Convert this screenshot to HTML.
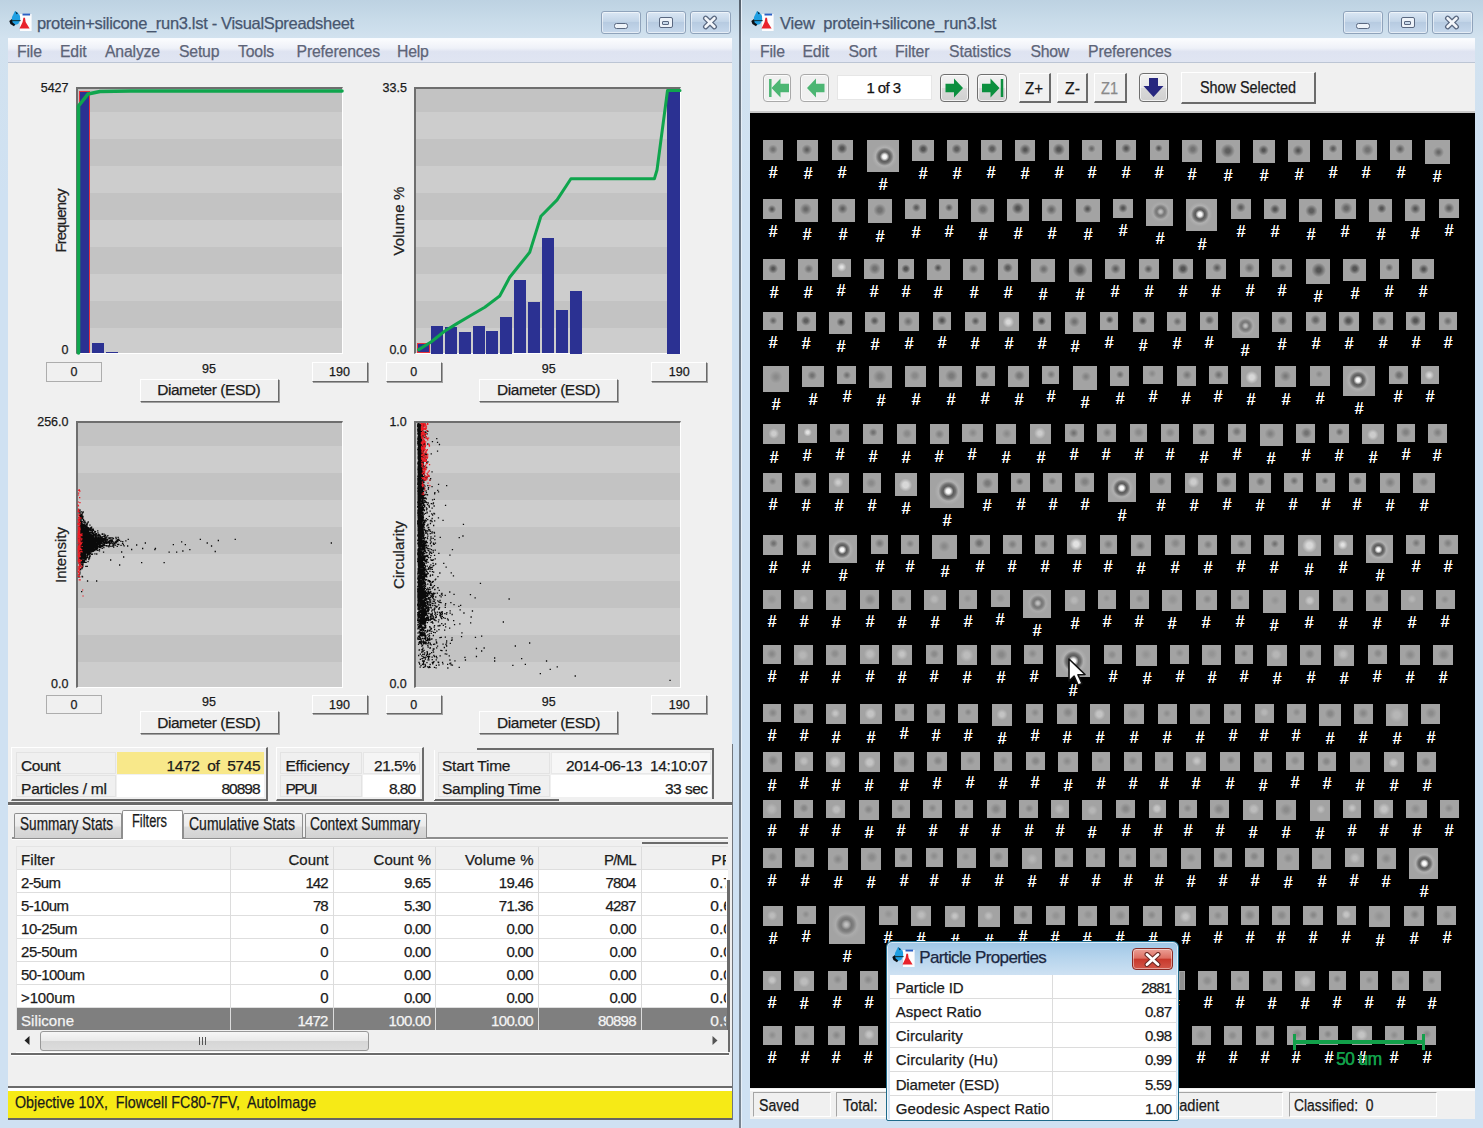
<!DOCTYPE html>
<html><head><meta charset="utf-8"><title>VisualSpreadsheet</title>
<style>
html,body{margin:0;padding:0;}
body{width:1483px;height:1128px;position:relative;overflow:hidden;background:#cfdff0;font-family:"Liberation Sans",sans-serif;}
div,span.t,svg{position:absolute;box-sizing:border-box;}
span.t{white-space:pre;-webkit-text-stroke:.25px;}
.p{background:#a3a3a3;}
.h{color:#fff;font-size:17px;line-height:17px;width:20px;text-align:center;text-shadow:.3px 0 0 #fff;transform:scaleX(.9);}
.raised{background:#f0f0f0;border:1px solid;border-color:#fff #696969 #696969 #fff;box-shadow:1px 1px 0 #a0a0a0;}
</style></head><body>
<div style="left:738px;top:0px;width:5px;height:1128px;background:#dfe9f4;"></div>
<div style="left:0px;top:0px;width:739px;height:1128px;background:linear-gradient(180deg,#bdd2e2 0px,#c8dbe9 20px,#d2e2ef 38px,#cfe1f2 200px,#cfe1f2 1128px);"></div>
<svg style="left:8px;top:9px" width="26" height="24" viewBox="8 9 26 24"><rect x="20" y="14" width="11.6" height="17" fill="#fcfcfd"/><rect x="22.5" y="13.6" width="7.6" height="1.9" fill="#2b5fc4"/><path d="M15 11 L12 17 L11.5 22 L14 25.2 L18.2 24 L20.2 20 L20 16 L17.5 12.5 Z" fill="#1f9fe2"/><path d="M12 19 L9.3 21 L10.4 24 L14 26.2 L15.2 24.6 L12.6 22.6 Z" fill="#0b1116"/><path d="M12 20.6 L20.6 20.6" stroke="#0f3a44" stroke-width="1.1"/><path d="M15.3 11.3 L18 13.6 L16.4 14.2 Z" fill="#0c2b45"/><path d="M23.4 17.8 L25 17.8 L25.6 22 L29.6 28.6 L19.4 28.6 L21 25.5 L22.6 22 Z" fill="#e8232c"/></svg>
<span class="t" style="left:37.0px;top:13.3px;font-size:16.5px;line-height:20px;color:#47566f;letter-spacing:-0.32px;">protein+silicone_run3.lst - VisualSpreadsheet</span>
<div style="left:600.5px;top:11px;width:40.5px;height:23px;border:1px solid #8fa3bb;border-radius:3px;background:linear-gradient(180deg,#dbe7f4,#c3d5e8 45%,#b7cbe1 50%,#c6d8ec);box-shadow:inset 0 0 0 1px rgba(255,255,255,.55);"></div>
<div style="left:613.75px;top:23px;width:14px;height:6px;border:1.5px solid #5a6880;border-radius:2.5px;background:#eef3f9;"></div>
<div style="left:645.5px;top:11px;width:40px;height:23px;border:1px solid #8fa3bb;border-radius:3px;background:linear-gradient(180deg,#dbe7f4,#c3d5e8 45%,#b7cbe1 50%,#c6d8ec);box-shadow:inset 0 0 0 1px rgba(255,255,255,.55);"></div>
<div style="left:658.5px;top:17px;width:14px;height:11px;border:1.5px solid #5a6880;border-radius:2px;background:#eef3f9;"></div>
<div style="left:662px;top:20.5px;width:7px;height:4px;border:1.5px solid #5a6880;border-radius:1px;background:#c9d9ea;"></div>
<div style="left:689.5px;top:11px;width:41px;height:23px;border:1px solid #8fa3bb;border-radius:3px;background:linear-gradient(180deg,#dbe7f4,#c3d5e8 45%,#b7cbe1 50%,#c6d8ec);box-shadow:inset 0 0 0 1px rgba(255,255,255,.55);"></div>
<svg style="left:702px;top:15px" width="16" height="15" viewBox="0 0 16 15"><path d="M3.6 3.2 L12.4 11.8 M12.4 3.2 L3.6 11.8" stroke="#5a6880" stroke-width="5.2" stroke-linecap="round"/><path d="M3.6 3.2 L12.4 11.8 M12.4 3.2 L3.6 11.8" stroke="#f4f7fb" stroke-width="2.6" stroke-linecap="round"/></svg>
<div style="left:738.7px;top:0px;width:2px;height:1128px;background:linear-gradient(180deg,#56616d 0,#6d7884 60px,#7a8590 100%);"></div>
<div style="left:740.5px;top:0px;width:1px;height:1128px;background:#e6eff8;"></div>
<div style="left:8px;top:38px;width:724px;height:25px;background:linear-gradient(180deg,#fbfcfe 0,#eef1f8 40%,#dee3f1 55%,#e0e5f2 100%);border-bottom:1px solid #bcc5d4;border-top:1px solid #f8fbff;"></div>
<span class="t" style="left:17.0px;top:42.0px;font-size:15.8px;line-height:19px;color:#5d6478;letter-spacing:-0.16px;">File</span>
<span class="t" style="left:60.0px;top:42.0px;font-size:15.8px;line-height:19px;color:#5d6478;letter-spacing:-0.17px;">Edit</span>
<span class="t" style="left:105.0px;top:42.0px;font-size:15.8px;line-height:19px;color:#5d6478;letter-spacing:-0.18px;">Analyze</span>
<span class="t" style="left:179.0px;top:42.0px;font-size:15.8px;line-height:19px;color:#5d6478;letter-spacing:-0.20px;">Setup</span>
<span class="t" style="left:238.0px;top:42.0px;font-size:15.8px;line-height:19px;color:#5d6478;letter-spacing:-0.18px;">Tools</span>
<span class="t" style="left:296.5px;top:42.0px;font-size:15.8px;line-height:19px;color:#5d6478;letter-spacing:-0.16px;">Preferences</span>
<span class="t" style="left:397.0px;top:42.0px;font-size:15.8px;line-height:19px;color:#5d6478;letter-spacing:-0.21px;">Help</span>
<div style="left:8px;top:63px;width:724px;height:1057px;background:#f0f0f0;"></div>
<div style="left:731.6px;top:744px;width:1.5px;height:376px;background:#70757c;"></div>
<div style="left:742px;top:0px;width:741px;height:1128px;background:linear-gradient(180deg,#bdd2e2 0px,#c8dbe9 20px,#d2e2ef 38px,#cfe1f2 200px,#cfe1f2 1128px);"></div>
<svg style="left:750px;top:9px" width="26" height="24" viewBox="8 9 26 24"><rect x="20" y="14" width="11.6" height="17" fill="#fcfcfd"/><rect x="22.5" y="13.6" width="7.6" height="1.9" fill="#2b5fc4"/><path d="M15 11 L12 17 L11.5 22 L14 25.2 L18.2 24 L20.2 20 L20 16 L17.5 12.5 Z" fill="#1f9fe2"/><path d="M12 19 L9.3 21 L10.4 24 L14 26.2 L15.2 24.6 L12.6 22.6 Z" fill="#0b1116"/><path d="M12 20.6 L20.6 20.6" stroke="#0f3a44" stroke-width="1.1"/><path d="M15.3 11.3 L18 13.6 L16.4 14.2 Z" fill="#0c2b45"/><path d="M23.4 17.8 L25 17.8 L25.6 22 L29.6 28.6 L19.4 28.6 L21 25.5 L22.6 22 Z" fill="#e8232c"/></svg>
<span class="t" style="left:780.0px;top:13.3px;font-size:16.5px;line-height:20px;color:#47566f;letter-spacing:-0.22px;">View  protein+silicone_run3.lst</span>
<div style="left:1342.5px;top:11px;width:40.5px;height:23px;border:1px solid #8fa3bb;border-radius:3px;background:linear-gradient(180deg,#dbe7f4,#c3d5e8 45%,#b7cbe1 50%,#c6d8ec);box-shadow:inset 0 0 0 1px rgba(255,255,255,.55);"></div>
<div style="left:1355.75px;top:23px;width:14px;height:6px;border:1.5px solid #5a6880;border-radius:2.5px;background:#eef3f9;"></div>
<div style="left:1387.5px;top:11px;width:40px;height:23px;border:1px solid #8fa3bb;border-radius:3px;background:linear-gradient(180deg,#dbe7f4,#c3d5e8 45%,#b7cbe1 50%,#c6d8ec);box-shadow:inset 0 0 0 1px rgba(255,255,255,.55);"></div>
<div style="left:1400.5px;top:17px;width:14px;height:11px;border:1.5px solid #5a6880;border-radius:2px;background:#eef3f9;"></div>
<div style="left:1404px;top:20.5px;width:7px;height:4px;border:1.5px solid #5a6880;border-radius:1px;background:#c9d9ea;"></div>
<div style="left:1431.5px;top:11px;width:41px;height:23px;border:1px solid #8fa3bb;border-radius:3px;background:linear-gradient(180deg,#dbe7f4,#c3d5e8 45%,#b7cbe1 50%,#c6d8ec);box-shadow:inset 0 0 0 1px rgba(255,255,255,.55);"></div>
<svg style="left:1444px;top:15px" width="16" height="15" viewBox="0 0 16 15"><path d="M3.6 3.2 L12.4 11.8 M12.4 3.2 L3.6 11.8" stroke="#5a6880" stroke-width="5.2" stroke-linecap="round"/><path d="M3.6 3.2 L12.4 11.8 M12.4 3.2 L3.6 11.8" stroke="#f4f7fb" stroke-width="2.6" stroke-linecap="round"/></svg>
<div style="left:750px;top:38px;width:725px;height:25px;background:linear-gradient(180deg,#fbfcfe 0,#eef1f8 40%,#dee3f1 55%,#e0e5f2 100%);border-bottom:1px solid #bcc5d4;border-top:1px solid #f8fbff;"></div>
<span class="t" style="left:760.0px;top:42.0px;font-size:15.8px;line-height:19px;color:#5d6478;letter-spacing:-0.16px;">File</span>
<span class="t" style="left:802.5px;top:42.0px;font-size:15.8px;line-height:19px;color:#5d6478;letter-spacing:-0.17px;">Edit</span>
<span class="t" style="left:848.5px;top:42.0px;font-size:15.8px;line-height:19px;color:#5d6478;letter-spacing:-0.18px;">Sort</span>
<span class="t" style="left:895.0px;top:42.0px;font-size:15.8px;line-height:19px;color:#5d6478;letter-spacing:-0.13px;">Filter</span>
<span class="t" style="left:949.0px;top:42.0px;font-size:15.8px;line-height:19px;color:#5d6478;letter-spacing:-0.13px;">Statistics</span>
<span class="t" style="left:1030.5px;top:42.0px;font-size:15.8px;line-height:19px;color:#5d6478;letter-spacing:-0.25px;">Show</span>
<span class="t" style="left:1088.0px;top:42.0px;font-size:15.8px;line-height:19px;color:#5d6478;letter-spacing:-0.16px;">Preferences</span>
<div style="left:750px;top:63px;width:725px;height:1056px;background:#f0f0f0;"></div>
<div style="left:75.5px;top:87px;width:267px;height:267px;background:linear-gradient(180deg,#c3c3c3 0.00px 23.40px,#cdcdcd 23.40px 50.30px,#c3c3c3 50.30px 77.20px,#cdcdcd 77.20px 104.10px,#c3c3c3 104.10px 131.00px,#cdcdcd 131.00px 157.90px,#c3c3c3 157.90px 184.80px,#cdcdcd 184.80px 211.70px,#c3c3c3 211.70px 238.60px,#cdcdcd 238.60px 267.00px);border:1.5px solid;border-color:#6e6e6e #fff #fff #6e6e6e;border-top-width:2px;border-left-width:2px;"></div>
<span class="t" style="left:40.7px;top:80.7px;font-size:12.5px;line-height:15px;color:#1a1a1a;">5427</span>
<span class="t" style="left:61.5px;top:343.2px;font-size:12.5px;line-height:15px;color:#1a1a1a;">0</span>
<span class="t" style="left:60px;top:221px;font-size:15px;line-height:15px;color:#222;transform:translate(-50%,-50%) rotate(-90deg);letter-spacing:-0.86px;">Frequency</span>
<div style="left:46px;top:362px;width:56px;height:19.5px;background:#f0f0f0;border:1px solid #adadad;"></div>
<span class="t" style="left:70.5px;top:364.7px;font-size:12.5px;line-height:15px;color:#1a1a1a;">0</span>
<span class="t" style="left:202.0px;top:362.4px;font-size:12.5px;line-height:15px;color:#1a1a1a;">95</span>
<div class="raised" style="left:311.5px;top:362px;width:56px;height:19.5px;"></div>
<span class="t" style="left:329.1px;top:364.7px;font-size:12.5px;line-height:15px;color:#1a1a1a;">190</span>
<div class="raised" style="left:139.5px;top:378.5px;width:139px;height:23px;"></div>
<span class="t" style="left:157.2px;top:380.1px;font-size:15.5px;line-height:19px;color:#1a1a1a;letter-spacing:-0.45px;">Diameter (ESD)</span>
<div style="left:413.8px;top:87px;width:267px;height:267px;background:linear-gradient(180deg,#c3c3c3 0.00px 23.40px,#cdcdcd 23.40px 50.30px,#c3c3c3 50.30px 77.20px,#cdcdcd 77.20px 104.10px,#c3c3c3 104.10px 131.00px,#cdcdcd 131.00px 157.90px,#c3c3c3 157.90px 184.80px,#cdcdcd 184.80px 211.70px,#c3c3c3 211.70px 238.60px,#cdcdcd 238.60px 267.00px);border:1.5px solid;border-color:#6e6e6e #fff #fff #6e6e6e;border-top-width:2px;border-left-width:2px;"></div>
<span class="t" style="left:382.5px;top:80.7px;font-size:12.5px;line-height:15px;color:#1a1a1a;">33.5</span>
<span class="t" style="left:389.4px;top:343.2px;font-size:12.5px;line-height:15px;color:#1a1a1a;">0.0</span>
<span class="t" style="left:398.3px;top:221px;font-size:15px;line-height:15px;color:#222;transform:translate(-50%,-50%) rotate(-90deg);letter-spacing:0.21px;">Volume %</span>
<div class="raised" style="left:385.7px;top:362px;width:56px;height:19.5px;"></div>
<span class="t" style="left:410.2px;top:364.7px;font-size:12.5px;line-height:15px;color:#1a1a1a;">0</span>
<span class="t" style="left:541.7px;top:362.4px;font-size:12.5px;line-height:15px;color:#1a1a1a;">95</span>
<div class="raised" style="left:651.2px;top:362px;width:56px;height:19.5px;"></div>
<span class="t" style="left:668.8px;top:364.7px;font-size:12.5px;line-height:15px;color:#1a1a1a;">190</span>
<div class="raised" style="left:479.2px;top:378.5px;width:139px;height:23px;"></div>
<span class="t" style="left:497.0px;top:380.1px;font-size:15.5px;line-height:19px;color:#1a1a1a;letter-spacing:-0.45px;">Diameter (ESD)</span>
<div style="left:75.5px;top:421px;width:267px;height:267px;background:linear-gradient(180deg,#c3c3c3 0.00px 23.40px,#cdcdcd 23.40px 50.30px,#c3c3c3 50.30px 77.20px,#cdcdcd 77.20px 104.10px,#c3c3c3 104.10px 131.00px,#cdcdcd 131.00px 157.90px,#c3c3c3 157.90px 184.80px,#cdcdcd 184.80px 211.70px,#c3c3c3 211.70px 238.60px,#cdcdcd 238.60px 267.00px);border:1.5px solid;border-color:#6e6e6e #fff #fff #6e6e6e;border-top-width:2px;border-left-width:2px;"></div>
<span class="t" style="left:37.2px;top:414.7px;font-size:12.5px;line-height:15px;color:#1a1a1a;">256.0</span>
<span class="t" style="left:51.1px;top:677.2px;font-size:12.5px;line-height:15px;color:#1a1a1a;">0.0</span>
<span class="t" style="left:60px;top:555px;font-size:15px;line-height:15px;color:#222;transform:translate(-50%,-50%) rotate(-90deg);letter-spacing:0.02px;">Intensity</span>
<div style="left:46px;top:694.8px;width:56px;height:19.5px;background:#f0f0f0;border:1px solid #adadad;"></div>
<span class="t" style="left:70.5px;top:697.5px;font-size:12.5px;line-height:15px;color:#1a1a1a;">0</span>
<span class="t" style="left:202.0px;top:695.2px;font-size:12.5px;line-height:15px;color:#1a1a1a;">95</span>
<div class="raised" style="left:311.5px;top:694.8px;width:56px;height:19.5px;"></div>
<span class="t" style="left:329.1px;top:697.5px;font-size:12.5px;line-height:15px;color:#1a1a1a;">190</span>
<div class="raised" style="left:139.5px;top:711.3px;width:139px;height:23px;"></div>
<span class="t" style="left:157.2px;top:712.9px;font-size:15.5px;line-height:19px;color:#1a1a1a;letter-spacing:-0.45px;">Diameter (ESD)</span>
<div style="left:413.8px;top:421px;width:267px;height:267px;background:linear-gradient(180deg,#c3c3c3 0.00px 23.40px,#cdcdcd 23.40px 50.30px,#c3c3c3 50.30px 77.20px,#cdcdcd 77.20px 104.10px,#c3c3c3 104.10px 131.00px,#cdcdcd 131.00px 157.90px,#c3c3c3 157.90px 184.80px,#cdcdcd 184.80px 211.70px,#c3c3c3 211.70px 238.60px,#cdcdcd 238.60px 267.00px);border:1.5px solid;border-color:#6e6e6e #fff #fff #6e6e6e;border-top-width:2px;border-left-width:2px;"></div>
<span class="t" style="left:389.4px;top:414.7px;font-size:12.5px;line-height:15px;color:#1a1a1a;">1.0</span>
<span class="t" style="left:389.4px;top:677.2px;font-size:12.5px;line-height:15px;color:#1a1a1a;">0.0</span>
<span class="t" style="left:398.3px;top:555px;font-size:15px;line-height:15px;color:#222;transform:translate(-50%,-50%) rotate(-90deg);letter-spacing:0.13px;">Circularity</span>
<div class="raised" style="left:385.7px;top:694.8px;width:56px;height:19.5px;"></div>
<span class="t" style="left:410.2px;top:697.5px;font-size:12.5px;line-height:15px;color:#1a1a1a;">0</span>
<span class="t" style="left:541.7px;top:695.2px;font-size:12.5px;line-height:15px;color:#1a1a1a;">95</span>
<div class="raised" style="left:651.2px;top:694.8px;width:56px;height:19.5px;"></div>
<span class="t" style="left:668.8px;top:697.5px;font-size:12.5px;line-height:15px;color:#1a1a1a;">190</span>
<div class="raised" style="left:479.2px;top:711.3px;width:139px;height:23px;"></div>
<span class="t" style="left:497.0px;top:712.9px;font-size:15.5px;line-height:19px;color:#1a1a1a;letter-spacing:-0.45px;">Diameter (ESD)</span>
<div style="left:78.5px;top:91px;width:11.5px;height:262px;background:#2b3192;border:1px solid #e8323c;border-bottom:none;"></div>
<div style="left:92px;top:342.5px;width:12px;height:10.5px;background:#2b3192;"></div>
<div style="left:105.5px;top:351.5px;width:12px;height:1.5px;background:#2b3192;"></div>
<svg style="left:70px;top:80px" width="280" height="280" viewBox="70 80 280 280"><path d="M78.5 353 L78.5 106 L88 94 L100 91.5 L130 91 L342 91" fill="none" stroke="#0fa54d" stroke-width="3.6" stroke-linejoin="round" stroke-linecap="round"/></svg>
<div style="left:417.4px;top:342.9px;width:12.6px;height:10.6px;background:#2b3192;border:1px solid #e8323c;"></div>
<div style="left:431px;top:326px;width:12.3px;height:27.5px;background:#2b3192;"></div>
<div style="left:444.8px;top:327px;width:12.2px;height:26.5px;background:#2b3192;"></div>
<div style="left:458.6px;top:332px;width:12px;height:21.5px;background:#2b3192;"></div>
<div style="left:472.5px;top:326px;width:12.3px;height:27.5px;background:#2b3192;"></div>
<div style="left:486.3px;top:331px;width:12.2px;height:22.5px;background:#2b3192;"></div>
<div style="left:500.2px;top:316.5px;width:12px;height:37px;background:#2b3192;"></div>
<div style="left:514.2px;top:279.8px;width:12.3px;height:73.7px;background:#2b3192;"></div>
<div style="left:528.2px;top:301.7px;width:12px;height:51.8px;background:#2b3192;"></div>
<div style="left:542.1px;top:237.9px;width:12px;height:115.6px;background:#2b3192;"></div>
<div style="left:556px;top:309.7px;width:12.2px;height:43.8px;background:#2b3192;"></div>
<div style="left:569.8px;top:290.5px;width:12.2px;height:63px;background:#2b3192;"></div>
<div style="left:667px;top:92px;width:12.5px;height:261.5px;background:#2b3192;"></div>
<svg style="left:410px;top:80px" width="280" height="280" viewBox="410 80 280 280"><path d="M418.7 349.6 L431 342 L444.9 331 L457.3 323.4 L469.8 316 L484.8 307.2 L499.7 296 L509.7 277.3 L519.7 264.8 L529.7 252.3 L535.9 232.4 L540.9 216.2 L557.1 199.9 L570.9 178.7 L654.4 178.7 L657 170 L667.5 90.5 L680 90.5" fill="none" stroke="#0fa54d" stroke-width="3" stroke-linejoin="round" stroke-linecap="round"/></svg>
<svg style="left:76px;top:423px" width="266" height="264" viewBox="76 423 266 264"><path d="M81.4 550.3h1.3M78.9 555.9h1.3M84.4 539.5h1.3M84.0 543.8h1.3M78.6 537.2h1.3M79.1 543.4h1.3M82.7 543.8h1.3M80.3 536.4h1.3M86.2 551.1h1.3M82.3 537.4h1.3M108.2 546.8h1.3M81.0 547.6h1.3M79.5 548.9h1.3M91.8 544.7h1.3M79.9 527.3h1.3M82.0 534.5h1.3M84.6 544.2h1.3M80.1 543.0h1.3M87.4 535.9h1.3M85.3 544.6h1.3M83.1 536.4h1.3M87.9 553.3h1.3M80.5 529.5h1.3M94.9 538.9h1.3M88.8 537.1h1.3M79.3 573.9h1.3M82.6 541.7h1.3M83.7 536.3h1.3M78.6 531.1h1.3M85.1 529.3h1.3M95.0 538.6h1.3M85.5 552.9h1.3M85.2 526.5h1.3M101.5 543.3h1.3M83.4 539.8h1.3M88.0 539.4h1.3M86.6 555.4h1.3M81.0 540.6h1.3M82.2 540.5h1.3M83.3 539.8h1.3M79.8 544.5h1.3M90.0 542.9h1.3M79.4 541.7h1.3M94.7 546.3h1.3M79.0 526.9h1.3M95.5 543.3h1.3M92.0 544.4h1.3M82.6 535.6h1.3M81.9 560.4h1.3M79.6 522.0h1.3M79.9 542.4h1.3M83.6 548.0h1.3M85.4 541.4h1.3M82.6 542.4h1.3M82.0 518.9h1.3M87.7 534.4h1.3M84.1 531.8h1.3M78.7 529.0h1.3M96.7 543.2h1.3M91.1 529.9h1.3M82.3 537.8h1.3M86.3 543.6h1.3M78.8 549.2h1.3M79.7 544.8h1.3M81.6 541.7h1.3M79.6 541.6h1.3M79.2 539.7h1.3M94.9 542.3h1.3M85.9 545.1h1.3M81.7 547.7h1.3M81.9 555.5h1.3M118.1 544.5h1.3M83.3 537.6h1.3M79.2 542.0h1.3M81.7 539.7h1.3M79.7 563.2h1.3M78.5 556.2h1.3M79.6 537.2h1.3M84.6 551.8h1.3M109.0 542.1h1.3M94.2 540.2h1.3M82.0 534.2h1.3M79.8 543.5h1.3M90.4 534.1h1.3M81.5 544.7h1.3M111.9 546.0h1.3M93.6 544.7h1.3M89.1 530.2h1.3M80.4 531.2h1.3M78.5 540.2h1.3M78.5 539.7h1.3M87.7 546.8h1.3M103.4 534.2h1.3M113.7 543.3h1.3M103.1 540.0h1.3M80.4 547.4h1.3M80.1 546.0h1.3M96.7 547.3h1.3M93.0 533.9h1.3M91.2 542.6h1.3M79.0 527.3h1.3M90.5 530.4h1.3M89.4 537.5h1.3M90.8 542.0h1.3M81.5 550.1h1.3M82.3 516.7h1.3M82.4 556.3h1.3M79.8 535.4h1.3M79.4 556.4h1.3M91.4 551.6h1.3M79.6 556.7h1.3M86.9 523.1h1.3M81.8 536.4h1.3M78.4 539.5h1.3M106.6 539.4h1.3M100.0 537.8h1.3M82.9 553.8h1.3M80.2 526.4h1.3M80.6 539.3h1.3M85.4 547.3h1.3M80.7 536.5h1.3M97.6 542.6h1.3M81.8 528.6h1.3M97.1 543.0h1.3M82.7 551.3h1.3M84.4 536.5h1.3M84.2 550.8h1.3M79.9 542.9h1.3M78.3 543.9h1.3M83.4 536.2h1.3M88.6 535.9h1.3M84.1 538.8h1.3M84.8 542.3h1.3M84.9 537.6h1.3M80.6 538.3h1.3M84.0 556.5h1.3M84.9 542.7h1.3M83.0 520.8h1.3M85.9 532.1h1.3M87.7 541.2h1.3M83.1 531.1h1.3M101.0 540.6h1.3M87.9 553.3h1.3M80.7 523.3h1.3M84.9 556.5h1.3M79.5 533.6h1.3M79.3 537.2h1.3M80.5 543.0h1.3M78.9 531.1h1.3M96.5 534.8h1.3M79.6 537.9h1.3M79.5 524.7h1.3M95.5 544.7h1.3M102.7 541.0h1.3M82.4 512.0h1.3M92.6 542.8h1.3M79.7 528.8h1.3M81.6 546.6h1.3M80.0 533.9h1.3M78.5 559.8h1.3M84.8 540.0h1.3M81.5 542.2h1.3M86.1 538.7h1.3M111.9 541.4h1.3M90.7 544.2h1.3M80.8 540.6h1.3M78.6 543.3h1.3M79.4 532.3h1.3M82.7 556.5h1.3M80.7 530.9h1.3M79.6 554.8h1.3M87.9 537.1h1.3M79.0 558.8h1.3M82.7 546.6h1.3M78.9 557.6h1.3M91.2 538.4h1.3M79.0 544.3h1.3M94.2 540.1h1.3M83.1 535.2h1.3M99.2 545.7h1.3M80.8 550.6h1.3M80.5 551.3h1.3M79.2 543.5h1.3M80.1 544.6h1.3M81.3 535.5h1.3M81.0 558.4h1.3M83.8 545.1h1.3M78.4 552.0h1.3M80.6 559.2h1.3M84.7 542.8h1.3M80.0 515.2h1.3M79.2 545.9h1.3M92.0 535.6h1.3M92.7 544.1h1.3M82.3 526.6h1.3M110.6 541.3h1.3M81.7 549.4h1.3M86.4 531.1h1.3M82.4 539.6h1.3M79.4 544.7h1.3M78.9 541.0h1.3M79.7 532.6h1.3M79.0 554.8h1.3M87.2 529.2h1.3M80.9 541.9h1.3M83.2 549.2h1.3M79.7 532.9h1.3M104.4 542.3h1.3M107.1 539.4h1.3M105.3 540.8h1.3M81.3 541.2h1.3M82.1 541.9h1.3M83.4 535.4h1.3M83.9 541.4h1.3M78.3 541.0h1.3M82.4 545.7h1.3M78.6 552.0h1.3M80.4 542.8h1.3M85.3 528.2h1.3M86.9 539.3h1.3M88.4 546.4h1.3M81.5 534.4h1.3M111.8 543.9h1.3M86.5 551.3h1.3M78.7 554.9h1.3M86.2 527.5h1.3M88.9 542.9h1.3M84.2 537.1h1.3M83.9 549.6h1.3M92.3 533.0h1.3M85.3 551.1h1.3M87.8 534.9h1.3M80.4 547.3h1.3M81.9 542.5h1.3M79.2 549.4h1.3M86.2 533.1h1.3M86.2 537.7h1.3M78.3 528.2h1.3M91.1 541.4h1.3M84.4 531.4h1.3M86.9 552.5h1.3M80.6 548.7h1.3M78.9 539.6h1.3M80.1 559.6h1.3M89.1 549.0h1.3M82.2 539.7h1.3M83.5 535.2h1.3M86.0 529.3h1.3M86.5 545.3h1.3M80.6 544.4h1.3M89.2 538.7h1.3M78.4 556.9h1.3M78.8 539.3h1.3M87.7 551.9h1.3M87.3 539.3h1.3M83.3 552.2h1.3M83.3 555.8h1.3M80.1 557.7h1.3M108.9 542.0h1.3M83.2 540.8h1.3M92.0 547.4h1.3M80.8 539.2h1.3M80.2 548.8h1.3M85.3 539.6h1.3M79.5 512.9h1.3M79.4 537.1h1.3M92.0 530.0h1.3M88.0 540.7h1.3M80.4 551.7h1.3M78.5 532.8h1.3M78.3 527.6h1.3M81.2 542.1h1.3M79.5 535.8h1.3M93.0 545.3h1.3M78.3 541.6h1.3M79.3 518.8h1.3M99.2 539.6h1.3M81.0 519.2h1.3M82.0 512.9h1.3M85.4 559.9h1.3M81.9 534.2h1.3M78.7 545.8h1.3M79.2 546.5h1.3M100.2 538.9h1.3M80.6 540.2h1.3M80.0 555.0h1.3M82.0 561.4h1.3M91.7 538.3h1.3M86.3 557.1h1.3M84.7 531.1h1.3M88.5 551.9h1.3M83.1 546.1h1.3M89.5 538.3h1.3M78.7 533.5h1.3M99.2 544.6h1.3M81.7 549.8h1.3M81.1 539.5h1.3M80.7 511.9h1.3M86.8 538.5h1.3M82.3 553.4h1.3M79.8 545.7h1.3M97.2 544.0h1.3M83.8 545.1h1.3M123.5 545.8h1.3M83.1 545.4h1.3M79.1 547.6h1.3M81.6 547.8h1.3M80.7 545.9h1.3M85.0 551.9h1.3M82.6 531.1h1.3M82.6 532.2h1.3M81.6 540.0h1.3M78.8 536.0h1.3M79.4 572.1h1.3M83.9 529.4h1.3M80.2 525.3h1.3M80.8 541.6h1.3M83.0 551.0h1.3M102.9 545.4h1.3M78.5 520.7h1.3M78.6 534.8h1.3M83.4 522.7h1.3M85.4 549.6h1.3M99.2 541.5h1.3M92.3 550.5h1.3M80.6 518.4h1.3M79.2 549.7h1.3M87.5 548.7h1.3M101.0 540.6h1.3M89.9 532.7h1.3M83.2 539.0h1.3M90.5 541.0h1.3M80.4 555.5h1.3M81.2 534.2h1.3M79.4 541.3h1.3M87.9 551.4h1.3M79.3 554.7h1.3M85.3 545.7h1.3M82.2 543.7h1.3M78.4 558.4h1.3M81.2 515.7h1.3M86.6 546.1h1.3M95.5 538.2h1.3M80.6 542.7h1.3M104.2 540.7h1.3M78.5 531.2h1.3M83.8 537.3h1.3M80.7 531.4h1.3M87.1 546.2h1.3M78.6 537.4h1.3M81.6 527.9h1.3M80.1 549.7h1.3M91.1 541.0h1.3M80.1 528.2h1.3M106.3 539.4h1.3M80.4 560.5h1.3M80.3 542.1h1.3M102.6 538.7h1.3M83.8 543.9h1.3M82.6 547.8h1.3M87.1 545.4h1.3M82.3 539.8h1.3M80.2 547.6h1.3M78.7 540.4h1.3M78.8 520.9h1.3M95.5 547.6h1.3M88.9 556.7h1.3M81.5 541.1h1.3M79.9 558.9h1.3M78.6 533.4h1.3M87.0 536.4h1.3M81.5 548.4h1.3M79.8 550.8h1.3M81.8 541.6h1.3M103.2 547.6h1.3M80.2 561.9h1.3M81.8 549.7h1.3M82.8 525.7h1.3M78.7 529.7h1.3M98.5 542.1h1.3M80.0 525.6h1.3M78.5 561.6h1.3M82.5 547.7h1.3M78.6 521.9h1.3M78.6 567.4h1.3M80.7 550.9h1.3M89.3 546.2h1.3M80.8 535.7h1.3M103.6 539.6h1.3M88.4 538.0h1.3M81.3 541.4h1.3M89.6 542.0h1.3M98.2 535.0h1.3M78.5 519.1h1.3M80.4 514.1h1.3M102.9 542.8h1.3M82.2 541.4h1.3M83.7 551.0h1.3M99.4 544.3h1.3M89.0 552.2h1.3M92.1 542.6h1.3M81.5 527.5h1.3M81.4 529.8h1.3M79.0 557.7h1.3M80.1 541.7h1.3M78.8 532.2h1.3M78.6 531.0h1.3M109.7 540.7h1.3M95.5 545.1h1.3M79.0 540.8h1.3M79.1 522.5h1.3M83.0 541.6h1.3M80.4 528.2h1.3M87.3 546.5h1.3M89.3 546.9h1.3M79.3 527.1h1.3M93.0 539.7h1.3M82.0 553.9h1.3M89.0 543.0h1.3M80.6 549.3h1.3M79.6 552.9h1.3M81.5 532.5h1.3M82.3 553.1h1.3M80.4 540.9h1.3M91.5 531.6h1.3M79.2 511.2h1.3M83.5 548.8h1.3M98.0 534.4h1.3M78.6 539.8h1.3M80.0 547.0h1.3M107.2 535.7h1.3M82.0 530.0h1.3M94.4 537.9h1.3M90.3 543.0h1.3M101.6 545.2h1.3M86.0 548.0h1.3M80.3 537.3h1.3M80.1 546.1h1.3M80.7 528.7h1.3M80.1 531.9h1.3M78.4 532.6h1.3M79.9 556.7h1.3M81.3 546.9h1.3M84.7 555.9h1.3M78.8 551.4h1.3M84.7 546.5h1.3M86.5 545.3h1.3M87.8 543.8h1.3M82.5 539.8h1.3M102.8 544.3h1.3M81.3 532.5h1.3M82.6 537.8h1.3M94.3 546.2h1.3M80.1 541.3h1.3M88.7 541.7h1.3M96.9 542.0h1.3M82.7 545.7h1.3M95.5 537.2h1.3M83.2 542.3h1.3M84.7 542.7h1.3M86.5 544.3h1.3M86.1 539.7h1.3M82.0 535.9h1.3M81.0 541.3h1.3M84.2 545.2h1.3M83.7 539.6h1.3M91.4 545.2h1.3M79.4 539.9h1.3M101.2 545.6h1.3M78.7 539.3h1.3M99.1 535.1h1.3M86.0 552.4h1.3M92.2 546.6h1.3M80.3 558.0h1.3M82.4 551.9h1.3M79.9 523.8h1.3M80.3 530.6h1.3M82.2 548.5h1.3M79.4 541.9h1.3M96.5 548.6h1.3M78.6 522.1h1.3M78.6 533.5h1.3M92.9 546.8h1.3M84.7 549.2h1.3M86.2 538.7h1.3M85.3 549.5h1.3M82.7 535.9h1.3M82.9 532.9h1.3M78.5 530.8h1.3M80.4 532.8h1.3M89.8 542.8h1.3M79.9 529.0h1.3M83.4 545.2h1.3M82.8 544.6h1.3M79.1 528.0h1.3M78.6 546.8h1.3M86.4 552.3h1.3M90.3 546.4h1.3M84.0 551.3h1.3M82.1 545.4h1.3M102.4 545.9h1.3M122.7 544.5h1.3M88.8 543.2h1.3M110.3 539.9h1.3M83.7 560.7h1.3M79.7 534.6h1.3M90.7 543.5h1.3M81.8 539.9h1.3M89.6 548.8h1.3M80.9 560.7h1.3M91.8 545.6h1.3M98.5 545.2h1.3M80.2 540.4h1.3M81.4 553.8h1.3M78.6 544.6h1.3M100.3 543.5h1.3M87.4 544.9h1.3M90.6 539.3h1.3M79.3 524.9h1.3M81.9 538.8h1.3M94.8 535.6h1.3M95.4 539.4h1.3M79.2 558.4h1.3M82.3 540.9h1.3M91.1 539.9h1.3M85.2 566.3h1.3M81.9 542.5h1.3M79.9 529.2h1.3M89.2 552.9h1.3M80.6 547.5h1.3M86.5 551.5h1.3M87.0 540.5h1.3M81.3 544.2h1.3M79.6 541.5h1.3M86.0 533.0h1.3M96.4 543.7h1.3M79.4 543.9h1.3M78.5 559.6h1.3M78.3 537.8h1.3M81.8 545.3h1.3M80.3 528.7h1.3M80.1 534.0h1.3M86.1 537.4h1.3M100.4 541.8h1.3M80.5 544.4h1.3M86.4 544.2h1.3M94.7 542.5h1.3M80.8 530.8h1.3M78.4 531.5h1.3M81.8 531.2h1.3M86.6 524.9h1.3M88.9 546.9h1.3M80.6 544.2h1.3M84.4 540.0h1.3M82.5 541.8h1.3M90.4 543.6h1.3M78.4 513.0h1.3M79.5 532.7h1.3M80.1 531.0h1.3M86.5 535.9h1.3M91.7 543.7h1.3M81.2 549.6h1.3M78.7 558.1h1.3M88.4 533.9h1.3M78.4 553.2h1.3M83.3 528.9h1.3M89.1 537.1h1.3M79.2 544.0h1.3M80.4 551.2h1.3M89.4 542.9h1.3M87.8 547.7h1.3M80.8 527.4h1.3M84.8 527.9h1.3M84.2 547.5h1.3M80.8 523.9h1.3M80.3 519.0h1.3M95.3 545.1h1.3M80.5 542.3h1.3M89.2 551.5h1.3M81.5 535.7h1.3M95.3 539.9h1.3M97.4 544.3h1.3M86.3 537.5h1.3M109.2 537.8h1.3M83.4 549.1h1.3M93.9 535.0h1.3M82.9 539.6h1.3M81.2 528.0h1.3M80.2 538.3h1.3M97.6 540.3h1.3M79.5 547.0h1.3M99.5 541.8h1.3M81.7 543.0h1.3M78.6 543.8h1.3M87.7 534.3h1.3M89.0 534.0h1.3M78.8 531.7h1.3M91.9 538.7h1.3M92.0 543.1h1.3M94.5 540.4h1.3M98.0 543.3h1.3M80.1 539.7h1.3M79.2 564.1h1.3M91.7 543.8h1.3M86.3 546.4h1.3M81.0 528.1h1.3M79.1 558.0h1.3M80.1 552.4h1.3M81.4 539.6h1.3M80.7 542.5h1.3M81.0 539.3h1.3M81.4 531.8h1.3M104.9 535.4h1.3M86.0 541.1h1.3M78.6 530.1h1.3M90.2 544.9h1.3M81.7 537.9h1.3M80.3 528.2h1.3M94.2 549.2h1.3M79.8 553.0h1.3M78.3 547.9h1.3M108.8 545.9h1.3M78.3 526.8h1.3M91.0 541.9h1.3M79.9 531.0h1.3M92.6 541.7h1.3M80.7 549.8h1.3M80.2 538.3h1.3M87.9 538.1h1.3M86.4 541.5h1.3M79.0 545.9h1.3M90.7 532.6h1.3M86.2 536.7h1.3M82.3 549.3h1.3M96.0 549.6h1.3M78.5 555.0h1.3M80.1 539.5h1.3M83.9 560.5h1.3M82.1 546.9h1.3M83.2 537.0h1.3M84.4 541.9h1.3M86.6 529.0h1.3M81.7 538.8h1.3M93.1 544.2h1.3M87.0 541.3h1.3M82.9 535.8h1.3M90.2 538.7h1.3M83.3 539.2h1.3M95.6 541.7h1.3M81.2 548.3h1.3M88.0 543.7h1.3M79.7 535.9h1.3M80.6 535.3h1.3M79.7 554.0h1.3M81.5 552.0h1.3M88.7 558.2h1.3M79.2 546.9h1.3M82.2 540.4h1.3M111.3 542.7h1.3M82.9 526.7h1.3M80.0 538.0h1.3M80.1 537.4h1.3M82.2 551.2h1.3M90.8 542.8h1.3M87.8 531.6h1.3M83.3 541.5h1.3M79.5 532.0h1.3M89.1 537.5h1.3M97.4 536.5h1.3M89.4 545.1h1.3M82.7 543.6h1.3M95.3 548.9h1.3M90.2 537.8h1.3M87.4 528.2h1.3M86.5 535.2h1.3M86.2 543.4h1.3M79.1 523.1h1.3M88.3 547.2h1.3M86.2 541.5h1.3M83.2 551.2h1.3M86.1 531.7h1.3M99.6 544.6h1.3M79.9 530.3h1.3M82.2 527.4h1.3M83.7 544.0h1.3M84.6 541.1h1.3M79.7 547.0h1.3M84.2 521.2h1.3M79.2 528.1h1.3M88.4 537.7h1.3M84.0 530.9h1.3M84.2 529.0h1.3M82.5 547.8h1.3M87.5 539.9h1.3M82.3 541.9h1.3M111.6 540.2h1.3M81.8 549.1h1.3M82.4 544.2h1.3M78.4 530.0h1.3M87.9 545.1h1.3M81.8 540.8h1.3M89.1 546.1h1.3M100.8 539.0h1.3M91.2 540.8h1.3M82.3 542.7h1.3M90.3 544.6h1.3M91.6 537.3h1.3M84.9 534.5h1.3M80.3 551.6h1.3M86.4 539.9h1.3M92.0 544.0h1.3M81.1 530.6h1.3M84.7 552.8h1.3M81.8 555.1h1.3M93.5 541.0h1.3M80.6 552.0h1.3M82.7 541.8h1.3M88.5 542.0h1.3M80.9 541.8h1.3M83.5 549.2h1.3M82.8 532.4h1.3M81.9 530.3h1.3M99.4 542.3h1.3M92.4 540.0h1.3M97.2 542.0h1.3M92.5 538.6h1.3M86.3 542.7h1.3M102.6 541.5h1.3M86.8 541.5h1.3M79.5 546.9h1.3M80.4 543.2h1.3M79.6 530.9h1.3M97.1 542.2h1.3M96.0 538.9h1.3M85.8 543.8h1.3M96.2 535.0h1.3M90.7 543.6h1.3M87.7 537.6h1.3M84.4 541.0h1.3M95.4 536.5h1.3M84.8 540.9h1.3M79.5 550.0h1.3M83.7 550.9h1.3M79.5 546.2h1.3M83.7 530.3h1.3M94.2 541.6h1.3M78.4 549.2h1.3M84.9 533.6h1.3M87.1 545.3h1.3M82.6 533.7h1.3M104.2 545.5h1.3M86.4 546.4h1.3M78.5 526.9h1.3M99.7 537.8h1.3M81.5 553.7h1.3M83.6 540.3h1.3M96.5 548.3h1.3M86.2 544.1h1.3M81.6 547.8h1.3M83.4 534.9h1.3M84.3 542.3h1.3M82.9 535.1h1.3M82.7 524.6h1.3M81.1 534.9h1.3M92.4 536.2h1.3M80.8 548.7h1.3M83.9 554.2h1.3M90.9 540.2h1.3M81.5 537.9h1.3M85.4 547.7h1.3M86.4 542.0h1.3M88.6 539.6h1.3M95.6 540.1h1.3M81.2 540.6h1.3M78.3 552.0h1.3M85.8 558.0h1.3M86.9 545.4h1.3M85.9 524.8h1.3M86.0 533.1h1.3M85.6 532.7h1.3M87.4 544.0h1.3M83.2 554.8h1.3M89.8 544.7h1.3M78.6 546.2h1.3M90.2 549.1h1.3M82.0 534.0h1.3M92.1 543.1h1.3M80.7 527.9h1.3M81.2 533.4h1.3M82.8 545.4h1.3M86.5 543.8h1.3M85.0 540.4h1.3M78.6 558.2h1.3M85.2 551.7h1.3M98.4 540.9h1.3M82.2 542.0h1.3M85.5 562.4h1.3M83.5 531.7h1.3M82.6 552.6h1.3M80.2 551.1h1.3M79.6 542.6h1.3M87.5 541.6h1.3M79.3 546.5h1.3M94.6 541.1h1.3M79.4 560.2h1.3M80.5 543.5h1.3M88.9 542.3h1.3M90.2 543.3h1.3M88.3 548.3h1.3M79.0 526.0h1.3M86.2 539.3h1.3M99.8 537.4h1.3M80.6 558.4h1.3M78.4 537.0h1.3M78.4 527.9h1.3M79.0 523.3h1.3M81.3 540.7h1.3M94.1 538.5h1.3M83.6 549.5h1.3M85.1 544.4h1.3M82.9 539.2h1.3M91.1 538.6h1.3M81.9 532.8h1.3M82.6 530.8h1.3M82.2 546.9h1.3M90.6 527.5h1.3M85.0 540.7h1.3M107.5 542.5h1.3M88.0 544.4h1.3M85.7 535.2h1.3M108.6 543.3h1.3M81.3 529.1h1.3M82.8 548.6h1.3M87.5 537.0h1.3M85.7 553.0h1.3M81.0 529.7h1.3M78.3 540.4h1.3M85.4 549.9h1.3M91.8 542.7h1.3M92.6 540.5h1.3M91.7 546.4h1.3M80.9 531.1h1.3M93.5 544.2h1.3M97.9 535.6h1.3M81.7 552.6h1.3M91.1 545.3h1.3M80.1 541.5h1.3M80.4 515.9h1.3M85.8 537.6h1.3M80.2 530.2h1.3M80.7 541.6h1.3M83.2 525.1h1.3M79.0 548.8h1.3M80.4 523.7h1.3M85.2 555.0h1.3M84.2 530.6h1.3M83.5 536.5h1.3M80.0 537.6h1.3M79.9 538.2h1.3M84.9 534.0h1.3M82.4 536.0h1.3M78.7 540.7h1.3M125.2 540.8h1.3M86.3 544.1h1.3M90.7 546.0h1.3M81.7 552.9h1.3M84.2 543.8h1.3M115.5 541.6h1.3M94.4 535.2h1.3M80.7 542.7h1.3M90.4 528.4h1.3M90.0 548.2h1.3M92.0 545.6h1.3M78.6 539.3h1.3M80.1 543.5h1.3M78.7 546.2h1.3M84.8 547.9h1.3M101.8 538.7h1.3M97.6 546.7h1.3M82.4 546.7h1.3M79.3 550.4h1.3M84.9 539.9h1.3M86.5 552.3h1.3M82.3 537.6h1.3M83.1 554.5h1.3M116.6 546.4h1.3M80.3 549.8h1.3M81.8 543.4h1.3M96.9 548.3h1.3M78.7 528.2h1.3M90.6 539.3h1.3M112.1 538.0h1.3M78.8 554.2h1.3M100.7 546.3h1.3M87.3 538.6h1.3M89.6 549.5h1.3M79.2 537.4h1.3M79.4 549.7h1.3M83.6 544.8h1.3M79.5 549.0h1.3M87.4 552.9h1.3M80.0 542.9h1.3M78.6 549.4h1.3M100.0 540.3h1.3M94.4 543.5h1.3M83.0 538.2h1.3M79.1 562.4h1.3M86.2 535.1h1.3M83.1 532.2h1.3M83.5 555.8h1.3M86.2 544.9h1.3M78.8 548.3h1.3M88.3 537.9h1.3M94.7 540.6h1.3M80.8 536.2h1.3M80.8 544.8h1.3M92.9 539.9h1.3M83.7 546.2h1.3M81.4 545.7h1.3M109.1 540.7h1.3M78.8 556.0h1.3M80.2 531.3h1.3M83.5 539.9h1.3M80.1 550.0h1.3M81.9 576.9h1.3M99.0 540.7h1.3M79.1 535.2h1.3M78.8 566.9h1.3M88.7 536.5h1.3M78.4 575.2h1.3M91.5 539.8h1.3M78.3 547.4h1.3M92.6 538.1h1.3M82.9 540.5h1.3M97.7 542.6h1.3M79.5 556.5h1.3M79.9 543.8h1.3M80.1 523.8h1.3M79.0 555.7h1.3M83.8 547.9h1.3M80.9 545.5h1.3M88.1 550.6h1.3M91.7 538.2h1.3M78.8 537.4h1.3M88.9 532.7h1.3M78.8 552.3h1.3M91.6 536.0h1.3M94.3 549.6h1.3M83.7 561.1h1.3M83.5 543.4h1.3M94.7 541.2h1.3M92.6 544.9h1.3M82.0 546.5h1.3M85.5 548.1h1.3M78.3 527.8h1.3M84.1 540.3h1.3M79.3 536.7h1.3M94.3 532.7h1.3M81.4 539.0h1.3M89.4 535.4h1.3M78.8 562.8h1.3M83.8 525.6h1.3M84.1 530.8h1.3M78.5 538.5h1.3M105.7 541.8h1.3M79.2 549.0h1.3M80.6 542.6h1.3M79.1 538.8h1.3M87.9 541.9h1.3M85.6 542.9h1.3M85.2 528.9h1.3M79.2 538.8h1.3M94.6 541.2h1.3M79.4 538.0h1.3M83.7 534.3h1.3M79.3 541.5h1.3M82.5 550.0h1.3M94.1 546.5h1.3M79.6 524.1h1.3M79.7 533.0h1.3M92.3 546.5h1.3M82.7 537.9h1.3M92.9 536.3h1.3M101.0 540.9h1.3M90.3 539.1h1.3M81.6 548.0h1.3M82.9 558.4h1.3M97.8 540.6h1.3M91.8 542.6h1.3M84.1 539.1h1.3M103.6 543.8h1.3M82.7 538.6h1.3M86.3 535.3h1.3M78.9 552.8h1.3M82.8 539.6h1.3M79.5 541.4h1.3M106.3 542.7h1.3M86.3 523.8h1.3M91.6 550.3h1.3M78.6 524.3h1.3M86.5 540.4h1.3M80.9 557.6h1.3M84.6 552.0h1.3M80.6 534.5h1.3M84.2 522.0h1.3M81.0 552.1h1.3M81.2 538.3h1.3M85.5 538.3h1.3M103.3 538.9h1.3M83.3 540.9h1.3M84.4 544.1h1.3M79.4 546.4h1.3M81.1 534.2h1.3M80.5 546.5h1.3M79.0 519.3h1.3M85.8 537.2h1.3M85.1 538.3h1.3M88.2 537.8h1.3M83.2 529.4h1.3M83.4 537.8h1.3M81.3 541.9h1.3M84.0 547.7h1.3M82.2 540.2h1.3M81.8 540.7h1.3M94.1 542.0h1.3M83.7 552.9h1.3M81.0 550.4h1.3M90.1 541.1h1.3M79.7 563.0h1.3M82.9 549.3h1.3M78.8 531.4h1.3M88.9 546.1h1.3M79.2 546.2h1.3M89.0 557.8h1.3M79.6 535.9h1.3M87.3 547.2h1.3M86.0 550.0h1.3M84.1 528.4h1.3M89.0 541.0h1.3M83.5 526.1h1.3M90.6 538.1h1.3M79.4 516.1h1.3M94.7 549.7h1.3M85.4 541.9h1.3M83.8 552.8h1.3M82.6 538.6h1.3M90.5 547.2h1.3M82.1 531.8h1.3M83.1 527.1h1.3M81.1 545.9h1.3M82.3 532.4h1.3M81.4 538.0h1.3M90.7 545.6h1.3M83.0 532.6h1.3M79.9 539.4h1.3M85.2 545.8h1.3M85.3 557.1h1.3M81.4 553.7h1.3M93.1 548.4h1.3M80.1 517.3h1.3M82.7 542.7h1.3M78.7 540.5h1.3M85.0 522.8h1.3M90.2 541.7h1.3M84.5 551.8h1.3M84.1 541.4h1.3M87.5 536.4h1.3M85.5 546.3h1.3M81.8 555.9h1.3M84.3 537.3h1.3M79.1 532.9h1.3M84.9 547.5h1.3M85.1 556.9h1.3M83.6 525.6h1.3M82.9 519.3h1.3M81.7 517.5h1.3M84.3 543.6h1.3M81.4 535.7h1.3M109.0 543.0h1.3M79.2 528.8h1.3M96.3 538.5h1.3M115.3 537.5h1.3M95.8 539.2h1.3M81.0 544.5h1.3M84.0 535.8h1.3M79.9 541.3h1.3M86.3 535.8h1.3M118.9 540.3h1.3M86.4 549.1h1.3M90.7 543.1h1.3M81.2 541.2h1.3M81.2 540.6h1.3M93.1 534.9h1.3M80.1 532.8h1.3M83.8 534.9h1.3M86.6 539.6h1.3M84.4 552.7h1.3M82.5 541.3h1.3M79.3 552.6h1.3M79.2 558.4h1.3M79.1 548.5h1.3M92.2 547.4h1.3M85.9 542.5h1.3M78.4 537.3h1.3M90.1 537.2h1.3M81.8 555.9h1.3M79.8 541.0h1.3M97.0 543.5h1.3M85.3 536.3h1.3M82.2 550.3h1.3M78.7 554.1h1.3M104.0 538.8h1.3M82.9 536.3h1.3M78.7 535.1h1.3M99.7 543.5h1.3M96.6 538.5h1.3M91.8 539.0h1.3M104.1 545.6h1.3M83.8 547.8h1.3M82.3 539.2h1.3M88.4 542.5h1.3M95.0 545.5h1.3M83.6 543.3h1.3M79.8 533.2h1.3M81.9 551.9h1.3M81.0 567.6h1.3M84.9 549.2h1.3M82.2 549.5h1.3M82.4 546.1h1.3M92.3 542.6h1.3M81.8 541.7h1.3M81.0 548.4h1.3M80.5 557.4h1.3M81.6 544.8h1.3M79.7 540.1h1.3M80.8 536.9h1.3M92.7 545.5h1.3M92.8 545.6h1.3M91.4 544.4h1.3M88.6 546.8h1.3M82.1 548.1h1.3M102.4 540.9h1.3M83.9 542.9h1.3M79.4 554.3h1.3M88.1 540.5h1.3M85.4 558.8h1.3M82.0 541.8h1.3M80.2 556.8h1.3M94.8 545.6h1.3M84.6 548.6h1.3M80.8 542.9h1.3M86.9 534.3h1.3M85.0 538.4h1.3M79.0 552.7h1.3M79.9 547.5h1.3M87.0 536.3h1.3M79.2 531.0h1.3M83.9 538.3h1.3M81.1 549.9h1.3M80.4 545.4h1.3M79.4 539.5h1.3M82.4 533.8h1.3M97.5 542.9h1.3M94.1 531.4h1.3M79.4 541.0h1.3M87.4 543.2h1.3M87.0 537.0h1.3M86.9 547.6h1.3M87.9 541.6h1.3M81.8 561.1h1.3M86.2 543.1h1.3M97.8 543.4h1.3M88.9 541.1h1.3M78.6 538.0h1.3M79.7 544.7h1.3M82.1 549.5h1.3M78.6 534.9h1.3M79.9 556.7h1.3M92.9 533.9h1.3M80.7 534.1h1.3M82.9 538.0h1.3M78.3 530.7h1.3M92.7 542.2h1.3M78.7 531.4h1.3M93.7 540.3h1.3M80.5 539.4h1.3M79.2 543.6h1.3M98.0 538.8h1.3M89.4 549.9h1.3M82.3 549.3h1.3M89.3 544.0h1.3M79.1 532.8h1.3M101.7 534.3h1.3M87.7 549.0h1.3M89.0 545.9h1.3M83.1 530.0h1.3M78.7 537.3h1.3M84.0 532.7h1.3M99.4 546.1h1.3M78.7 556.6h1.3M88.0 543.3h1.3M84.6 535.3h1.3M106.2 539.1h1.3M80.6 531.1h1.3M78.8 533.6h1.3M80.1 550.6h1.3M81.3 552.2h1.3M87.2 550.1h1.3M80.5 542.2h1.3M83.0 552.8h1.3M100.3 539.6h1.3M95.6 544.6h1.3M79.5 531.8h1.3M91.8 539.6h1.3M84.7 541.8h1.3M87.1 537.1h1.3M85.6 528.3h1.3M92.5 543.7h1.3M79.3 538.7h1.3M80.1 551.8h1.3M78.8 539.9h1.3M88.0 546.0h1.3M83.1 547.8h1.3M83.4 546.8h1.3M81.9 543.4h1.3M78.4 545.8h1.3M117.1 541.5h1.3M88.4 538.7h1.3M109.7 540.3h1.3M83.7 539.8h1.3M82.9 545.9h1.3M78.4 556.2h1.3M98.5 538.0h1.3M100.2 537.4h1.3M86.8 541.5h1.3M79.5 550.3h1.3M78.5 545.2h1.3M81.1 521.5h1.3M79.9 527.2h1.3M99.2 535.8h1.3M79.8 546.2h1.3M89.1 529.6h1.3M81.5 549.2h1.3M81.4 559.3h1.3M82.0 532.4h1.3M92.5 539.9h1.3M80.5 555.3h1.3M86.2 544.0h1.3M92.0 538.2h1.3M101.5 534.1h1.3M83.8 536.3h1.3M81.1 541.5h1.3M85.3 552.4h1.3M79.7 550.0h1.3M83.0 545.5h1.3M78.6 540.5h1.3M82.9 547.0h1.3M78.3 560.5h1.3M93.0 547.2h1.3M82.7 528.3h1.3M81.0 534.7h1.3M82.7 531.7h1.3M81.6 527.4h1.3M92.3 544.5h1.3M97.0 543.3h1.3M83.0 548.2h1.3M84.9 538.3h1.3M79.0 548.0h1.3M81.4 514.7h1.3M97.4 544.3h1.3M94.3 553.8h1.3M86.0 538.3h1.3M91.6 549.4h1.3M85.8 545.9h1.3M81.1 517.9h1.3M83.5 531.8h1.3M86.6 539.4h1.3M95.6 545.5h1.3M78.5 548.6h1.3M83.0 554.6h1.3M79.0 535.3h1.3M85.3 534.9h1.3M82.6 529.3h1.3M82.3 539.1h1.3M79.3 552.1h1.3M84.7 557.6h1.3M79.3 547.4h1.3M79.1 534.5h1.3M84.4 541.4h1.3M84.8 551.2h1.3M80.4 536.6h1.3M84.1 539.6h1.3M85.4 548.7h1.3M78.9 547.5h1.3M82.9 549.3h1.3M88.3 535.0h1.3M89.6 556.0h1.3M88.5 555.0h1.3M79.2 547.3h1.3M79.8 531.4h1.3M104.1 536.4h1.3M79.5 533.7h1.3M90.3 545.7h1.3M82.0 544.1h1.3M78.4 534.3h1.3M81.2 537.4h1.3M88.1 528.7h1.3M86.1 548.8h1.3M94.8 531.6h1.3M94.7 537.4h1.3M79.8 541.2h1.3M89.8 535.8h1.3M87.4 543.2h1.3M82.0 537.0h1.3M89.0 551.4h1.3M78.7 535.1h1.3M85.7 549.6h1.3M91.3 545.7h1.3M79.3 557.5h1.3M80.7 534.1h1.3M80.0 521.0h1.3M85.3 546.6h1.3M79.3 547.2h1.3M91.2 541.9h1.3M79.9 532.6h1.3M87.6 539.5h1.3M82.1 554.0h1.3M84.5 555.2h1.3M87.7 547.6h1.3M78.4 512.8h1.3M81.7 548.5h1.3M94.8 546.1h1.3M91.2 545.1h1.3M91.9 542.3h1.3M87.4 535.1h1.3M79.7 549.7h1.3M93.2 533.2h1.3M85.9 551.4h1.3M78.9 537.4h1.3M96.3 544.2h1.3M85.4 546.2h1.3M81.9 543.2h1.3M83.3 533.5h1.3M81.8 536.8h1.3M78.3 531.5h1.3M78.5 536.1h1.3M83.2 544.3h1.3M79.6 541.2h1.3M87.2 540.7h1.3M83.8 548.5h1.3M80.7 529.4h1.3M103.5 539.8h1.3M117.1 544.3h1.3M90.1 543.2h1.3M94.8 542.5h1.3M86.4 530.8h1.3M81.9 538.0h1.3M94.8 549.9h1.3M100.6 540.2h1.3M89.8 536.7h1.3M89.1 532.3h1.3M81.8 540.7h1.3M84.7 539.0h1.3M81.6 543.5h1.3M81.4 553.3h1.3M82.0 540.7h1.3M80.5 542.5h1.3M79.5 552.4h1.3M78.4 551.1h1.3M83.0 534.0h1.3M85.0 539.9h1.3M78.8 548.6h1.3M81.2 535.4h1.3M84.7 554.2h1.3M100.5 537.0h1.3M85.3 556.9h1.3M79.0 548.4h1.3M113.3 544.4h1.3M81.8 543.1h1.3M94.5 536.4h1.3M78.9 515.4h1.3M80.9 543.7h1.3M80.7 548.0h1.3M80.8 542.4h1.3M88.0 542.9h1.3M80.1 552.7h1.3M85.7 549.0h1.3M80.1 529.2h1.3M88.9 550.2h1.3M79.0 537.7h1.3M91.6 545.2h1.3M79.5 533.9h1.3M80.0 518.9h1.3M86.5 537.9h1.3M98.8 542.3h1.3M89.4 547.0h1.3M86.7 532.2h1.3M81.6 550.2h1.3M78.8 538.3h1.3M86.2 542.7h1.3M81.6 527.6h1.3M80.7 542.0h1.3M83.3 562.4h1.3M84.9 543.1h1.3M113.4 544.6h1.3M88.6 544.7h1.3M81.5 546.5h1.3M79.5 545.3h1.3M90.0 551.1h1.3M82.7 550.9h1.3M84.5 532.3h1.3M86.9 536.5h1.3M85.7 535.1h1.3M80.7 557.1h1.3M88.2 542.5h1.3M81.3 523.4h1.3M90.1 548.2h1.3M80.9 539.8h1.3M84.2 545.8h1.3M78.4 539.1h1.3M83.5 532.7h1.3M81.9 527.1h1.3M114.8 542.0h1.3M79.1 561.6h1.3M78.5 544.4h1.3M83.9 543.8h1.3M84.8 549.8h1.3M81.9 563.1h1.3M79.6 549.9h1.3M98.7 547.4h1.3M79.7 561.3h1.3M80.5 545.0h1.3M110.6 537.8h1.3M81.7 541.6h1.3M91.2 536.6h1.3M97.0 542.4h1.3M79.2 541.0h1.3M86.6 538.8h1.3M82.4 543.7h1.3M84.9 539.3h1.3M82.5 561.8h1.3M86.2 532.5h1.3M80.3 541.4h1.3M82.9 548.9h1.3M80.4 546.9h1.3M86.5 553.7h1.3M81.1 548.9h1.3M85.0 541.3h1.3M79.7 556.8h1.3M80.8 525.0h1.3M89.4 543.8h1.3M81.5 534.0h1.3M83.6 545.6h1.3M87.5 538.8h1.3M85.6 531.4h1.3M95.5 543.3h1.3M80.2 549.4h1.3M90.4 537.7h1.3M94.2 545.6h1.3M120.4 545.3h1.3M81.1 546.6h1.3M107.6 541.7h1.3M78.4 547.6h1.3M89.0 539.5h1.3M79.1 550.4h1.3M79.1 557.5h1.3M81.6 555.7h1.3M95.4 537.9h1.3M109.5 543.4h1.3M90.9 542.4h1.3M87.7 549.6h1.3M80.4 544.6h1.3M82.8 543.0h1.3M115.8 541.8h1.3M81.3 545.3h1.3M83.6 538.3h1.3M79.5 534.8h1.3M87.6 543.4h1.3M79.6 540.5h1.3M79.3 527.5h1.3M81.8 518.8h1.3M81.7 542.0h1.3M80.2 564.2h1.3M88.8 538.7h1.3M80.9 545.2h1.3M78.9 550.1h1.3M78.7 528.8h1.3M84.8 541.0h1.3M81.9 556.8h1.3M86.8 542.3h1.3M84.6 529.1h1.3M110.6 540.3h1.3M94.9 540.5h1.3M81.4 531.2h1.3M82.6 550.8h1.3M82.2 539.8h1.3M82.5 563.0h1.3M78.3 577.0h1.3M85.8 546.9h1.3M85.9 538.8h1.3M82.1 541.9h1.3M79.3 549.4h1.3M93.1 543.9h1.3M78.7 515.0h1.3M87.8 537.0h1.3M84.7 552.4h1.3M81.3 541.9h1.3M89.3 541.5h1.3M93.7 534.7h1.3M120.3 541.3h1.3M80.4 529.0h1.3M82.1 529.6h1.3M88.3 535.0h1.3M85.9 547.4h1.3M87.3 537.1h1.3M84.6 552.3h1.3M80.3 534.9h1.3M97.5 539.4h1.3M83.4 539.5h1.3M83.5 530.6h1.3M80.3 557.5h1.3M84.3 556.9h1.3M84.2 525.8h1.3M80.5 538.0h1.3M79.8 547.1h1.3M86.5 533.9h1.3M92.4 550.1h1.3M78.7 526.1h1.3M82.1 550.5h1.3M79.4 522.5h1.3M79.6 541.4h1.3M81.8 546.2h1.3M91.3 535.3h1.3M79.0 539.7h1.3M82.3 556.6h1.3M83.1 541.2h1.3M83.5 546.1h1.3M79.6 522.7h1.3M87.4 535.7h1.3M80.5 551.4h1.3M82.0 536.3h1.3M78.4 551.9h1.3M80.1 538.0h1.3M79.9 539.8h1.3M88.4 540.6h1.3M80.5 551.1h1.3M92.7 547.9h1.3M94.0 545.4h1.3M80.1 523.8h1.3M86.0 547.9h1.3M82.0 551.9h1.3M82.0 544.4h1.3M88.3 539.5h1.3M86.7 548.9h1.3M91.6 538.2h1.3M85.2 547.9h1.3M99.0 545.3h1.3M88.3 558.5h1.3M82.0 537.0h1.3M78.9 532.1h1.3M89.6 535.9h1.3M83.8 549.0h1.3M96.8 541.5h1.3M85.5 539.7h1.3M83.3 524.4h1.3M82.6 545.8h1.3M83.4 549.1h1.3M83.7 535.4h1.3M84.0 547.4h1.3M89.1 532.9h1.3M82.4 555.7h1.3M84.8 544.7h1.3M90.0 541.9h1.3M80.3 536.0h1.3M78.9 543.8h1.3M79.0 536.4h1.3M89.5 539.5h1.3M87.4 540.6h1.3M88.2 539.2h1.3M87.7 541.8h1.3M82.6 512.2h1.3M91.9 531.6h1.3M94.7 544.1h1.3M84.1 547.7h1.3M78.3 551.6h1.3M80.7 540.9h1.3M81.3 540.8h1.3M84.8 558.1h1.3M84.0 539.0h1.3M81.2 543.1h1.3M94.4 544.6h1.3M80.7 521.2h1.3M80.1 554.8h1.3M82.0 545.5h1.3M83.3 529.3h1.3M81.9 542.4h1.3M91.2 545.5h1.3M84.8 559.4h1.3M78.7 535.5h1.3M82.5 552.5h1.3M85.0 538.5h1.3M91.0 545.7h1.3M81.1 536.8h1.3M85.5 527.5h1.3M83.2 550.7h1.3M95.1 539.5h1.3M78.8 525.4h1.3M78.7 548.7h1.3M94.2 547.5h1.3M79.9 548.2h1.3M98.7 534.9h1.3M83.8 535.5h1.3M87.3 538.8h1.3M80.2 533.1h1.3M92.9 548.7h1.3M80.2 561.5h1.3M79.2 558.9h1.3M102.4 544.9h1.3M82.6 537.5h1.3M97.2 538.7h1.3M87.6 542.9h1.3M87.8 543.5h1.3M78.6 546.8h1.3M80.4 533.6h1.3M85.3 537.1h1.3M79.6 555.1h1.3M97.7 537.9h1.3M79.6 561.5h1.3M91.2 547.2h1.3M78.6 539.9h1.3M82.1 537.0h1.3M84.6 536.8h1.3M79.1 522.5h1.3M82.8 544.9h1.3M87.4 551.6h1.3M79.3 556.2h1.3M98.8 550.9h1.3M84.3 541.0h1.3M81.0 531.3h1.3M83.8 553.6h1.3M99.6 545.2h1.3M94.3 544.6h1.3M85.6 538.2h1.3M79.5 540.2h1.3M80.8 557.8h1.3M80.4 528.1h1.3M99.0 546.7h1.3M105.7 542.3h1.3M81.7 555.5h1.3M78.7 535.3h1.3M81.5 534.1h1.3M89.1 543.0h1.3M79.9 543.8h1.3M78.9 531.5h1.3M84.9 550.2h1.3M90.7 545.7h1.3M85.5 539.5h1.3M84.1 542.1h1.3M79.1 537.6h1.3M85.2 538.0h1.3M81.8 531.0h1.3M79.7 553.6h1.3M79.8 551.2h1.3M93.1 539.8h1.3M94.8 538.8h1.3M79.1 542.3h1.3M95.2 545.6h1.3M84.4 548.2h1.3M79.3 534.5h1.3M84.4 542.5h1.3M84.0 537.6h1.3M82.4 546.3h1.3M80.1 547.3h1.3M94.7 544.0h1.3M83.9 542.7h1.3M101.3 541.1h1.3M83.7 544.5h1.3M87.6 532.6h1.3M80.4 541.5h1.3M80.8 535.2h1.3M78.6 529.7h1.3M81.1 549.5h1.3M96.0 546.6h1.3M80.4 548.8h1.3M85.5 544.2h1.3M78.8 522.6h1.3M80.6 516.1h1.3M78.6 520.8h1.3M86.0 536.4h1.3M81.6 524.0h1.3M91.6 529.1h1.3M78.4 548.3h1.3M100.8 538.3h1.3M79.0 548.0h1.3M80.5 539.8h1.3M79.6 524.0h1.3M81.7 545.8h1.3M80.3 547.2h1.3M81.5 576.5h1.3M90.8 538.5h1.3M83.5 525.7h1.3M97.4 541.6h1.3M89.4 538.7h1.3M86.1 537.6h1.3M93.3 542.0h1.3M88.4 538.6h1.3M81.7 555.3h1.3M87.2 557.5h1.3M89.2 549.5h1.3M100.4 546.7h1.3M97.1 541.2h1.3M91.3 530.6h1.3M85.4 527.7h1.3M90.6 545.9h1.3M94.7 537.8h1.3M84.4 562.4h1.3M101.6 548.4h1.3M90.7 551.9h1.3M80.6 545.7h1.3M80.1 534.5h1.3M83.2 542.4h1.3M97.4 546.4h1.3M87.5 539.8h1.3M90.6 535.7h1.3M90.9 535.8h1.3M92.3 529.7h1.3M82.5 553.5h1.3M92.8 545.5h1.3M81.6 525.4h1.3M90.9 535.2h1.3M78.3 539.2h1.3M79.2 541.6h1.3M91.7 534.8h1.3M83.2 547.7h1.3M81.6 543.7h1.3M93.2 546.2h1.3M86.0 540.6h1.3M80.8 546.0h1.3M88.0 532.0h1.3M91.5 544.5h1.3M79.3 540.1h1.3M92.1 540.0h1.3M79.9 537.6h1.3M81.9 566.5h1.3M80.3 553.3h1.3M96.2 537.6h1.3M82.3 517.1h1.3M84.0 541.5h1.3M114.1 543.2h1.3M79.7 561.8h1.3M84.3 546.9h1.3M101.5 541.5h1.3M83.1 544.1h1.3M81.8 534.3h1.3M79.2 518.9h1.3M84.1 535.8h1.3M82.1 560.5h1.3M87.1 534.8h1.3M78.9 532.1h1.3M103.6 539.0h1.3M81.9 534.0h1.3M82.1 529.6h1.3M84.2 533.1h1.3M83.8 524.1h1.3M81.9 544.9h1.3M92.7 541.2h1.3M87.5 534.2h1.3M89.4 539.0h1.3M96.0 540.5h1.3M78.6 520.9h1.3M81.4 558.2h1.3M96.1 549.9h1.3M79.5 528.4h1.3M78.7 533.0h1.3M82.3 541.3h1.3M80.9 526.2h1.3M89.8 539.5h1.3M82.7 553.1h1.3M108.9 538.6h1.3M87.3 531.0h1.3M82.1 556.7h1.3M87.7 539.0h1.3M80.9 548.9h1.3M92.3 547.6h1.3M90.9 539.7h1.3M84.1 545.4h1.3M95.1 545.5h1.3M79.8 557.6h1.3M81.3 549.8h1.3M82.2 544.2h1.3M105.6 543.4h1.3M81.3 539.9h1.3M101.3 542.5h1.3M82.9 549.3h1.3M79.2 540.7h1.3M82.2 551.3h1.3M104.8 541.3h1.3M97.5 544.3h1.3M83.1 548.4h1.3M90.4 534.2h1.3M81.3 551.6h1.3M83.4 554.1h1.3M84.8 534.8h1.3M80.9 525.7h1.3M81.9 552.2h1.3M81.0 535.0h1.3M86.3 540.7h1.3M78.6 562.8h1.3M92.3 536.9h1.3M100.8 540.1h1.3M80.8 541.7h1.3M84.7 544.7h1.3M89.5 538.6h1.3M91.5 536.2h1.3M79.2 535.5h1.3M105.7 545.6h1.3M86.3 536.8h1.3M82.3 525.7h1.3M100.9 541.3h1.3M82.3 532.5h1.3M91.4 539.4h1.3M94.7 544.0h1.3M84.4 528.8h1.3M96.8 540.6h1.3M79.4 539.2h1.3M82.6 544.5h1.3M83.9 549.4h1.3M85.2 531.8h1.3M82.4 534.6h1.3M93.2 539.6h1.3M90.7 543.3h1.3M87.2 538.0h1.3M89.5 528.0h1.3M96.6 541.5h1.3M89.2 545.5h1.3M95.2 535.4h1.3M79.4 536.3h1.3M85.9 529.8h1.3M80.9 554.8h1.3M92.2 544.6h1.3M80.9 543.3h1.3M79.1 549.9h1.3M87.3 554.3h1.3M81.9 538.6h1.3M87.9 553.4h1.3M81.4 550.2h1.3M78.3 536.7h1.3M80.9 537.2h1.3M78.8 526.7h1.3M91.5 543.9h1.3M78.6 544.3h1.3M80.3 536.7h1.3M86.2 537.8h1.3M85.0 547.8h1.3M80.3 543.6h1.3M92.9 538.0h1.3M91.5 540.1h1.3M90.3 541.2h1.3M78.5 528.4h1.3M78.8 541.1h1.3M86.3 539.9h1.3M82.4 528.7h1.3M84.0 536.2h1.3M94.5 539.7h1.3M121.9 543.3h1.3M81.5 516.7h1.3M112.6 544.0h1.3M79.4 547.3h1.3M83.1 535.5h1.3M83.2 528.2h1.3M81.6 545.3h1.3M81.0 551.6h1.3M80.0 540.3h1.3M82.9 530.2h1.3M80.1 539.4h1.3M80.8 534.6h1.3M84.9 534.7h1.3M89.3 525.1h1.3M102.0 546.4h1.3M88.5 536.3h1.3M78.8 542.0h1.3M94.2 542.3h1.3M88.5 537.9h1.3M81.8 535.7h1.3M79.7 517.4h1.3M81.2 517.6h1.3M78.7 546.8h1.3M96.6 545.2h1.3M91.4 538.9h1.3M79.2 543.0h1.3M79.6 543.8h1.3M115.6 538.9h1.3M97.7 542.8h1.3M92.1 535.5h1.3M79.4 553.3h1.3M84.0 548.7h1.3M80.2 541.5h1.3M97.5 542.4h1.3M88.2 559.6h1.3M82.9 532.6h1.3M88.8 532.5h1.3M93.0 547.9h1.3M79.4 549.7h1.3M85.3 542.0h1.3M82.1 560.1h1.3M90.6 542.1h1.3M83.3 560.1h1.3M84.4 546.3h1.3M78.9 533.9h1.3M95.6 547.3h1.3M83.6 537.6h1.3M80.5 535.8h1.3M97.2 540.0h1.3M85.5 544.0h1.3M79.4 545.5h1.3M85.3 550.0h1.3M86.4 539.3h1.3M78.9 528.8h1.3M88.6 548.6h1.3M82.4 545.1h1.3M87.2 540.3h1.3M86.7 536.1h1.3M87.7 537.7h1.3M97.5 541.9h1.3M85.6 546.9h1.3M112.9 542.2h1.3M80.4 526.3h1.3M92.2 547.5h1.3M86.3 541.4h1.3M79.1 538.1h1.3M108.2 541.8h1.3M78.7 538.2h1.3M80.5 548.5h1.3M87.2 539.3h1.3M99.6 536.0h1.3M80.7 522.9h1.3M79.6 561.0h1.3M79.2 543.8h1.3M107.2 541.0h1.3M91.5 538.0h1.3M79.7 536.0h1.3M90.7 541.3h1.3M95.9 541.8h1.3M93.6 541.3h1.3M84.8 545.8h1.3M86.0 533.2h1.3M85.5 542.5h1.3M78.7 536.8h1.3M84.6 539.3h1.3M78.4 553.8h1.3M89.2 553.5h1.3M91.7 543.1h1.3M83.2 551.1h1.3M80.2 552.8h1.3M82.8 561.5h1.3M84.6 556.3h1.3M81.8 555.1h1.3M93.5 546.1h1.3M93.4 545.5h1.3M81.2 547.5h1.3M89.8 546.6h1.3M109.0 544.5h1.3M90.0 543.9h1.3M79.3 541.7h1.3M87.7 534.6h1.3M83.2 535.0h1.3M82.5 530.8h1.3M98.2 537.7h1.3M88.9 545.7h1.3M92.8 530.3h1.3M88.4 551.5h1.3M93.5 543.0h1.3M82.8 545.8h1.3M101.2 539.9h1.3M83.0 539.6h1.3M81.2 533.8h1.3M81.7 539.5h1.3M83.0 545.2h1.3M110.0 538.0h1.3M89.8 529.6h1.3M92.8 550.4h1.3M80.9 540.9h1.3M80.6 539.6h1.3M80.4 542.7h1.3M95.7 545.1h1.3M90.1 538.9h1.3M90.2 549.8h1.3M84.4 531.7h1.3M79.2 546.2h1.3M86.2 535.6h1.3M82.0 516.2h1.3M79.7 534.5h1.3M84.4 535.2h1.3M100.5 537.8h1.3M82.5 554.2h1.3M105.7 539.1h1.3M79.1 543.8h1.3M97.3 544.9h1.3M78.4 540.2h1.3M114.9 545.2h1.3M79.9 525.3h1.3M87.7 545.6h1.3M89.3 541.6h1.3M80.7 533.3h1.3M78.5 538.4h1.3M80.7 534.6h1.3M105.0 538.9h1.3M86.8 533.7h1.3M85.6 539.2h1.3M78.8 531.7h1.3M78.9 553.1h1.3M79.5 542.5h1.3M79.3 510.0h1.3M87.6 542.2h1.3M80.9 542.3h1.3M79.1 534.0h1.3M81.2 528.0h1.3M83.0 549.3h1.3M88.7 554.2h1.3M81.7 554.8h1.3M92.6 551.4h1.3M80.4 545.5h1.3M93.7 544.0h1.3M80.9 526.4h1.3M78.4 551.6h1.3M79.7 564.9h1.3M86.9 532.2h1.3M79.9 532.7h1.3M79.5 568.9h1.3M82.2 557.6h1.3M86.7 536.7h1.3M78.8 537.8h1.3M78.4 545.5h1.3M104.7 540.2h1.3M81.9 540.6h1.3M90.7 538.3h1.3M80.6 532.6h1.3M79.2 552.3h1.3M80.6 544.1h1.3M82.1 533.7h1.3M89.9 542.2h1.3M80.3 548.7h1.3M82.2 532.1h1.3M83.4 551.3h1.3M94.6 548.3h1.3M92.8 543.9h1.3M80.4 553.2h1.3M79.3 543.9h1.3M83.2 540.5h1.3M79.3 536.4h1.3M83.5 544.5h1.3M82.9 547.5h1.3M79.3 551.8h1.3M83.4 545.1h1.3M100.4 540.2h1.3M80.3 540.1h1.3M89.2 529.5h1.3M104.6 539.1h1.3M93.9 550.7h1.3M84.3 554.8h1.3M80.5 552.0h1.3M80.2 561.2h1.3M79.0 538.9h1.3M83.2 562.4h1.3M88.8 548.0h1.3M81.4 546.7h1.3M80.1 536.0h1.3M79.3 531.9h1.3M111.5 539.9h1.3M78.4 542.4h1.3M86.8 539.9h1.3M83.4 541.3h1.3M89.1 536.9h1.3M83.8 540.0h1.3M85.7 538.9h1.3M91.3 538.9h1.3M101.6 541.1h1.3M82.0 521.8h1.3M96.9 542.8h1.3M85.6 546.7h1.3M96.8 544.1h1.3M78.6 545.8h1.3M82.9 545.4h1.3M89.4 544.7h1.3M85.3 549.1h1.3M87.4 538.8h1.3M78.4 550.2h1.3M83.5 539.4h1.3M84.0 551.2h1.3M116.8 540.7h1.3M86.1 544.6h1.3M80.1 562.4h1.3M83.2 545.0h1.3M81.4 567.7h1.3M82.5 533.5h1.3M78.5 557.1h1.3M82.0 551.3h1.3M78.3 561.8h1.3M85.8 541.1h1.3M84.9 550.6h1.3M88.3 544.8h1.3M79.3 548.2h1.3M104.1 542.5h1.3M84.2 545.3h1.3M85.3 543.6h1.3M80.4 539.0h1.3M79.8 530.6h1.3M82.5 536.1h1.3M95.8 536.8h1.3M103.5 536.0h1.3M80.8 551.8h1.3M78.7 537.0h1.3M98.0 542.1h1.3M81.0 542.7h1.3M81.0 562.5h1.3M82.7 537.5h1.3M84.3 550.6h1.3M86.8 530.5h1.3M84.1 546.4h1.3M86.9 545.2h1.3M85.4 547.0h1.3M104.5 535.1h1.3M80.0 563.0h1.3M85.1 549.6h1.3M79.9 538.4h1.3M80.5 533.6h1.3M81.9 526.6h1.3M78.9 538.8h1.3M89.1 536.3h1.3M87.2 535.7h1.3M91.2 548.1h1.3M87.4 542.0h1.3M88.2 538.9h1.3M103.8 539.9h1.3M90.6 542.2h1.3M103.6 544.9h1.3M80.2 517.3h1.3M96.7 547.5h1.3M80.4 540.5h1.3M87.0 534.6h1.3M89.9 544.6h1.3M80.2 547.2h1.3M80.8 547.2h1.3M82.5 542.7h1.3M82.7 552.7h1.3M101.1 543.7h1.3M85.2 533.6h1.3M82.9 553.1h1.3M79.8 539.3h1.3M87.3 541.7h1.3M79.7 521.2h1.3M89.9 553.1h1.3M92.7 536.8h1.3M88.1 533.9h1.3M105.4 543.2h1.3M81.2 558.5h1.3M80.7 547.9h1.3M93.5 535.2h1.3M94.9 538.8h1.3M78.4 537.1h1.3M84.4 540.5h1.3M78.9 531.9h1.3M78.3 550.6h1.3M78.3 558.8h1.3M80.4 539.8h1.3M113.2 545.3h1.3M78.5 563.6h1.3M106.3 546.0h1.3M79.6 534.2h1.3M81.4 552.4h1.3M82.6 534.1h1.3M78.8 542.8h1.3M79.0 544.3h1.3M86.1 544.4h1.3M87.8 540.5h1.3M88.7 553.2h1.3M81.6 534.9h1.3M99.5 541.6h1.3M84.9 546.1h1.3M87.7 542.8h1.3M82.2 540.0h1.3M91.1 537.4h1.3M91.3 547.8h1.3M80.0 549.9h1.3M88.1 545.5h1.3M80.4 523.0h1.3M79.1 533.4h1.3M79.5 528.5h1.3M80.0 536.8h1.3M86.3 539.7h1.3M80.5 540.9h1.3M84.4 550.5h1.3M88.6 552.0h1.3M80.3 545.0h1.3M81.0 531.1h1.3M85.9 532.3h1.3M96.9 542.6h1.3M87.0 547.6h1.3M80.7 545.8h1.3M90.1 545.2h1.3M92.3 538.6h1.3M91.0 527.1h1.3M81.3 534.8h1.3M78.8 559.6h1.3M85.8 543.6h1.3M84.1 543.0h1.3M79.6 563.2h1.3M83.3 533.6h1.3M80.1 551.3h1.3M84.2 548.6h1.3M81.9 538.9h1.3M90.2 534.2h1.3M79.2 552.2h1.3M83.6 545.3h1.3M80.6 537.7h1.3M81.4 535.1h1.3M83.5 537.8h1.3M82.0 524.9h1.3M83.0 561.1h1.3M86.0 533.5h1.3M79.2 525.1h1.3M80.9 545.7h1.3M78.6 568.6h1.3M79.4 538.4h1.3M83.3 535.8h1.3M78.9 534.4h1.3M89.4 542.4h1.3M79.0 528.6h1.3M82.3 562.4h1.3M78.7 559.2h1.3M81.0 542.1h1.3M79.2 535.1h1.3M78.9 549.3h1.3M92.6 547.2h1.3M79.8 550.6h1.3M82.7 555.9h1.3M81.6 547.0h1.3M106.8 543.0h1.3M79.3 540.3h1.3M96.1 548.9h1.3M97.1 530.9h1.3M85.7 544.9h1.3M81.0 525.0h1.3M88.9 543.8h1.3M79.4 551.8h1.3M79.2 569.8h1.3M91.7 539.3h1.3M80.7 548.5h1.3M83.4 546.7h1.3M93.7 541.3h1.3M81.4 549.5h1.3M81.6 556.4h1.3M80.0 523.1h1.3M94.2 546.0h1.3M85.1 555.4h1.3M85.8 542.4h1.3M96.7 545.2h1.3M93.4 540.1h1.3M92.0 541.0h1.3M82.1 550.9h1.3M81.8 538.0h1.3M80.4 545.2h1.3M97.5 536.5h1.3M95.8 545.0h1.3M89.6 542.0h1.3M91.3 554.4h1.3M115.7 541.0h1.3M91.7 532.2h1.3M80.6 535.6h1.3M92.9 537.2h1.3M79.4 531.1h1.3M92.0 540.3h1.3M81.7 552.5h1.3M95.2 533.9h1.3M79.5 559.5h1.3M87.3 537.0h1.3M86.8 555.9h1.3M84.6 546.6h1.3M83.2 532.9h1.3M90.5 550.4h1.3M94.6 542.5h1.3M80.6 551.2h1.3M79.1 540.2h1.3M91.0 542.7h1.3M80.4 545.3h1.3M89.1 542.5h1.3M80.1 530.4h1.3M91.3 542.9h1.3M102.9 539.8h1.3M96.3 547.3h1.3M83.4 553.5h1.3M81.3 531.5h1.3M94.9 539.5h1.3M85.4 539.8h1.3M92.4 535.3h1.3M82.6 540.2h1.3M95.3 539.9h1.3M81.9 535.6h1.3M81.9 556.5h1.3M79.4 536.8h1.3M98.0 546.9h1.3M82.8 544.3h1.3M88.4 538.8h1.3M84.2 543.1h1.3M92.0 542.8h1.3M80.3 531.4h1.3M89.2 542.9h1.3M95.5 538.4h1.3M117.4 539.5h1.3M88.2 544.2h1.3M99.5 542.5h1.3M81.5 549.8h1.3M88.8 544.7h1.3M83.9 551.8h1.3M87.1 552.8h1.3M84.9 557.9h1.3M91.0 546.7h1.3M84.7 558.4h1.3M89.7 545.5h1.3M98.9 538.8h1.3M80.2 554.6h1.3M96.6 542.3h1.3M96.8 546.5h1.3M99.9 540.2h1.3M84.9 548.8h1.3M91.3 547.9h1.3M82.7 535.6h1.3M80.9 536.5h1.3M82.7 530.8h1.3M79.1 540.4h1.3M78.3 530.7h1.3M89.3 550.1h1.3M80.5 541.0h1.3M79.8 555.3h1.3M85.7 545.9h1.3M85.3 538.4h1.3M88.5 541.4h1.3M88.2 530.7h1.3M80.8 554.4h1.3M78.7 517.6h1.3M101.4 540.1h1.3M78.9 543.3h1.3M91.1 540.1h1.3M83.2 536.9h1.3M86.4 548.4h1.3M89.9 541.4h1.3M80.5 543.6h1.3M82.5 546.9h1.3M86.0 540.0h1.3M80.3 547.8h1.3M79.0 545.2h1.3M83.9 548.7h1.3M79.9 529.3h1.3M107.2 541.9h1.3M83.6 551.1h1.3M80.1 537.2h1.3M85.5 544.5h1.3M78.9 547.4h1.3M88.0 548.4h1.3M81.8 539.4h1.3M82.7 532.8h1.3M82.3 553.5h1.3M79.6 551.5h1.3M78.4 529.1h1.3M93.5 540.9h1.3M86.3 534.4h1.3M98.5 538.0h1.3M81.1 548.0h1.3M84.8 534.4h1.3M102.2 536.7h1.3M79.6 526.3h1.3M90.8 550.1h1.3M85.4 538.3h1.3M101.5 538.6h1.3M84.7 537.1h1.3M79.3 545.8h1.3M96.5 541.8h1.3M81.4 539.2h1.3M83.5 532.9h1.3M96.3 541.6h1.3M81.7 518.6h1.3M86.5 538.0h1.3M83.5 537.0h1.3M85.8 548.3h1.3M90.6 541.1h1.3M82.2 550.9h1.3M81.9 552.2h1.3M80.9 534.6h1.3M81.5 544.1h1.3M87.7 537.7h1.3M78.5 543.0h1.3M91.4 543.4h1.3M79.6 542.1h1.3M80.8 545.2h1.3M88.9 538.8h1.3M101.8 534.0h1.3M84.7 544.7h1.3M99.0 540.7h1.3M82.9 547.0h1.3M93.9 549.3h1.3M82.2 558.2h1.3M89.5 548.6h1.3M85.6 543.7h1.3M78.8 541.0h1.3M79.4 559.9h1.3M86.3 543.1h1.3M79.3 545.5h1.3M85.8 545.7h1.3M87.2 548.2h1.3M109.2 541.0h1.3M82.9 535.9h1.3M80.4 546.9h1.3M107.7 545.9h1.3M79.8 540.9h1.3M79.9 547.6h1.3M89.0 546.5h1.3M78.8 523.2h1.3M78.6 537.9h1.3M82.9 544.6h1.3M83.1 529.7h1.3M95.4 538.1h1.3M82.3 536.2h1.3M101.3 546.5h1.3M84.9 527.2h1.3M79.5 546.7h1.3M87.7 547.7h1.3M78.3 548.7h1.3M84.1 526.9h1.3M78.3 545.4h1.3M87.2 534.3h1.3M85.0 540.4h1.3M104.0 538.2h1.3M103.2 545.6h1.3M81.3 535.3h1.3M82.1 538.9h1.3M90.9 554.1h1.3M90.7 549.4h1.3M87.6 522.0h1.3M81.4 541.9h1.3M85.9 535.4h1.3M79.7 549.9h1.3M80.9 531.8h1.3M98.8 549.4h1.3M89.6 548.7h1.3M79.6 542.6h1.3M97.3 536.0h1.3M85.4 524.6h1.3M79.0 553.9h1.3M90.3 545.4h1.3M79.3 547.3h1.3M94.7 534.3h1.3M80.7 547.8h1.3M88.8 539.7h1.3M83.7 538.2h1.3M88.5 543.7h1.3M80.9 556.7h1.3M82.0 562.4h1.3M127.6 539.3h1.3M82.8 525.9h1.3M89.7 536.5h1.3M83.2 547.6h1.3M102.3 538.9h1.3M83.4 552.7h1.3M79.6 554.7h1.3M87.4 561.7h1.3M84.5 549.9h1.3M89.1 547.8h1.3M82.1 551.9h1.3M80.6 542.6h1.3M83.5 539.3h1.3M79.0 556.7h1.3M78.6 520.3h1.3M83.3 527.1h1.3M88.7 543.5h1.3M81.7 547.5h1.3M79.5 538.4h1.3M91.8 544.1h1.3M83.8 545.4h1.3M81.6 553.7h1.3M83.4 559.5h1.3M90.6 541.5h1.3M80.3 566.1h1.3M97.3 532.9h1.3M90.1 530.9h1.3M86.3 526.8h1.3M83.0 537.7h1.3M79.1 560.2h1.3M87.5 534.8h1.3M89.2 542.3h1.3M92.1 547.6h1.3M104.5 543.2h1.3M87.5 539.5h1.3M84.8 537.3h1.3M79.5 545.5h1.3M83.4 534.3h1.3M82.0 541.8h1.3M84.8 542.3h1.3M79.7 526.1h1.3M95.7 533.7h1.3M110.3 546.4h1.3M79.5 514.9h1.3M82.2 528.8h1.3M84.6 540.7h1.3M80.1 544.0h1.3M79.4 537.9h1.3M84.9 552.9h1.3M102.0 540.2h1.3M102.2 538.5h1.3M86.3 526.9h1.3M87.2 537.6h1.3M81.9 534.8h1.3M106.2 540.0h1.3M80.5 545.4h1.3M78.4 540.7h1.3M84.7 544.2h1.3M79.3 555.1h1.3M92.8 537.6h1.3M99.2 536.3h1.3M117.0 540.0h1.3M78.3 523.4h1.3M78.7 512.3h1.3M81.3 553.8h1.3M85.0 550.1h1.3M96.9 541.7h1.3M85.4 542.1h1.3M80.1 539.9h1.3M79.9 544.1h1.3M99.8 540.0h1.3M80.8 551.0h1.3M81.4 533.0h1.3M105.4 537.6h1.3M78.9 552.1h1.3M92.5 544.1h1.3M89.3 541.1h1.3M80.8 547.6h1.3M87.0 547.1h1.3M102.9 552.1h1.3M86.1 540.6h1.3M86.8 547.8h1.3M84.7 553.0h1.3M81.9 547.8h1.3M79.5 536.2h1.3M79.7 550.6h1.3M91.2 547.7h1.3M79.7 526.3h1.3M84.9 541.3h1.3M82.6 539.9h1.3M78.8 540.9h1.3M82.7 542.8h1.3M80.5 559.9h1.3M92.2 541.6h1.3M83.5 545.5h1.3M82.2 532.9h1.3M80.3 557.8h1.3M87.2 545.5h1.3M83.9 533.1h1.3M98.9 539.5h1.3M78.9 536.8h1.3M79.0 538.9h1.3M86.7 544.3h1.3M82.7 537.4h1.3M100.4 545.6h1.3M80.5 546.8h1.3M81.4 548.8h1.3M97.6 540.3h1.3M79.8 529.7h1.3M78.7 558.8h1.3M86.7 551.6h1.3M79.7 538.7h1.3M84.0 539.3h1.3M81.6 555.0h1.3M88.4 548.2h1.3M84.0 547.9h1.3M82.8 553.8h1.3M87.0 554.8h1.3M78.3 556.4h1.3M80.3 535.6h1.3M79.0 546.3h1.3M87.6 547.9h1.3M80.8 541.1h1.3M87.2 542.8h1.3M87.6 548.5h1.3M82.8 543.5h1.3M84.6 544.2h1.3M115.6 542.4h1.3M83.9 539.5h1.3M83.7 546.1h1.3M83.8 554.0h1.3M91.5 538.1h1.3M91.8 554.1h1.3M83.4 548.1h1.3M79.4 552.1h1.3M87.6 538.5h1.3M108.2 538.0h1.3M78.7 536.7h1.3M79.3 520.6h1.3M81.4 554.4h1.3M88.6 544.4h1.3M81.7 538.2h1.3M88.3 535.4h1.3M80.9 552.9h1.3M78.3 539.6h1.3M79.1 537.9h1.3M86.4 526.5h1.3M79.7 554.3h1.3M79.3 527.9h1.3M82.1 541.1h1.3M78.6 540.6h1.3M81.8 565.4h1.3M81.4 516.8h1.3M97.5 543.4h1.3M85.4 525.7h1.3M106.2 537.0h1.3M85.0 525.7h1.3M80.1 528.6h1.3M81.6 540.1h1.3M82.0 528.3h1.3M80.3 540.5h1.3M80.9 528.8h1.3M82.6 541.3h1.3M87.0 545.1h1.3M80.9 553.6h1.3M90.1 538.4h1.3M84.1 526.9h1.3M80.6 553.2h1.3M82.1 536.1h1.3M81.0 527.9h1.3M92.0 546.5h1.3M83.6 540.8h1.3M83.1 535.1h1.3M81.8 538.2h1.3M89.5 547.1h1.3M88.9 542.8h1.3M90.6 545.7h1.3M86.8 536.8h1.3M87.8 532.6h1.3M80.8 550.9h1.3M78.6 545.9h1.3M104.5 536.9h1.3M105.5 540.8h1.3M91.4 542.2h1.3M79.2 552.3h1.3M91.0 541.0h1.3M82.0 530.0h1.3M80.8 524.5h1.3M96.4 542.1h1.3M93.4 545.2h1.3M82.7 533.9h1.3M81.3 548.1h1.3M79.7 540.3h1.3M80.9 560.0h1.3M81.5 532.0h1.3M93.6 545.7h1.3M80.0 533.9h1.3M90.2 539.3h1.3M96.9 543.0h1.3M82.9 531.4h1.3M80.7 550.3h1.3M78.5 532.0h1.3M78.4 549.4h1.3M82.0 542.1h1.3M87.4 535.1h1.3M86.1 542.1h1.3M87.3 542.9h1.3M85.9 540.1h1.3M93.8 544.7h1.3M97.5 542.1h1.3M85.1 552.3h1.3M81.4 550.5h1.3M86.6 543.0h1.3M85.7 537.5h1.3M80.2 541.1h1.3M81.3 532.9h1.3M96.9 543.6h1.3M79.3 550.3h1.3M93.8 541.2h1.3M80.5 532.4h1.3M78.6 535.2h1.3M91.0 543.2h1.3M90.3 537.0h1.3M83.5 544.5h1.3M82.1 541.2h1.3M80.4 527.9h1.3M93.1 535.1h1.3M84.7 530.0h1.3M79.2 555.5h1.3M80.7 541.7h1.3M118.0 539.1h1.3M79.1 533.4h1.3M78.3 543.6h1.3M79.1 551.2h1.3M82.8 546.4h1.3M84.0 538.1h1.3M84.1 554.7h1.3M110.4 543.0h1.3M83.7 550.8h1.3M82.0 545.9h1.3M95.1 539.0h1.3M81.8 534.4h1.3M84.9 551.4h1.3M81.0 564.4h1.3M82.0 554.1h1.3M79.3 533.4h1.3M81.5 530.9h1.3M81.5 546.8h1.3M82.6 534.3h1.3M103.5 539.4h1.3M79.7 550.5h1.3M87.0 537.4h1.3M82.5 532.4h1.3M80.4 544.5h1.3M92.6 535.8h1.3M82.1 541.3h1.3M80.3 538.8h1.3M104.2 539.5h1.3M83.8 529.3h1.3M83.4 543.3h1.3M86.6 545.9h1.3M87.8 540.9h1.3M79.5 558.4h1.3M85.9 545.9h1.3M81.3 552.5h1.3M84.7 548.0h1.3M86.0 548.2h1.3M79.5 535.1h1.3M84.6 553.4h1.3M86.0 543.4h1.3M80.3 527.3h1.3M83.0 547.4h1.3M89.5 534.3h1.3M81.9 516.3h1.3M92.1 546.1h1.3M86.8 549.5h1.3M78.6 552.2h1.3M100.0 547.5h1.3M80.8 538.5h1.3M93.3 545.8h1.3M84.2 556.1h1.3M78.4 552.0h1.3M92.5 537.8h1.3M87.6 527.7h1.3M80.1 536.9h1.3M96.6 541.0h1.3M81.6 543.5h1.3M78.8 556.9h1.3M79.3 548.8h1.3M79.7 539.0h1.3M98.5 544.6h1.3M97.2 550.4h1.3M82.9 520.7h1.3M91.0 538.9h1.3M91.6 554.2h1.3M88.8 541.9h1.3M99.0 543.2h1.3M84.7 528.8h1.3M79.5 526.4h1.3M87.9 529.6h1.3M83.2 545.2h1.3M80.1 550.4h1.3M89.2 540.1h1.3M92.5 541.6h1.3M82.3 556.6h1.3M80.3 547.1h1.3M82.0 565.8h1.3M84.0 539.5h1.3M89.5 541.5h1.3M89.2 545.8h1.3M80.2 534.1h1.3M81.7 539.8h1.3M82.5 527.4h1.3M84.2 552.5h1.3M83.4 558.4h1.3M84.0 542.8h1.3M88.6 537.2h1.3M81.8 543.2h1.3M80.9 537.1h1.3M86.4 534.1h1.3M85.2 542.4h1.3M80.3 540.9h1.3M91.1 541.6h1.3M80.6 548.2h1.3M85.7 532.7h1.3M86.2 550.9h1.3M81.1 554.5h1.3M94.2 543.2h1.3M91.8 533.3h1.3M82.9 530.7h1.3M80.0 516.6h1.3M79.1 529.3h1.3M79.6 548.8h1.3M80.3 548.9h1.3M79.6 532.9h1.3M79.9 534.9h1.3M83.5 538.7h1.3M84.5 532.1h1.3M92.8 543.8h1.3M78.4 549.1h1.3M78.6 538.0h1.3M90.0 534.6h1.3M80.3 535.6h1.3M90.5 538.1h1.3M80.4 558.3h1.3M85.1 536.8h1.3M83.5 534.5h1.3M78.8 529.8h1.3M79.6 527.5h1.3M84.7 541.1h1.3M92.9 539.1h1.3M94.6 545.0h1.3M79.0 544.4h1.3M80.6 552.3h1.3M80.6 548.0h1.3M81.2 531.6h1.3M90.7 542.9h1.3M88.6 545.1h1.3M78.4 547.4h1.3M81.5 553.9h1.3M90.4 547.4h1.3M122.1 541.6h1.3M89.6 543.2h1.3M82.5 550.2h1.3M81.3 537.1h1.3M78.9 555.4h1.3M82.9 537.9h1.3M82.9 543.6h1.3M83.5 524.5h1.3M79.9 521.4h1.3M82.5 552.8h1.3M87.0 533.9h1.3M85.1 538.2h1.3M80.5 521.0h1.3M79.0 532.9h1.3M82.0 561.7h1.3M78.4 517.7h1.3M86.2 531.5h1.3M83.4 528.5h1.3M79.4 535.7h1.3M88.7 551.5h1.3M80.1 531.2h1.3M86.9 533.1h1.3M78.5 531.1h1.3M85.6 544.0h1.3M81.6 552.1h1.3M81.0 552.9h1.3M90.8 539.0h1.3M91.5 548.2h1.3M79.3 541.0h1.3M100.3 540.1h1.3M78.5 539.5h1.3M79.9 530.7h1.3M82.3 531.4h1.3M79.3 541.4h1.3M84.2 534.5h1.3M82.2 566.1h1.3M82.9 544.9h1.3M81.4 568.6h1.3M86.6 545.2h1.3M89.6 536.0h1.3M80.9 543.9h1.3M83.1 543.2h1.3M94.9 543.0h1.3M89.8 547.9h1.3M80.9 549.0h1.3M82.7 550.9h1.3M100.6 543.7h1.3M84.9 537.8h1.3M82.6 551.7h1.3M98.1 542.4h1.3M81.2 527.3h1.3M78.8 531.5h1.3M98.9 544.1h1.3M88.4 545.1h1.3M78.5 536.9h1.3M83.4 544.8h1.3M78.4 546.7h1.3M79.0 548.5h1.3M79.1 546.5h1.3M79.5 554.8h1.3M92.1 537.9h1.3M80.5 545.7h1.3M92.9 549.8h1.3M79.1 547.3h1.3M101.4 537.5h1.3M94.2 545.1h1.3M79.1 558.5h1.3M85.4 546.4h1.3M88.5 540.1h1.3M80.0 554.7h1.3M82.9 539.0h1.3M81.1 555.2h1.3M80.9 538.7h1.3M91.2 539.6h1.3M83.8 542.1h1.3M84.0 545.8h1.3M83.9 539.9h1.3M82.6 532.3h1.3M96.1 539.6h1.3M96.1 554.0h1.3M115.3 543.2h1.3M91.8 540.0h1.3M85.9 549.2h1.3M86.6 566.4h1.3M91.6 539.3h1.3M94.2 540.8h1.3M79.8 540.6h1.3M80.0 557.2h1.3M83.3 540.6h1.3M86.9 538.3h1.3M79.2 524.3h1.3M87.6 543.1h1.3M78.7 552.9h1.3M82.3 564.7h1.3M82.7 531.1h1.3M89.1 548.6h1.3M86.7 533.6h1.3M84.1 548.0h1.3M80.0 569.5h1.3M90.3 536.6h1.3M117.5 537.4h1.3M80.5 546.0h1.3M89.2 538.2h1.3M92.6 529.2h1.3M95.2 540.6h1.3M83.5 557.4h1.3M81.3 528.8h1.3M93.1 548.4h1.3M93.2 540.0h1.3M79.7 535.3h1.3M85.0 543.3h1.3M79.2 552.1h1.3M79.6 539.8h1.3M93.4 537.9h1.3M81.5 546.6h1.3M80.8 534.0h1.3M82.3 551.9h1.3M82.1 542.3h1.3M78.4 549.4h1.3M78.3 532.1h1.3M104.1 541.8h1.3M78.5 551.0h1.3M79.1 537.5h1.3M83.9 530.2h1.3M80.6 534.9h1.3M82.0 567.2h1.3M114.7 542.4h1.3M93.4 539.8h1.3M78.5 535.9h1.3M87.8 529.1h1.3M84.7 543.4h1.3M84.5 536.9h1.3M80.8 535.8h1.3M88.2 544.1h1.3M85.1 543.6h1.3M85.6 530.5h1.3M98.7 543.5h1.3M81.5 529.1h1.3M99.3 540.3h1.3M81.5 545.0h1.3M88.1 550.5h1.3M87.0 537.1h1.3M100.5 542.2h1.3M83.3 531.6h1.3M89.7 540.3h1.3M86.0 544.9h1.3M91.5 541.6h1.3M96.1 548.3h1.3M79.4 550.6h1.3M81.6 550.5h1.3M102.2 545.2h1.3M90.9 541.4h1.3M86.3 551.0h1.3M79.8 568.7h1.3M78.9 539.3h1.3M83.5 542.0h1.3M82.5 551.1h1.3M93.5 540.0h1.3M90.4 537.7h1.3M81.2 537.5h1.3M83.7 531.3h1.3M83.9 549.3h1.3M81.4 514.2h1.3M80.1 517.9h1.3M81.6 546.0h1.3M78.8 541.9h1.3M82.7 549.1h1.3M105.4 537.5h1.3M92.8 535.5h1.3M78.4 532.9h1.3M82.2 540.5h1.3M78.8 558.5h1.3M84.6 534.5h1.3M82.4 549.5h1.3M79.2 539.0h1.3M85.6 527.3h1.3M79.3 521.9h1.3M112.8 538.6h1.3M89.7 553.9h1.3M87.0 545.8h1.3M131.0 549.5h1.3M136.0 545.0h1.3M142.0 548.5h1.3M144.7 543.0h1.3M154.8 548.5h1.3M154.2 549.5h1.3M141.0 562.7h1.3M163.5 562.7h1.3M168.5 552.2h1.3M172.7 544.7h1.3M176.0 552.2h1.3M181.0 541.8h1.3M184.7 544.7h1.3M182.2 551.0h1.3M189.2 549.7h1.3M199.7 539.3h1.3M206.6 543.0h1.3M210.9 546.0h1.3M214.6 551.5h1.3M217.7 540.5h1.3M234.6 539.3h1.3M330.7 543.0h1.3M86.9 581.0h1.3M96.0 581.0h1.3M81.0 591.7h1.3M118.0 540.0h1.3M121.0 552.0h1.3M123.0 557.0h1.3M119.0 565.0h1.3M113.0 547.0h1.3M110.0 560.0h1.3M127.0 546.0h1.3" stroke="#0a0a0a" stroke-width="1.3" fill="none"/><path d="M77.9 572.1h1.3M79.3 523.9h1.3M77.8 524.6h1.3M78.0 532.4h1.3M79.0 528.3h1.3M78.5 529.6h1.3M79.3 502.6h1.3M78.5 523.9h1.3M79.5 561.7h1.3M78.5 544.8h1.3M78.9 567.0h1.3M78.4 535.8h1.3M78.7 512.0h1.3M79.4 534.8h1.3M77.3 524.4h1.3M77.4 576.1h1.3M79.0 567.9h1.3M79.1 546.3h1.3M77.8 531.0h1.3M78.9 550.2h1.3M78.5 527.7h1.3M78.6 530.6h1.3M79.4 549.5h1.3M77.8 495.0h1.3M78.4 527.8h1.3M79.1 552.5h1.3M77.7 510.4h1.3M79.4 529.2h1.3M77.3 538.1h1.3M79.4 563.0h1.3M77.7 551.3h1.3M78.5 524.9h1.3M79.3 556.6h1.3M77.6 547.7h1.3M77.6 531.2h1.3M78.6 568.9h1.3M77.6 548.2h1.3M77.6 519.6h1.3M79.1 546.7h1.3M79.4 529.0h1.3M79.1 541.1h1.3M79.2 541.8h1.3M79.1 567.5h1.3M79.0 559.6h1.3M78.7 568.2h1.3M78.0 493.2h1.3M79.1 555.5h1.3M78.8 533.1h1.3M78.8 555.3h1.3M77.9 521.0h1.3M77.9 531.1h1.3M79.2 538.3h1.3M79.3 542.4h1.3M78.8 570.3h1.3M77.6 546.8h1.3M78.0 509.1h1.3M77.5 534.5h1.3M78.3 573.0h1.3M79.1 545.9h1.3M78.1 548.6h1.3M79.2 544.9h1.3M79.0 547.3h1.3M77.5 537.1h1.3M77.8 534.1h1.3M78.8 554.7h1.3M78.3 527.1h1.3M77.4 533.4h1.3M79.0 552.9h1.3M78.9 546.0h1.3M78.8 518.1h1.3M77.6 529.1h1.3M77.9 551.5h1.3M78.9 544.8h1.3M77.9 557.4h1.3M79.2 527.0h1.3M78.1 524.4h1.3M79.3 560.3h1.3M78.5 533.3h1.3M79.2 540.4h1.3M77.5 555.7h1.3M78.4 542.3h1.3M78.3 530.0h1.3M79.5 522.5h1.3M79.1 543.2h1.3M79.3 534.1h1.3M78.7 547.9h1.3M78.9 565.7h1.3M78.0 528.1h1.3M78.4 536.1h1.3M78.3 561.1h1.3M79.3 577.0h1.3M78.4 516.8h1.3M79.4 568.5h1.3M78.7 573.8h1.3M79.2 491.2h1.3M77.4 571.2h1.3M79.2 548.8h1.3M79.1 524.3h1.3M77.8 541.3h1.3M78.2 519.6h1.3M77.7 550.5h1.3M77.5 511.7h1.3M79.5 544.3h1.3M78.2 559.1h1.3M78.6 576.3h1.3M78.7 511.9h1.3M78.1 546.6h1.3M78.4 545.5h1.3M78.6 489.9h1.3M78.2 558.6h1.3M78.1 530.8h1.3M79.4 546.7h1.3M78.6 521.7h1.3M77.9 535.7h1.3M78.0 520.4h1.3M79.5 541.8h1.3M78.5 542.7h1.3M77.7 547.1h1.3M78.1 549.1h1.3M77.8 502.0h1.3M79.0 519.0h1.3M78.5 549.5h1.3M77.4 566.8h1.3M78.8 552.4h1.3M78.1 571.7h1.3M78.0 523.9h1.3M77.4 514.8h1.3M77.8 531.9h1.3M77.4 536.0h1.3M78.9 541.4h1.3M78.7 537.2h1.3M77.8 561.3h1.3M77.7 555.6h1.3M78.3 572.7h1.3M78.9 521.2h1.3M78.6 569.2h1.3M78.7 521.9h1.3M77.7 556.2h1.3M79.4 530.0h1.3M78.7 520.3h1.3M77.5 534.0h1.3M79.2 552.9h1.3M77.3 505.0h1.3M79.0 554.0h1.3M78.9 536.6h1.3M78.8 554.1h1.3M78.0 538.0h1.3M79.0 523.6h1.3M78.6 563.1h1.3M78.1 490.3h1.3M79.5 579.8h1.3M77.4 543.4h1.3M78.5 516.1h1.3M78.0 562.0h1.3M77.8 546.1h1.3M79.0 517.5h1.3M78.4 572.8h1.3M77.8 548.4h1.3M78.3 555.7h1.3M78.8 541.1h1.3M79.0 527.5h1.3M78.9 525.5h1.3M78.8 547.4h1.3M78.6 563.6h1.3M78.9 546.3h1.3M78.1 556.5h1.3M77.5 523.2h1.3M78.6 566.0h1.3M77.7 539.9h1.3M79.0 531.6h1.3M77.6 552.9h1.3M78.4 549.2h1.3M77.9 574.5h1.3M77.9 511.1h1.3M78.9 532.8h1.3M77.9 518.0h1.3M79.4 544.0h1.3M78.0 540.2h1.3M78.0 547.4h1.3M79.3 560.1h1.3M77.4 549.4h1.3M77.3 527.0h1.3M79.3 539.2h1.3M77.6 554.0h1.3M78.1 549.7h1.3M77.9 549.2h1.3M78.6 525.7h1.3M78.5 546.4h1.3M79.0 538.2h1.3M79.3 523.8h1.3M79.0 521.0h1.3M78.0 532.8h1.3M77.6 560.6h1.3M77.5 523.9h1.3M79.3 544.8h1.3M78.8 537.8h1.3M77.8 505.9h1.3M78.1 533.0h1.3M78.4 534.7h1.3M78.7 530.3h1.3M78.2 553.2h1.3M78.9 539.7h1.3M77.4 539.6h1.3M77.6 550.4h1.3M78.5 556.5h1.3M77.5 571.1h1.3M78.7 547.3h1.3M77.8 533.4h1.3M79.0 497.7h1.3M78.0 549.2h1.3M78.2 557.8h1.3M79.4 536.4h1.3M79.3 548.3h1.3M79.4 563.7h1.3M77.6 560.1h1.3M78.9 514.3h1.3M78.6 579.8h1.3M77.5 569.2h1.3M79.0 538.2h1.3M78.8 524.6h1.3M80.0 545.0h1.3M81.3 542.3h1.3M80.0 548.3h1.3M81.0 535.4h1.3M79.8 543.0h1.3M80.2 544.4h1.3M79.2 553.6h1.3M80.1 534.5h1.3M81.4 566.3h1.3M79.2 537.6h1.3M80.8 543.3h1.3M79.0 532.8h1.3M81.3 533.8h1.3M81.0 549.6h1.3M79.7 565.1h1.3M79.7 548.7h1.3M79.1 564.1h1.3M80.8 567.1h1.3M79.5 556.6h1.3M80.7 560.3h1.3M80.5 551.3h1.3M81.4 551.8h1.3M79.0 542.3h1.3M81.5 546.5h1.3M79.3 561.5h1.3M80.8 540.0h1.3M79.1 541.5h1.3M80.2 535.1h1.3M79.4 528.8h1.3M79.3 543.8h1.3M81.2 538.8h1.3M79.6 548.4h1.3M80.1 538.0h1.3M81.2 535.7h1.3M80.3 518.1h1.3M79.5 542.9h1.3M79.0 541.3h1.3M79.3 551.9h1.3M80.0 564.8h1.3M80.2 549.4h1.3M82.4 596.0h1.3M82.0 590.0h1.3" stroke="#ee1c24" stroke-width="1.2" fill="none"/></svg>
<svg style="left:416px;top:423px" width="265" height="264" viewBox="416 423 265 264"><path d="M431.7 613.1h1.3M418.1 476.9h1.3M422.2 503.3h1.3M425.5 552.9h1.3M417.8 427.9h1.3M426.1 599.7h1.3M421.9 492.9h1.3M425.8 509.8h1.3M420.0 491.4h1.3M419.7 471.5h1.3M419.7 536.7h1.3M419.0 510.1h1.3M419.4 536.6h1.3M422.0 661.0h1.3M421.0 532.2h1.3M417.6 573.6h1.3M419.7 594.0h1.3M417.8 556.9h1.3M419.4 602.1h1.3M421.8 483.0h1.3M418.6 544.3h1.3M422.0 450.4h1.3M430.7 503.6h1.3M418.1 530.2h1.3M417.7 476.4h1.3M419.3 489.4h1.3M423.7 594.5h1.3M419.2 504.7h1.3M420.4 437.6h1.3M419.8 575.6h1.3M420.3 556.7h1.3M425.1 584.9h1.3M424.2 434.4h1.3M417.9 501.2h1.3M420.5 497.8h1.3M421.9 614.1h1.3M422.2 560.4h1.3M423.4 627.4h1.3M417.9 466.4h1.3M427.0 534.2h1.3M418.3 582.8h1.3M419.9 555.2h1.3M420.2 541.1h1.3M423.3 468.0h1.3M418.1 439.0h1.3M429.1 626.6h1.3M431.4 594.1h1.3M419.2 482.9h1.3M418.6 579.9h1.3M419.7 486.3h1.3M419.0 480.5h1.3M418.8 569.5h1.3M418.8 512.3h1.3M419.2 563.3h1.3M421.3 464.8h1.3M419.9 446.2h1.3M420.4 612.0h1.3M419.6 458.6h1.3M439.2 573.0h1.3M417.7 553.4h1.3M436.0 647.9h1.3M427.5 550.4h1.3M419.0 600.9h1.3M419.8 427.7h1.3M419.1 565.1h1.3M417.6 426.5h1.3M418.4 551.7h1.3M418.1 437.2h1.3M420.7 496.6h1.3M429.9 585.3h1.3M419.2 586.4h1.3M420.5 526.8h1.3M418.9 444.4h1.3M417.5 456.9h1.3M423.3 592.5h1.3M419.8 595.3h1.3M417.8 484.8h1.3M418.8 464.1h1.3M418.6 490.8h1.3M420.7 588.3h1.3M421.0 544.8h1.3M424.3 541.1h1.3M430.3 555.7h1.3M426.9 595.4h1.3M419.6 465.4h1.3M418.0 570.4h1.3M425.5 642.7h1.3M421.8 481.5h1.3M418.4 447.0h1.3M420.5 470.5h1.3M418.3 553.0h1.3M423.9 529.9h1.3M421.0 557.4h1.3M418.5 446.6h1.3M425.8 541.1h1.3M419.0 511.2h1.3M421.2 446.2h1.3M419.0 604.0h1.3M438.3 665.0h1.3M419.3 514.3h1.3M434.8 603.0h1.3M424.6 593.4h1.3M420.3 461.6h1.3M419.0 664.0h1.3M422.2 590.6h1.3M422.2 589.9h1.3M424.0 609.1h1.3M420.9 431.3h1.3M424.0 560.7h1.3M418.6 463.3h1.3M425.3 614.1h1.3M428.6 516.4h1.3M420.3 443.8h1.3M417.9 453.1h1.3M422.1 479.9h1.3M419.8 424.7h1.3M418.0 596.5h1.3M418.9 557.3h1.3M434.2 605.3h1.3M419.4 510.6h1.3M418.8 501.9h1.3M425.7 592.7h1.3M418.4 605.9h1.3M421.1 595.9h1.3M439.2 602.3h1.3M417.6 577.0h1.3M424.7 609.6h1.3M420.5 510.1h1.3M420.5 475.8h1.3M419.9 527.8h1.3M425.8 612.8h1.3M422.4 451.1h1.3M419.1 459.8h1.3M424.4 567.3h1.3M419.7 659.3h1.3M417.9 502.9h1.3M428.7 554.1h1.3M418.5 560.5h1.3M431.6 621.6h1.3M428.2 476.2h1.3M428.3 659.9h1.3M418.1 432.0h1.3M418.2 434.1h1.3M421.4 549.6h1.3M430.9 593.4h1.3M417.5 458.8h1.3M418.2 434.5h1.3M418.4 506.0h1.3M417.8 492.0h1.3M432.1 662.4h1.3M460.0 605.4h1.3M423.6 530.2h1.3M422.4 595.0h1.3M431.5 518.5h1.3M422.7 488.6h1.3M423.7 510.5h1.3M417.6 451.3h1.3M418.0 507.4h1.3M421.7 633.4h1.3M417.5 536.1h1.3M417.9 480.1h1.3M422.3 461.5h1.3M422.1 654.3h1.3M417.6 548.9h1.3M422.4 574.0h1.3M422.4 651.6h1.3M420.7 576.8h1.3M423.8 642.5h1.3M422.6 541.4h1.3M418.0 463.7h1.3M419.3 497.0h1.3M435.6 659.8h1.3M423.6 595.4h1.3M419.9 527.5h1.3M419.2 500.5h1.3M420.5 529.3h1.3M422.5 589.6h1.3M423.1 576.8h1.3M423.8 571.9h1.3M444.7 637.2h1.3M418.0 449.8h1.3M417.6 426.6h1.3M422.6 526.8h1.3M420.0 437.3h1.3M417.8 606.7h1.3M426.9 615.4h1.3M418.7 451.9h1.3M429.4 639.9h1.3M417.5 466.9h1.3M427.8 557.5h1.3M423.8 613.5h1.3M427.6 599.2h1.3M419.4 517.4h1.3M423.0 425.4h1.3M427.1 610.0h1.3M420.1 456.9h1.3M419.0 559.1h1.3M419.7 626.1h1.3M444.6 607.4h1.3M417.5 603.8h1.3M426.1 598.7h1.3M421.3 465.0h1.3M423.3 618.1h1.3M418.4 518.9h1.3M420.1 597.0h1.3M418.7 426.9h1.3M419.6 462.6h1.3M436.0 607.0h1.3M433.3 661.6h1.3M438.2 553.4h1.3M418.0 535.0h1.3M430.7 628.9h1.3M420.0 554.4h1.3M423.4 482.2h1.3M420.6 453.4h1.3M421.0 540.2h1.3M420.0 601.6h1.3M431.1 611.1h1.3M424.9 580.1h1.3M418.3 498.6h1.3M418.8 542.9h1.3M419.8 450.2h1.3M423.6 654.5h1.3M421.3 561.1h1.3M419.4 441.3h1.3M422.4 505.3h1.3M453.0 620.6h1.3M419.2 598.7h1.3M417.6 594.9h1.3M422.1 619.5h1.3M421.3 620.3h1.3M419.3 539.0h1.3M435.7 617.0h1.3M425.0 620.2h1.3M427.4 580.2h1.3M427.9 658.4h1.3M422.1 557.8h1.3M420.4 496.8h1.3M417.6 607.2h1.3M422.9 450.2h1.3M418.0 469.0h1.3M428.9 581.2h1.3M418.6 456.5h1.3M429.6 647.6h1.3M418.0 545.5h1.3M418.4 584.4h1.3M420.5 494.5h1.3M420.7 452.4h1.3M418.1 515.3h1.3M418.0 591.8h1.3M419.9 445.9h1.3M422.5 577.5h1.3M421.6 615.5h1.3M427.8 604.9h1.3M419.9 504.5h1.3M418.6 434.1h1.3M423.7 514.2h1.3M423.0 607.4h1.3M426.9 494.9h1.3M422.6 608.1h1.3M425.9 575.1h1.3M419.3 480.8h1.3M421.0 481.4h1.3M427.4 589.3h1.3M419.4 488.8h1.3M421.4 632.8h1.3M418.8 515.7h1.3M417.8 525.3h1.3M419.2 533.2h1.3M419.2 516.2h1.3M429.6 617.1h1.3M419.3 551.4h1.3M423.3 523.5h1.3M419.0 594.6h1.3M419.6 542.0h1.3M430.6 633.4h1.3M423.0 503.4h1.3M444.2 613.7h1.3M429.4 607.6h1.3M430.2 564.8h1.3M429.1 566.4h1.3M421.0 567.3h1.3M424.7 659.0h1.3M423.8 539.0h1.3M417.8 464.3h1.3M435.4 639.9h1.3M420.9 630.4h1.3M424.1 610.9h1.3M417.9 450.5h1.3M417.9 528.3h1.3M420.4 438.9h1.3M423.5 500.5h1.3M423.1 621.2h1.3M418.3 573.4h1.3M419.5 505.8h1.3M425.5 593.0h1.3M426.3 559.8h1.3M444.6 595.3h1.3M420.1 544.1h1.3M423.5 474.0h1.3M429.7 520.9h1.3M421.2 632.5h1.3M418.0 465.8h1.3M417.5 426.5h1.3M427.0 602.0h1.3M418.1 438.2h1.3M418.5 650.1h1.3M432.9 544.1h1.3M417.6 479.4h1.3M417.8 514.4h1.3M419.1 532.8h1.3M417.9 484.4h1.3M423.5 610.4h1.3M430.1 591.7h1.3M421.0 464.5h1.3M419.5 424.4h1.3M418.3 578.2h1.3M423.3 497.6h1.3M446.9 618.8h1.3M417.8 449.8h1.3M419.4 443.9h1.3M428.4 619.6h1.3M417.9 518.7h1.3M417.7 491.9h1.3M426.0 571.3h1.3M432.5 550.4h1.3M422.1 573.7h1.3M420.0 548.1h1.3M419.7 426.0h1.3M418.7 505.9h1.3M417.6 480.1h1.3M421.9 558.8h1.3M421.3 528.6h1.3M421.3 570.3h1.3M425.6 576.7h1.3M418.8 550.6h1.3M423.8 442.8h1.3M424.5 606.7h1.3M420.1 451.8h1.3M422.0 533.7h1.3M424.4 548.8h1.3M417.8 505.3h1.3M417.7 570.1h1.3M425.8 507.8h1.3M418.9 439.6h1.3M420.7 565.3h1.3M419.6 629.6h1.3M419.6 497.8h1.3M420.7 437.9h1.3M430.1 614.7h1.3M417.6 522.0h1.3M419.7 456.0h1.3M432.8 596.2h1.3M425.0 588.3h1.3M424.4 599.8h1.3M421.8 603.5h1.3M418.2 553.4h1.3M417.9 612.5h1.3M419.6 432.6h1.3M427.4 659.8h1.3M421.4 591.3h1.3M420.5 491.2h1.3M418.1 607.5h1.3M442.7 625.3h1.3M418.0 481.9h1.3M439.3 625.5h1.3M421.0 490.1h1.3M420.3 566.4h1.3M418.5 575.7h1.3M417.7 491.0h1.3M418.2 429.1h1.3M417.9 560.5h1.3M420.9 449.2h1.3M420.1 482.0h1.3M419.6 489.6h1.3M417.9 483.6h1.3M419.5 452.8h1.3M419.3 480.7h1.3M417.6 511.8h1.3M463.3 613.0h1.3M429.5 589.5h1.3M420.0 462.0h1.3M418.3 474.5h1.3M422.3 513.7h1.3M420.3 570.5h1.3M432.1 605.6h1.3M420.4 524.1h1.3M426.3 662.6h1.3M418.6 522.6h1.3M418.7 488.5h1.3M440.5 596.9h1.3M417.9 519.3h1.3M422.4 606.0h1.3M422.4 607.9h1.3M442.3 663.9h1.3M419.8 433.2h1.3M421.3 536.9h1.3M422.7 449.6h1.3M433.0 619.0h1.3M418.1 606.1h1.3M429.1 639.4h1.3M417.7 495.5h1.3M417.9 475.0h1.3M421.4 429.7h1.3M420.3 433.9h1.3M421.4 458.1h1.3M418.1 488.8h1.3M426.8 556.6h1.3M443.1 563.4h1.3M420.8 608.6h1.3M427.0 639.8h1.3M419.2 496.4h1.3M418.2 432.0h1.3M418.1 526.4h1.3M423.2 520.8h1.3M438.0 609.1h1.3M429.5 664.5h1.3M423.2 537.6h1.3M419.6 538.2h1.3M433.1 565.4h1.3M422.6 594.6h1.3M417.6 478.5h1.3M429.2 548.9h1.3M419.0 535.4h1.3M423.2 565.3h1.3M418.4 481.1h1.3M421.7 510.9h1.3M417.9 536.1h1.3M418.8 591.8h1.3M418.7 490.2h1.3M421.3 649.6h1.3M419.9 486.2h1.3M420.2 460.9h1.3M420.8 500.9h1.3M420.6 602.7h1.3M427.1 638.6h1.3M418.6 450.3h1.3M418.5 519.6h1.3M425.0 595.4h1.3M424.8 432.1h1.3M429.1 593.6h1.3M441.6 595.2h1.3M427.6 619.5h1.3M422.5 592.0h1.3M430.9 596.7h1.3M418.3 447.9h1.3M426.6 566.1h1.3M419.8 493.0h1.3M422.1 605.0h1.3M418.0 459.4h1.3M425.5 560.5h1.3M417.6 495.7h1.3M419.3 481.0h1.3M428.1 527.5h1.3M419.3 510.9h1.3M436.7 612.2h1.3M418.6 564.7h1.3M420.7 601.7h1.3M418.2 511.8h1.3M418.0 475.7h1.3M418.7 617.4h1.3M431.9 499.9h1.3M417.5 517.8h1.3M434.0 629.5h1.3M418.4 526.9h1.3M423.6 605.9h1.3M418.0 482.3h1.3M421.3 498.9h1.3M430.5 644.8h1.3M427.4 603.0h1.3M430.1 569.2h1.3M420.1 593.1h1.3M422.6 486.8h1.3M419.4 531.1h1.3M419.7 491.6h1.3M420.4 665.6h1.3M417.7 454.6h1.3M423.4 650.3h1.3M421.3 539.8h1.3M419.1 433.6h1.3M419.5 529.6h1.3M425.3 598.8h1.3M425.2 608.0h1.3M422.8 602.5h1.3M418.9 599.8h1.3M419.1 461.5h1.3M419.9 583.9h1.3M419.1 477.4h1.3M418.6 449.7h1.3M421.2 576.6h1.3M422.4 549.4h1.3M444.5 618.4h1.3M418.0 431.6h1.3M418.5 580.2h1.3M417.7 518.7h1.3M418.2 519.9h1.3M418.8 442.3h1.3M417.9 502.9h1.3M417.8 493.0h1.3M424.2 559.7h1.3M419.6 441.4h1.3M424.7 584.2h1.3M423.1 608.4h1.3M419.4 448.7h1.3M418.3 469.9h1.3M420.3 546.8h1.3M418.0 489.2h1.3M419.8 589.0h1.3M418.5 426.4h1.3M451.8 665.1h1.3M417.9 470.4h1.3M420.7 619.4h1.3M419.1 527.8h1.3M429.8 523.5h1.3M432.6 587.0h1.3M424.5 623.5h1.3M418.7 577.3h1.3M424.5 556.8h1.3M417.7 457.6h1.3M421.1 520.6h1.3M418.9 483.5h1.3M418.0 505.5h1.3M417.5 472.4h1.3M421.7 513.2h1.3M419.9 526.7h1.3M422.5 606.4h1.3M418.4 504.5h1.3M429.9 575.1h1.3M420.5 447.1h1.3M417.5 511.5h1.3M421.5 618.3h1.3M418.5 488.5h1.3M423.0 619.0h1.3M434.1 644.1h1.3M438.0 662.5h1.3M419.2 485.3h1.3M453.4 604.7h1.3M432.1 622.9h1.3M420.1 522.4h1.3M427.3 569.3h1.3M420.7 483.2h1.3M421.0 507.7h1.3M431.3 533.2h1.3M417.8 528.5h1.3M417.6 458.2h1.3M422.4 463.3h1.3M418.5 437.0h1.3M419.2 433.2h1.3M417.5 599.0h1.3M429.1 599.9h1.3M420.0 431.9h1.3M418.5 480.6h1.3M430.0 605.8h1.3M421.2 506.2h1.3M420.0 595.6h1.3M418.0 509.7h1.3M417.6 527.0h1.3M418.1 532.0h1.3M436.3 657.9h1.3M433.9 513.8h1.3M433.6 544.4h1.3M418.3 432.3h1.3M422.6 558.5h1.3M424.9 613.7h1.3M424.3 520.9h1.3M422.3 502.8h1.3M417.7 488.0h1.3M422.4 567.7h1.3M420.5 530.8h1.3M418.3 445.1h1.3M418.2 584.4h1.3M417.8 439.4h1.3M422.0 442.4h1.3M419.7 589.8h1.3M421.2 571.5h1.3M420.9 570.7h1.3M418.3 590.3h1.3M418.4 602.8h1.3M422.6 463.0h1.3M422.0 462.1h1.3M426.0 561.6h1.3M441.5 611.6h1.3M418.4 608.6h1.3M424.4 592.0h1.3M421.1 575.1h1.3M419.8 448.9h1.3M417.7 498.1h1.3M422.6 606.6h1.3M422.6 523.6h1.3M421.2 566.0h1.3M428.4 619.8h1.3M421.6 579.5h1.3M419.5 506.5h1.3M423.3 485.0h1.3M420.3 466.1h1.3M419.5 569.6h1.3M418.8 523.9h1.3M425.1 610.2h1.3M433.2 655.5h1.3M421.2 447.7h1.3M427.9 592.3h1.3M420.4 551.7h1.3M423.1 444.4h1.3M420.3 586.1h1.3M419.9 581.2h1.3M418.0 526.8h1.3M418.7 539.7h1.3M417.6 556.0h1.3M422.8 472.0h1.3M423.8 568.7h1.3M419.8 430.1h1.3M422.5 610.6h1.3M427.0 656.7h1.3M434.0 609.1h1.3M417.7 573.2h1.3M419.0 604.7h1.3M421.0 439.3h1.3M417.9 429.2h1.3M424.6 545.5h1.3M419.4 465.2h1.3M417.7 554.4h1.3M419.4 478.1h1.3M419.4 581.5h1.3M420.3 452.9h1.3M417.6 477.6h1.3M425.2 570.0h1.3M418.1 485.9h1.3M421.0 494.5h1.3M422.8 455.4h1.3M421.2 518.4h1.3M427.6 616.8h1.3M425.9 614.3h1.3M418.6 543.0h1.3M423.0 473.4h1.3M417.8 454.0h1.3M421.4 473.9h1.3M437.2 587.6h1.3M418.7 491.9h1.3M419.2 508.2h1.3M431.5 615.8h1.3M453.4 594.3h1.3M418.2 502.9h1.3M421.0 481.6h1.3M421.1 570.5h1.3M424.5 494.4h1.3M417.5 467.9h1.3M417.8 515.4h1.3M423.2 489.0h1.3M423.1 520.2h1.3M423.8 444.7h1.3M418.4 579.6h1.3M422.5 538.1h1.3M444.6 624.0h1.3M421.9 620.7h1.3M417.8 461.2h1.3M420.1 517.0h1.3M425.0 599.0h1.3M422.0 602.6h1.3M417.6 423.6h1.3M423.1 606.0h1.3M418.3 606.7h1.3M434.6 550.1h1.3M418.4 501.6h1.3M419.1 516.9h1.3M421.2 603.0h1.3M428.2 636.6h1.3M418.7 475.5h1.3M423.1 581.4h1.3M418.6 582.8h1.3M417.6 475.2h1.3M454.3 660.9h1.3M424.1 455.0h1.3M417.6 451.9h1.3M421.8 492.9h1.3M422.6 604.3h1.3M418.0 485.2h1.3M418.1 429.7h1.3M420.0 431.2h1.3M420.1 538.2h1.3M419.8 606.0h1.3M418.5 443.3h1.3M441.1 623.7h1.3M418.6 532.3h1.3M426.1 559.3h1.3M418.7 495.2h1.3M431.1 513.8h1.3M451.5 639.9h1.3M418.2 509.6h1.3M422.8 525.0h1.3M430.0 618.9h1.3M417.7 530.2h1.3M418.6 427.3h1.3M417.7 534.9h1.3M418.9 575.7h1.3M417.5 438.2h1.3M419.6 505.9h1.3M424.0 618.6h1.3M418.4 424.7h1.3M421.3 460.9h1.3M424.2 522.2h1.3M417.6 576.4h1.3M429.6 531.3h1.3M424.1 636.1h1.3M418.1 518.4h1.3M422.6 664.7h1.3M425.4 657.1h1.3M417.5 437.5h1.3M426.7 559.6h1.3M423.6 487.8h1.3M417.9 604.5h1.3M418.2 577.7h1.3M419.7 475.8h1.3M417.8 564.4h1.3M427.8 608.6h1.3M421.5 651.8h1.3M419.8 503.4h1.3M418.8 516.3h1.3M417.6 433.5h1.3M426.3 593.2h1.3M420.1 455.3h1.3M430.5 622.4h1.3M418.0 554.1h1.3M450.1 663.1h1.3M419.6 433.6h1.3M418.3 503.2h1.3M419.0 474.2h1.3M418.5 510.5h1.3M419.7 447.9h1.3M418.9 459.6h1.3M419.3 535.5h1.3M418.3 446.3h1.3M417.5 578.3h1.3M418.5 467.6h1.3M424.9 611.4h1.3M432.9 593.1h1.3M419.9 566.7h1.3M418.7 516.8h1.3M421.3 496.3h1.3M425.8 542.5h1.3M417.6 595.3h1.3M418.4 517.6h1.3M423.6 620.0h1.3M431.7 662.6h1.3M419.9 455.0h1.3M436.6 614.3h1.3M429.7 557.7h1.3M420.6 430.1h1.3M422.8 517.4h1.3M420.3 514.4h1.3M421.8 553.3h1.3M422.5 545.5h1.3M427.1 638.9h1.3M419.3 567.5h1.3M418.0 492.1h1.3M430.8 628.4h1.3M421.2 544.7h1.3M419.4 427.4h1.3M421.6 615.1h1.3M421.5 586.4h1.3M421.3 509.4h1.3M420.0 472.8h1.3M419.4 491.2h1.3M418.5 435.9h1.3M423.3 575.4h1.3M418.9 458.0h1.3M419.2 522.6h1.3M420.2 484.2h1.3M431.4 567.4h1.3M421.8 562.9h1.3M426.5 433.8h1.3M418.5 576.4h1.3M423.2 564.7h1.3M418.4 662.5h1.3M421.1 594.4h1.3M426.4 477.3h1.3M427.2 634.9h1.3M422.4 446.5h1.3M431.7 588.0h1.3M417.7 470.4h1.3M432.4 616.2h1.3M433.8 620.2h1.3M419.3 548.6h1.3M418.5 429.7h1.3M418.7 424.2h1.3M423.8 559.4h1.3M436.2 631.1h1.3M426.1 462.5h1.3M422.2 481.7h1.3M422.3 592.9h1.3M425.4 619.4h1.3M418.3 424.9h1.3M427.0 666.8h1.3M419.4 488.0h1.3M420.9 456.8h1.3M422.8 509.9h1.3M420.0 526.9h1.3M418.6 475.7h1.3M422.4 546.7h1.3M423.9 443.4h1.3M419.4 545.6h1.3M417.6 501.5h1.3M417.6 437.6h1.3M470.0 622.9h1.3M418.9 472.2h1.3M422.4 452.2h1.3M421.4 577.8h1.3M420.5 548.9h1.3M419.7 427.3h1.3M418.8 596.4h1.3M421.5 545.6h1.3M418.4 474.8h1.3M424.3 547.8h1.3M434.0 493.9h1.3M438.2 619.8h1.3M422.7 456.9h1.3M418.6 426.0h1.3M418.6 456.7h1.3M419.4 548.5h1.3M417.6 453.5h1.3M423.2 605.7h1.3M424.7 561.7h1.3M424.9 638.0h1.3M419.9 452.7h1.3M418.1 494.5h1.3M421.4 550.3h1.3M418.8 513.9h1.3M418.7 474.8h1.3M418.7 472.9h1.3M419.4 454.5h1.3M419.7 485.5h1.3M458.6 667.4h1.3M422.6 441.8h1.3M427.5 618.9h1.3M417.8 457.0h1.3M418.9 559.5h1.3M419.6 599.7h1.3M417.9 435.4h1.3M422.0 547.2h1.3M418.0 488.6h1.3M421.6 506.4h1.3M426.0 611.3h1.3M421.3 613.6h1.3M420.5 603.4h1.3M426.6 596.3h1.3M419.8 505.5h1.3M419.3 522.8h1.3M420.1 561.4h1.3M418.4 430.6h1.3M418.5 541.5h1.3M418.0 465.0h1.3M421.9 564.7h1.3M421.9 598.0h1.3M420.8 493.2h1.3M419.5 575.3h1.3M422.2 444.7h1.3M420.1 543.1h1.3M429.1 530.0h1.3M418.4 543.0h1.3M420.8 561.3h1.3M419.5 484.5h1.3M421.1 478.4h1.3M422.4 571.3h1.3M420.3 436.0h1.3M417.9 549.5h1.3M417.8 468.3h1.3M419.2 485.5h1.3M434.2 539.6h1.3M428.1 642.7h1.3M420.4 459.4h1.3M421.3 570.9h1.3M417.6 505.7h1.3M418.2 532.4h1.3M422.0 511.0h1.3M424.9 497.9h1.3M418.3 555.0h1.3M417.7 577.5h1.3M422.2 586.3h1.3M417.5 529.1h1.3M418.0 570.7h1.3M420.7 591.0h1.3M418.2 529.3h1.3M418.4 448.0h1.3M417.7 430.4h1.3M419.2 471.5h1.3M435.7 656.5h1.3M421.4 601.1h1.3M418.6 453.3h1.3M420.1 614.6h1.3M427.3 643.7h1.3M417.9 535.2h1.3M432.4 563.4h1.3M418.2 428.9h1.3M417.7 443.4h1.3M418.5 503.3h1.3M434.1 536.1h1.3M423.4 434.6h1.3M421.1 484.4h1.3M430.9 616.2h1.3M418.0 602.0h1.3M430.1 599.8h1.3M420.4 424.4h1.3M420.8 584.7h1.3M422.6 450.8h1.3M429.9 616.1h1.3M421.5 462.3h1.3M417.8 458.7h1.3M419.3 615.5h1.3M431.1 560.4h1.3M420.1 524.9h1.3M442.4 644.1h1.3M422.3 434.1h1.3M417.7 513.1h1.3M417.9 492.4h1.3M419.8 552.3h1.3M420.7 454.9h1.3M432.0 515.0h1.3M423.6 620.1h1.3M424.6 597.6h1.3M420.4 472.1h1.3M431.8 441.6h1.3M421.1 427.0h1.3M424.1 458.1h1.3M420.7 604.2h1.3M418.3 548.6h1.3M421.6 592.9h1.3M418.1 477.4h1.3M431.6 659.6h1.3M419.9 497.0h1.3M421.3 584.2h1.3M418.3 498.8h1.3M417.6 447.3h1.3M419.5 519.5h1.3M429.9 599.8h1.3M420.5 563.2h1.3M429.8 604.7h1.3M419.7 581.9h1.3M421.0 558.1h1.3M424.2 521.0h1.3M418.7 623.3h1.3M432.3 595.0h1.3M459.5 609.8h1.3M417.9 503.2h1.3M423.4 548.0h1.3M418.0 483.7h1.3M417.9 440.1h1.3M433.7 499.3h1.3M419.2 484.4h1.3M417.7 455.0h1.3M424.3 558.2h1.3M418.2 538.7h1.3M419.7 482.5h1.3M418.1 433.6h1.3M418.2 461.6h1.3M449.7 643.3h1.3M427.6 598.3h1.3M420.9 530.4h1.3M426.9 538.6h1.3M418.0 518.0h1.3M417.7 563.4h1.3M419.0 498.4h1.3M421.4 513.1h1.3M417.6 555.7h1.3M417.8 453.1h1.3M422.4 546.3h1.3M440.4 602.6h1.3M460.9 636.6h1.3M421.0 556.0h1.3M432.5 601.2h1.3M419.1 503.8h1.3M422.8 540.7h1.3M423.1 480.0h1.3M440.2 617.0h1.3M418.6 540.9h1.3M421.2 536.2h1.3M425.4 618.5h1.3M420.2 570.2h1.3M418.4 481.0h1.3M418.5 521.4h1.3M419.3 473.3h1.3M421.4 551.9h1.3M421.0 544.3h1.3M429.9 584.7h1.3M417.7 442.0h1.3M419.3 513.2h1.3M418.4 446.5h1.3M429.7 581.3h1.3M418.8 472.0h1.3M419.8 484.6h1.3M425.8 655.4h1.3M431.2 631.3h1.3M423.1 555.8h1.3M419.4 583.9h1.3M424.0 480.2h1.3M430.8 607.8h1.3M419.7 524.3h1.3M425.2 576.0h1.3M421.2 446.8h1.3M417.5 426.9h1.3M417.7 515.5h1.3M427.8 656.3h1.3M418.8 528.9h1.3M420.3 489.2h1.3M417.7 428.8h1.3M419.8 565.2h1.3M417.7 442.6h1.3M418.4 497.6h1.3M426.1 533.0h1.3M417.8 526.1h1.3M418.9 459.6h1.3M417.6 494.7h1.3M417.8 485.5h1.3M418.2 451.9h1.3M421.2 552.6h1.3M429.4 552.9h1.3M418.4 423.8h1.3M426.5 548.6h1.3M418.0 486.6h1.3M430.2 567.6h1.3M419.4 432.8h1.3M426.4 512.1h1.3M419.5 458.2h1.3M428.8 593.1h1.3M418.5 492.9h1.3M418.8 516.8h1.3M425.5 607.1h1.3M418.8 483.4h1.3M424.8 596.6h1.3M417.7 522.0h1.3M423.7 602.5h1.3M417.6 462.2h1.3M422.5 571.3h1.3M424.5 501.0h1.3M417.6 598.1h1.3M419.7 528.4h1.3M417.5 600.4h1.3M424.4 664.4h1.3M423.3 576.9h1.3M417.7 426.5h1.3M419.8 600.5h1.3M431.5 614.8h1.3M421.3 460.2h1.3M423.5 505.0h1.3M419.2 501.6h1.3M419.0 515.5h1.3M418.3 527.8h1.3M420.0 456.2h1.3M423.6 540.9h1.3M421.6 521.1h1.3M417.6 555.6h1.3M423.1 587.9h1.3M417.8 478.2h1.3M433.4 609.1h1.3M422.8 546.1h1.3M429.8 540.1h1.3M422.3 528.6h1.3M418.4 444.1h1.3M422.4 656.6h1.3M418.4 534.0h1.3M420.5 475.3h1.3M424.4 611.4h1.3M426.5 512.8h1.3M422.5 491.5h1.3M417.8 563.4h1.3M420.3 489.4h1.3M427.2 531.0h1.3M436.7 593.2h1.3M427.1 444.0h1.3M421.7 590.1h1.3M424.2 544.3h1.3M418.0 429.4h1.3M418.1 457.1h1.3M420.2 566.7h1.3M426.8 572.1h1.3M418.6 595.1h1.3M422.8 533.9h1.3M427.2 431.3h1.3M420.2 569.2h1.3M423.4 543.1h1.3M422.1 584.2h1.3M421.0 617.1h1.3M418.8 460.6h1.3M418.3 447.6h1.3M418.3 427.4h1.3M418.7 492.9h1.3M424.8 537.6h1.3M419.7 477.4h1.3M418.2 543.8h1.3M417.6 556.6h1.3M419.8 517.2h1.3M422.8 607.6h1.3M419.1 449.3h1.3M421.0 600.3h1.3M423.4 535.1h1.3M430.0 478.7h1.3M422.3 519.5h1.3M419.2 506.2h1.3M422.7 590.2h1.3M423.1 600.4h1.3M433.3 649.0h1.3M422.1 565.1h1.3M434.3 614.4h1.3M421.5 560.1h1.3M417.9 585.6h1.3M419.0 495.6h1.3M418.7 477.3h1.3M423.4 592.0h1.3M423.5 574.1h1.3M419.2 429.0h1.3M423.7 615.3h1.3M422.7 546.1h1.3M418.2 486.7h1.3M421.2 596.3h1.3M420.1 589.7h1.3M421.1 572.6h1.3M424.7 573.9h1.3M419.1 500.0h1.3M420.9 569.7h1.3M435.0 617.6h1.3M418.5 436.4h1.3M420.9 593.0h1.3M429.2 603.0h1.3M418.8 649.9h1.3M419.0 513.1h1.3M422.8 577.4h1.3M427.0 593.2h1.3M421.0 462.9h1.3M418.4 531.3h1.3M418.8 483.4h1.3M418.9 548.2h1.3M418.9 470.4h1.3M417.9 448.5h1.3M422.6 589.8h1.3M441.1 614.6h1.3M419.8 537.5h1.3M428.3 569.0h1.3M421.5 443.1h1.3M428.0 657.0h1.3M417.6 572.5h1.3M418.3 512.2h1.3M418.1 495.9h1.3M418.7 448.7h1.3M418.6 508.2h1.3M419.7 480.8h1.3M424.4 572.0h1.3M426.7 640.3h1.3M418.7 506.3h1.3M417.7 513.8h1.3M418.2 539.0h1.3M420.6 503.7h1.3M429.7 620.1h1.3M423.3 594.7h1.3M419.4 512.3h1.3M422.1 526.0h1.3M419.2 444.4h1.3M420.2 638.7h1.3M418.2 468.3h1.3M418.1 478.2h1.3M418.0 509.1h1.3M418.1 468.4h1.3M422.8 663.6h1.3M425.4 502.0h1.3M425.3 611.7h1.3M426.6 542.7h1.3M419.8 484.2h1.3M418.2 440.9h1.3M424.6 582.8h1.3M418.1 548.7h1.3M421.2 554.2h1.3M422.8 620.5h1.3M422.7 661.2h1.3M432.8 559.8h1.3M417.6 442.2h1.3M420.3 429.1h1.3M450.9 640.4h1.3M423.7 468.6h1.3M423.8 543.5h1.3M418.8 439.7h1.3M419.5 587.7h1.3M443.7 647.5h1.3M417.5 561.2h1.3M425.0 457.4h1.3M446.0 646.0h1.3M421.3 441.5h1.3M418.1 564.3h1.3M418.6 568.8h1.3M418.7 558.7h1.3M417.6 639.0h1.3M423.8 614.9h1.3M419.8 498.7h1.3M425.9 455.3h1.3M425.4 436.9h1.3M419.3 513.5h1.3M419.1 587.6h1.3M433.3 513.4h1.3M426.6 620.0h1.3M420.7 518.4h1.3M421.9 556.2h1.3M422.7 591.4h1.3M421.3 492.5h1.3M418.9 487.6h1.3M418.7 551.4h1.3M418.1 511.6h1.3M419.8 562.1h1.3M419.1 428.5h1.3M420.8 541.8h1.3M420.0 517.7h1.3M418.9 584.2h1.3M417.7 564.6h1.3M417.9 507.7h1.3M421.3 531.6h1.3M420.3 464.1h1.3M418.5 512.5h1.3M418.6 547.7h1.3M417.8 426.3h1.3M417.6 437.1h1.3M422.1 535.4h1.3M418.3 428.5h1.3M417.5 578.3h1.3M424.3 498.4h1.3M429.0 567.9h1.3M417.8 541.9h1.3M422.9 577.9h1.3M423.6 521.6h1.3M420.2 564.0h1.3M420.4 475.6h1.3M422.1 554.1h1.3M419.2 437.5h1.3M419.4 489.4h1.3M420.1 489.9h1.3M429.6 644.0h1.3M418.7 511.5h1.3M419.8 538.7h1.3M421.0 570.2h1.3M424.7 600.6h1.3M419.2 582.2h1.3M421.7 527.7h1.3M420.4 504.6h1.3M428.2 610.2h1.3M418.7 532.8h1.3M421.7 493.3h1.3M419.7 603.9h1.3M418.8 468.7h1.3M418.9 637.3h1.3M419.9 612.4h1.3M417.6 525.8h1.3M420.2 626.2h1.3M420.3 436.7h1.3M420.0 448.4h1.3M421.7 559.4h1.3M417.9 577.9h1.3M423.0 615.5h1.3M428.9 656.7h1.3M438.1 604.9h1.3M418.9 520.6h1.3M425.2 432.7h1.3M421.9 596.4h1.3M418.8 441.7h1.3M419.8 605.2h1.3M418.0 484.5h1.3M418.2 582.5h1.3M428.1 589.4h1.3M420.5 473.6h1.3M418.0 518.1h1.3M419.5 552.9h1.3M419.0 573.1h1.3M436.4 606.4h1.3M421.4 582.3h1.3M418.1 461.7h1.3M417.5 504.5h1.3M420.3 474.5h1.3M419.9 508.1h1.3M426.9 603.9h1.3M423.4 535.0h1.3M422.0 484.3h1.3M450.5 664.9h1.3M417.8 475.4h1.3M426.5 603.2h1.3M418.9 546.5h1.3M418.5 494.4h1.3M427.1 584.2h1.3M419.9 469.7h1.3M425.7 613.2h1.3M419.4 564.5h1.3M425.5 459.4h1.3M419.3 521.2h1.3M425.8 492.7h1.3M418.9 545.0h1.3M418.9 466.8h1.3M427.8 610.3h1.3M421.2 474.1h1.3M418.4 503.2h1.3M428.3 505.5h1.3M428.2 550.8h1.3M422.4 553.4h1.3M430.2 583.5h1.3M418.1 462.6h1.3M426.4 574.0h1.3M419.6 543.1h1.3M424.2 579.2h1.3M420.8 600.1h1.3M418.6 425.8h1.3M420.3 429.0h1.3M418.6 542.2h1.3M421.4 527.6h1.3M418.2 526.8h1.3M422.6 552.8h1.3M419.5 541.0h1.3M423.0 579.0h1.3M441.3 593.4h1.3M428.5 639.2h1.3M423.2 548.5h1.3M420.8 534.6h1.3M418.8 527.9h1.3M421.7 517.3h1.3M421.5 522.3h1.3M418.0 427.1h1.3M421.4 508.6h1.3M419.3 542.0h1.3M422.4 464.6h1.3M419.5 509.4h1.3M419.5 476.1h1.3M432.7 596.3h1.3M428.6 599.1h1.3M418.0 485.2h1.3M423.4 610.1h1.3M431.5 531.9h1.3M424.3 576.2h1.3M418.9 529.2h1.3M419.1 561.0h1.3M418.6 448.4h1.3M420.2 460.7h1.3M423.4 432.8h1.3M425.9 555.8h1.3M425.2 614.6h1.3M421.0 433.8h1.3M418.4 427.4h1.3M435.4 667.9h1.3M417.8 533.7h1.3M418.1 465.4h1.3M419.4 468.7h1.3M431.6 560.3h1.3M420.5 563.7h1.3M420.9 604.2h1.3M420.2 615.3h1.3M417.8 593.0h1.3M417.8 584.1h1.3M419.8 605.2h1.3M418.5 491.3h1.3M421.6 555.2h1.3M417.5 497.6h1.3M426.5 651.6h1.3M422.9 568.6h1.3M426.0 454.2h1.3M418.9 512.4h1.3M430.4 520.5h1.3M418.5 473.3h1.3M424.1 568.4h1.3M420.4 559.6h1.3M433.6 601.4h1.3M422.2 542.3h1.3M418.0 437.1h1.3M428.7 633.9h1.3M422.4 520.9h1.3M420.5 475.9h1.3M420.5 540.0h1.3M417.8 469.7h1.3M418.4 568.1h1.3M431.3 619.2h1.3M417.6 448.6h1.3M422.6 577.6h1.3M418.1 439.1h1.3M420.4 439.8h1.3M423.3 547.1h1.3M418.2 478.4h1.3M434.8 606.2h1.3M424.9 666.2h1.3M425.6 563.2h1.3M423.8 572.0h1.3M429.6 592.7h1.3M420.5 572.7h1.3M418.8 547.5h1.3M417.7 433.3h1.3M433.0 525.5h1.3M429.4 667.4h1.3M421.9 594.0h1.3M420.4 591.9h1.3M423.5 613.7h1.3M417.8 427.7h1.3M424.6 627.6h1.3M419.6 470.9h1.3M437.4 625.9h1.3M424.1 502.4h1.3M423.9 529.4h1.3M425.8 547.4h1.3M417.6 524.2h1.3M418.6 538.9h1.3M429.2 593.6h1.3M420.0 430.2h1.3M439.6 537.4h1.3M418.2 553.3h1.3M422.5 566.5h1.3M418.8 449.7h1.3M422.5 600.8h1.3M417.9 521.9h1.3M417.8 521.0h1.3M419.6 454.9h1.3M417.8 496.2h1.3M424.4 618.9h1.3M432.3 597.0h1.3M422.1 487.7h1.3M418.8 505.8h1.3M417.7 485.5h1.3M421.7 593.0h1.3M421.4 525.2h1.3M417.8 556.6h1.3M419.3 440.4h1.3M420.0 469.7h1.3M426.0 592.8h1.3M419.4 592.8h1.3M423.8 506.3h1.3M418.4 555.4h1.3M422.0 598.9h1.3M422.0 541.6h1.3M417.7 499.0h1.3M438.7 612.5h1.3M420.6 445.5h1.3M422.0 612.9h1.3M418.5 544.5h1.3M420.8 454.8h1.3M418.8 581.0h1.3M429.3 571.3h1.3M420.6 582.7h1.3M417.6 447.3h1.3M417.7 546.1h1.3M421.8 425.7h1.3M423.0 448.5h1.3M419.7 477.5h1.3M419.9 479.5h1.3M444.6 653.9h1.3M418.3 453.5h1.3M428.7 507.0h1.3M420.0 453.6h1.3M432.9 644.4h1.3M434.8 613.0h1.3M421.8 582.8h1.3M417.8 593.4h1.3M427.6 573.5h1.3M418.0 469.7h1.3M417.8 428.9h1.3M424.8 566.5h1.3M418.3 487.2h1.3M427.8 642.1h1.3M440.8 618.1h1.3M418.7 474.1h1.3M420.0 445.1h1.3M424.9 606.6h1.3M417.8 573.6h1.3M418.3 473.3h1.3M436.9 646.1h1.3M418.0 501.4h1.3M419.2 438.8h1.3M419.5 603.8h1.3M423.7 643.1h1.3M421.2 465.0h1.3M439.6 614.9h1.3M435.1 579.2h1.3M451.5 614.5h1.3M419.6 445.1h1.3M424.1 615.3h1.3M417.9 582.5h1.3M427.3 593.6h1.3M423.5 466.4h1.3M426.7 653.0h1.3M418.4 435.7h1.3M424.3 570.2h1.3M422.7 537.5h1.3M418.7 593.1h1.3M420.3 469.4h1.3M418.1 461.4h1.3M424.5 619.8h1.3M418.1 463.9h1.3M418.2 485.8h1.3M417.7 541.8h1.3M422.5 492.1h1.3M420.0 450.5h1.3M419.6 455.4h1.3M419.2 588.9h1.3M420.8 598.8h1.3M423.3 509.7h1.3M421.6 444.3h1.3M418.2 504.4h1.3M418.8 577.3h1.3M435.1 615.7h1.3M422.9 662.3h1.3M423.1 552.7h1.3M418.3 555.8h1.3M423.8 480.3h1.3M421.7 576.7h1.3M420.1 524.3h1.3M421.1 597.6h1.3M422.4 593.5h1.3M418.9 508.2h1.3M458.2 606.4h1.3M419.7 525.3h1.3M419.9 498.5h1.3M418.5 445.0h1.3M419.2 586.0h1.3M419.3 428.1h1.3M420.4 531.2h1.3M418.7 445.0h1.3M422.7 474.3h1.3M427.1 630.1h1.3M421.3 580.8h1.3M425.4 570.0h1.3M418.6 497.4h1.3M421.2 466.7h1.3M418.1 500.5h1.3M421.1 456.4h1.3M418.1 496.3h1.3M417.5 453.9h1.3M422.6 541.9h1.3M423.6 449.8h1.3M418.2 571.7h1.3M439.4 600.5h1.3M417.7 523.9h1.3M432.7 648.8h1.3M422.4 593.7h1.3M421.6 508.0h1.3M422.2 594.8h1.3M419.3 532.6h1.3M426.0 596.6h1.3M420.3 485.1h1.3M431.8 582.0h1.3M418.7 530.4h1.3M418.6 427.3h1.3M423.5 596.2h1.3M419.5 574.6h1.3M419.0 493.8h1.3M439.5 655.9h1.3M418.8 542.9h1.3M430.5 617.9h1.3M420.5 432.1h1.3M426.0 640.5h1.3M418.8 445.5h1.3M418.0 433.9h1.3M419.7 586.8h1.3M420.2 545.2h1.3M420.8 553.3h1.3M426.2 525.8h1.3M421.9 434.2h1.3M421.4 616.6h1.3M418.2 555.3h1.3M419.6 514.4h1.3M420.3 511.5h1.3M417.7 442.8h1.3M420.1 557.4h1.3M418.9 461.5h1.3M418.1 527.2h1.3M423.7 610.7h1.3M432.3 593.8h1.3M419.2 427.4h1.3M421.4 613.5h1.3M420.2 464.5h1.3M423.8 588.5h1.3M475.8 648.5h1.3M424.9 584.8h1.3M421.0 652.1h1.3M420.5 576.3h1.3M418.3 490.0h1.3M418.3 538.2h1.3M417.5 602.9h1.3M427.6 611.1h1.3M420.0 560.4h1.3M417.8 557.4h1.3M419.0 592.5h1.3M423.9 600.5h1.3M421.7 520.1h1.3M421.4 474.6h1.3M417.7 578.9h1.3M419.0 548.2h1.3M430.8 585.2h1.3M421.8 453.6h1.3M429.6 576.2h1.3M426.1 502.7h1.3M430.3 537.0h1.3M425.4 595.0h1.3M423.2 611.3h1.3M424.7 446.5h1.3M418.2 429.4h1.3M445.5 567.1h1.3M428.4 640.3h1.3M418.5 443.7h1.3M427.1 519.6h1.3M418.0 448.8h1.3M419.4 439.8h1.3M418.9 461.4h1.3M419.1 484.3h1.3M422.6 461.0h1.3M430.9 639.1h1.3M420.9 573.3h1.3M420.5 462.3h1.3M418.5 599.4h1.3M418.5 467.8h1.3M420.5 505.3h1.3M419.7 567.3h1.3M418.7 460.4h1.3M418.4 512.4h1.3M423.1 488.5h1.3M421.1 655.9h1.3M423.0 544.5h1.3M421.0 621.5h1.3M421.9 565.6h1.3M419.5 586.8h1.3M426.5 618.3h1.3M417.5 470.5h1.3M419.7 432.1h1.3M430.1 614.1h1.3M420.7 492.2h1.3M424.3 486.2h1.3M422.4 542.6h1.3M441.7 613.9h1.3M429.4 648.3h1.3M431.0 553.4h1.3M430.3 559.8h1.3M425.5 608.3h1.3M420.0 618.8h1.3M418.9 451.3h1.3M419.2 524.5h1.3M427.6 611.4h1.3M418.2 594.6h1.3M417.9 456.3h1.3M418.0 580.2h1.3M429.4 480.2h1.3M421.8 482.1h1.3M444.7 605.1h1.3M419.0 607.1h1.3M421.0 587.0h1.3M422.0 602.7h1.3M417.5 453.7h1.3M423.2 606.5h1.3M433.9 555.4h1.3M420.1 488.9h1.3M427.2 485.7h1.3M418.5 455.3h1.3M423.0 491.5h1.3M421.5 581.9h1.3M434.0 520.8h1.3M418.4 536.4h1.3M426.8 504.6h1.3M421.5 510.6h1.3M418.4 430.0h1.3M419.6 440.0h1.3M433.9 656.5h1.3M420.4 596.9h1.3M425.4 491.0h1.3M419.2 506.6h1.3M417.5 568.5h1.3M421.7 478.2h1.3M419.6 533.8h1.3M450.6 572.9h1.3M420.7 541.0h1.3M420.2 562.8h1.3M422.5 443.5h1.3M418.5 530.9h1.3M424.2 657.3h1.3M417.6 530.0h1.3M419.8 522.2h1.3M422.4 610.1h1.3M418.3 502.5h1.3M417.5 480.7h1.3M424.1 495.1h1.3M420.1 455.5h1.3M420.9 460.3h1.3M417.6 438.2h1.3M429.3 639.9h1.3M417.6 522.9h1.3M418.0 432.2h1.3M435.1 597.0h1.3M418.2 452.1h1.3M422.3 572.0h1.3M420.3 507.6h1.3M417.5 432.9h1.3M427.7 489.1h1.3M433.0 572.2h1.3M420.9 508.1h1.3M422.7 447.3h1.3M418.4 444.8h1.3M423.8 589.6h1.3M419.9 424.6h1.3M417.8 431.0h1.3M417.5 492.8h1.3M474.5 597.8h1.3M419.8 495.4h1.3M419.4 436.4h1.3M418.4 568.8h1.3M422.1 613.9h1.3M417.9 470.8h1.3M421.5 517.6h1.3M418.3 580.0h1.3M424.5 545.9h1.3M423.9 553.6h1.3M449.5 613.1h1.3M420.6 564.9h1.3M422.8 465.6h1.3M425.2 542.0h1.3M429.4 653.6h1.3M421.2 605.3h1.3M417.8 562.9h1.3M421.8 605.9h1.3M418.5 506.9h1.3M419.8 510.7h1.3M426.4 654.6h1.3M420.4 584.0h1.3M419.8 582.5h1.3M419.0 435.3h1.3M425.0 614.0h1.3M421.1 527.2h1.3M420.1 475.7h1.3M426.6 611.0h1.3M419.8 575.5h1.3M420.7 542.5h1.3M419.4 496.7h1.3M421.6 471.9h1.3M425.2 593.7h1.3M423.9 568.3h1.3M418.1 557.1h1.3M421.4 480.6h1.3M423.3 580.3h1.3M423.5 445.9h1.3M421.9 569.2h1.3M422.3 552.7h1.3M420.9 441.5h1.3M424.9 513.3h1.3M418.5 484.8h1.3M418.3 510.7h1.3M441.3 650.6h1.3M418.7 506.9h1.3M420.2 619.4h1.3M420.2 523.4h1.3M419.1 488.0h1.3M418.3 486.8h1.3M419.7 614.9h1.3M438.4 625.8h1.3M417.5 443.2h1.3M418.7 464.3h1.3M422.4 607.6h1.3M418.0 589.3h1.3M418.2 517.2h1.3M420.0 605.1h1.3M422.1 590.9h1.3M418.0 446.8h1.3M439.2 595.6h1.3M417.7 486.3h1.3M418.6 613.5h1.3M430.2 552.1h1.3M425.4 556.4h1.3M419.2 513.3h1.3M419.9 439.4h1.3M425.7 617.6h1.3M419.3 443.9h1.3M419.2 530.1h1.3M418.7 577.6h1.3M433.7 610.1h1.3M418.1 456.9h1.3M425.9 545.7h1.3M421.2 561.8h1.3M424.4 569.7h1.3M419.8 426.8h1.3M420.8 528.2h1.3M419.4 439.8h1.3M422.6 630.4h1.3M417.5 525.5h1.3M419.6 597.9h1.3M418.3 595.9h1.3M417.7 524.8h1.3M419.4 515.4h1.3M427.9 607.7h1.3M426.4 508.9h1.3M427.7 619.4h1.3M418.8 481.3h1.3M419.8 476.0h1.3M419.4 545.0h1.3M419.8 532.8h1.3M422.4 563.4h1.3M431.0 652.7h1.3M418.9 489.9h1.3M420.8 549.1h1.3M419.9 437.9h1.3M424.7 551.6h1.3M419.0 446.1h1.3M419.6 484.2h1.3M421.7 658.6h1.3M452.8 575.9h1.3M419.8 563.0h1.3M418.3 571.0h1.3M421.4 610.1h1.3M418.2 597.9h1.3M453.9 624.6h1.3M425.6 619.1h1.3M440.2 650.4h1.3M424.7 479.9h1.3M418.9 549.7h1.3M419.9 600.4h1.3M417.5 458.4h1.3M418.1 520.6h1.3M425.3 579.9h1.3M418.4 447.5h1.3M418.9 591.1h1.3M434.6 558.8h1.3M423.5 543.1h1.3M431.5 603.5h1.3M418.7 586.3h1.3M418.6 427.9h1.3M418.4 529.7h1.3M418.8 553.8h1.3M420.8 602.8h1.3M445.9 614.2h1.3M418.8 582.8h1.3M417.5 428.4h1.3M418.0 581.3h1.3M430.0 602.0h1.3M418.3 564.3h1.3M417.6 472.9h1.3M420.6 596.4h1.3M422.8 604.8h1.3M422.8 441.0h1.3M421.2 519.8h1.3M420.5 528.2h1.3M425.0 533.1h1.3M433.5 610.0h1.3M421.4 576.8h1.3M423.9 476.0h1.3M417.8 561.8h1.3M427.1 555.7h1.3M433.9 625.6h1.3M429.6 533.6h1.3M431.5 508.1h1.3M419.5 469.0h1.3M423.1 595.7h1.3M446.1 654.2h1.3M419.7 511.8h1.3M419.5 597.2h1.3M438.1 601.8h1.3M417.7 522.3h1.3M433.5 506.0h1.3M417.6 491.2h1.3M432.9 652.2h1.3M419.6 529.7h1.3M417.8 542.6h1.3M419.2 429.2h1.3M418.0 519.3h1.3M417.8 484.4h1.3M425.4 596.5h1.3M417.7 449.1h1.3M421.9 582.9h1.3M422.1 435.6h1.3M419.0 479.6h1.3M428.1 529.6h1.3M419.6 482.9h1.3M425.0 630.6h1.3M418.5 484.9h1.3M429.1 587.6h1.3M417.9 439.6h1.3M432.1 663.9h1.3M418.1 438.3h1.3M432.2 623.1h1.3M423.5 611.2h1.3M459.2 623.9h1.3M418.0 478.3h1.3M417.8 479.8h1.3M419.2 600.7h1.3M420.5 469.4h1.3M417.9 435.7h1.3M418.7 533.8h1.3M420.7 456.1h1.3M418.7 506.3h1.3M418.1 516.0h1.3M421.1 460.5h1.3M425.1 574.6h1.3M425.7 498.9h1.3M421.1 576.0h1.3M424.1 545.6h1.3M419.9 480.2h1.3M424.7 520.1h1.3M419.9 452.8h1.3M424.6 665.0h1.3M423.0 562.7h1.3M426.7 617.4h1.3M420.4 493.4h1.3M417.7 480.5h1.3M423.5 445.7h1.3M425.9 589.6h1.3M420.1 516.3h1.3M421.1 591.8h1.3M419.4 514.7h1.3M419.7 438.9h1.3M418.0 515.3h1.3M420.2 459.3h1.3M434.1 589.6h1.3M422.0 629.6h1.3M419.5 542.4h1.3M424.2 593.0h1.3M423.1 535.7h1.3M419.4 588.8h1.3M420.3 489.3h1.3M424.1 550.2h1.3M418.2 570.6h1.3M424.5 453.6h1.3M419.6 458.4h1.3M427.4 562.3h1.3M420.4 525.3h1.3M419.0 598.8h1.3M417.7 465.9h1.3M417.9 426.1h1.3M424.0 505.1h1.3M427.5 601.6h1.3M440.3 612.5h1.3M420.3 517.3h1.3M434.3 607.8h1.3M418.3 521.6h1.3M421.2 478.9h1.3M435.0 564.0h1.3M423.1 584.1h1.3M425.0 606.1h1.3M424.7 593.1h1.3M432.8 662.7h1.3M422.0 617.5h1.3M419.5 667.1h1.3M418.5 557.2h1.3M424.2 600.1h1.3M417.9 491.8h1.3M418.2 425.7h1.3M437.1 490.4h1.3M424.8 597.8h1.3M419.0 505.5h1.3M426.4 608.3h1.3M419.4 606.6h1.3M419.0 503.2h1.3M418.8 424.9h1.3M417.6 590.6h1.3M431.5 657.1h1.3M418.6 504.1h1.3M418.1 461.6h1.3M421.3 539.6h1.3M424.3 621.5h1.3M417.6 599.6h1.3M419.5 506.7h1.3M418.9 583.7h1.3M420.4 541.2h1.3M429.4 631.2h1.3M420.2 610.1h1.3M434.3 589.4h1.3M417.9 560.7h1.3M419.4 466.1h1.3M428.1 619.4h1.3M418.1 532.0h1.3M417.6 463.5h1.3M420.9 497.1h1.3M419.1 492.1h1.3M427.3 613.1h1.3M422.0 553.5h1.3M427.0 631.4h1.3M423.6 576.1h1.3M424.9 551.0h1.3M419.0 440.4h1.3M423.0 657.9h1.3M419.0 445.3h1.3M418.6 429.3h1.3M433.5 593.6h1.3M422.0 516.8h1.3M417.8 488.8h1.3M419.0 448.8h1.3M418.1 493.6h1.3M431.4 486.6h1.3M419.5 489.6h1.3M419.7 588.9h1.3M420.5 594.6h1.3M431.4 471.9h1.3M422.3 583.0h1.3M420.5 511.8h1.3M423.5 573.8h1.3M431.3 614.3h1.3M423.1 507.3h1.3M428.0 620.5h1.3M434.8 543.1h1.3M420.6 513.6h1.3M426.3 530.9h1.3M421.5 541.6h1.3M422.6 610.5h1.3M425.7 454.4h1.3M420.2 588.0h1.3M427.9 592.8h1.3M418.6 514.4h1.3M422.0 597.8h1.3M419.6 617.4h1.3M418.3 488.5h1.3M428.5 654.4h1.3M418.9 607.8h1.3M419.8 597.2h1.3M418.2 495.5h1.3M427.4 595.6h1.3M421.9 467.2h1.3M417.5 478.3h1.3M433.8 533.0h1.3M422.3 531.4h1.3M417.5 499.1h1.3M423.9 570.0h1.3M432.2 618.5h1.3M422.1 570.4h1.3M422.4 538.1h1.3M418.4 558.6h1.3M417.9 506.4h1.3M433.8 667.4h1.3M421.9 645.5h1.3M420.1 459.4h1.3M420.8 490.4h1.3M423.7 582.3h1.3M421.4 611.4h1.3M419.2 517.3h1.3M420.9 472.7h1.3M432.8 503.0h1.3M418.1 426.5h1.3M418.8 556.2h1.3M421.2 570.5h1.3M417.6 468.4h1.3M418.4 494.9h1.3M417.8 451.2h1.3M425.3 560.8h1.3M429.8 595.8h1.3M417.7 527.6h1.3M418.3 593.0h1.3M417.7 557.8h1.3M418.1 452.0h1.3M417.5 452.9h1.3M417.6 513.6h1.3M418.2 605.3h1.3M426.8 622.6h1.3M420.9 481.7h1.3M425.7 614.0h1.3M419.4 449.5h1.3M421.0 482.9h1.3M418.9 432.7h1.3M421.9 609.7h1.3M417.9 519.9h1.3M423.1 610.0h1.3M425.3 555.9h1.3M418.3 546.7h1.3M417.7 449.3h1.3M421.5 512.7h1.3M419.7 458.6h1.3M420.0 433.7h1.3M419.1 562.1h1.3M419.7 460.9h1.3M419.1 442.7h1.3M429.6 616.6h1.3M429.3 630.2h1.3M420.3 585.9h1.3M417.9 474.2h1.3M419.4 493.8h1.3M428.8 666.6h1.3M420.8 551.1h1.3M419.5 619.8h1.3M424.1 652.9h1.3M418.6 492.9h1.3M431.9 618.2h1.3M421.4 579.9h1.3M418.0 556.5h1.3M418.9 516.7h1.3M417.6 448.8h1.3M417.8 563.0h1.3M422.1 533.7h1.3M427.6 545.9h1.3M418.4 532.9h1.3M418.1 437.2h1.3M420.4 547.0h1.3M419.0 572.9h1.3M424.6 457.8h1.3M418.4 462.5h1.3M431.5 582.4h1.3M422.5 504.3h1.3M422.1 524.1h1.3M418.6 507.0h1.3M437.3 576.7h1.3M422.6 617.1h1.3M422.6 425.7h1.3M427.3 461.8h1.3M418.6 432.7h1.3M421.9 485.6h1.3M418.5 458.9h1.3M427.6 503.0h1.3M423.4 498.5h1.3M417.9 483.2h1.3M422.6 558.0h1.3M417.9 490.6h1.3M421.6 566.0h1.3M418.1 434.0h1.3M419.6 451.6h1.3M420.7 611.6h1.3M418.8 532.0h1.3M418.9 597.4h1.3M420.6 592.2h1.3M426.0 593.5h1.3M421.8 496.6h1.3M417.8 527.0h1.3M418.4 463.8h1.3M422.5 536.1h1.3M425.1 603.6h1.3M421.1 580.4h1.3M420.2 445.1h1.3M421.1 533.8h1.3M422.1 561.9h1.3M425.1 620.7h1.3M420.1 576.8h1.3M418.1 470.4h1.3M421.5 479.2h1.3M417.7 572.9h1.3M427.8 618.2h1.3M420.6 534.6h1.3M423.0 581.0h1.3M419.1 590.7h1.3M418.3 597.3h1.3M417.6 539.7h1.3M417.6 492.5h1.3M427.2 645.6h1.3M421.6 595.0h1.3M421.7 557.8h1.3M420.1 635.4h1.3M417.8 535.4h1.3M419.9 576.0h1.3M421.1 488.4h1.3M428.4 592.0h1.3M418.9 605.9h1.3M425.4 605.9h1.3M421.8 455.1h1.3M425.1 477.6h1.3M426.9 617.0h1.3M421.4 593.0h1.3M425.0 602.6h1.3M434.5 579.8h1.3M419.8 514.3h1.3M420.6 424.8h1.3M445.3 644.5h1.3M419.7 654.1h1.3M417.6 482.4h1.3M423.4 550.7h1.3M425.9 478.6h1.3M423.2 541.1h1.3M430.6 453.8h1.3M418.1 528.0h1.3M432.8 543.1h1.3M421.2 425.0h1.3M422.2 545.3h1.3M429.2 552.1h1.3M426.7 654.4h1.3M418.4 503.6h1.3M434.6 632.6h1.3M429.4 627.5h1.3M434.0 611.9h1.3M418.0 462.9h1.3M442.9 617.6h1.3M422.7 663.6h1.3M417.8 544.6h1.3M441.9 662.4h1.3M418.3 503.8h1.3M421.6 573.2h1.3M418.6 513.5h1.3M418.3 483.3h1.3M424.5 636.1h1.3M431.3 638.9h1.3M417.9 644.4h1.3M418.5 497.5h1.3M419.4 540.1h1.3M421.2 513.3h1.3M418.2 446.9h1.3M423.8 577.8h1.3M419.2 506.1h1.3M445.0 603.7h1.3M426.3 555.5h1.3M418.8 464.7h1.3M418.6 507.5h1.3M423.6 425.5h1.3M420.2 461.5h1.3M423.1 595.2h1.3M419.8 471.8h1.3M426.0 467.5h1.3M418.8 429.4h1.3M419.2 529.6h1.3M445.0 626.9h1.3M422.2 617.9h1.3M420.7 576.9h1.3M421.8 649.5h1.3M434.3 593.4h1.3M428.6 594.2h1.3M417.9 482.4h1.3M419.4 550.8h1.3M429.1 604.8h1.3M423.2 618.9h1.3M437.3 587.8h1.3M418.6 517.5h1.3M422.8 667.4h1.3M426.2 547.4h1.3M421.4 595.9h1.3M422.1 590.7h1.3M418.6 578.6h1.3M420.1 532.9h1.3M417.6 592.9h1.3M420.5 463.9h1.3M419.2 555.6h1.3M428.9 635.6h1.3M423.2 576.4h1.3M421.5 448.7h1.3M424.6 424.1h1.3M423.7 661.0h1.3M417.8 521.1h1.3M421.2 529.0h1.3M421.3 527.7h1.3M418.9 481.1h1.3M417.6 449.2h1.3M422.8 583.2h1.3M422.4 601.1h1.3M417.7 485.3h1.3M420.0 567.5h1.3M419.8 454.6h1.3M417.9 519.2h1.3M418.2 605.2h1.3M421.6 620.7h1.3M417.6 425.3h1.3M418.1 428.3h1.3M423.1 426.0h1.3M421.9 488.5h1.3M425.3 620.3h1.3M424.3 633.2h1.3M441.7 616.4h1.3M421.3 619.5h1.3M419.3 449.2h1.3M421.9 650.1h1.3M432.3 581.7h1.3M418.8 563.9h1.3M422.0 542.8h1.3M417.7 433.4h1.3M430.8 545.8h1.3M422.2 478.9h1.3M424.1 546.4h1.3M418.2 424.9h1.3M438.3 629.7h1.3M417.7 452.0h1.3M423.8 524.6h1.3M417.7 466.9h1.3M422.3 529.3h1.3M420.2 453.2h1.3M419.2 518.0h1.3M420.8 644.1h1.3M420.3 461.1h1.3M426.7 537.9h1.3M445.6 650.5h1.3M445.9 642.8h1.3M421.3 438.4h1.3M419.2 590.0h1.3M419.2 599.7h1.3M418.6 499.8h1.3M417.8 449.4h1.3M420.2 540.7h1.3M428.3 609.2h1.3M417.5 464.4h1.3M422.8 476.7h1.3M417.7 445.4h1.3M421.3 459.0h1.3M419.4 508.5h1.3M419.1 542.2h1.3M418.7 483.5h1.3M421.2 569.0h1.3M420.0 552.9h1.3M419.6 559.3h1.3M425.7 520.8h1.3M418.2 562.4h1.3M420.7 446.1h1.3M418.7 441.7h1.3M421.0 602.8h1.3M421.5 603.9h1.3M422.1 578.5h1.3M418.4 434.8h1.3M419.2 608.6h1.3M422.6 598.0h1.3M419.0 441.9h1.3M425.1 592.0h1.3M421.5 609.0h1.3M418.8 535.3h1.3M439.3 615.5h1.3M429.0 638.1h1.3M425.4 620.3h1.3M421.1 574.6h1.3M421.0 582.2h1.3M461.3 632.8h1.3M420.1 439.5h1.3M423.8 583.5h1.3M418.1 529.7h1.3M419.5 430.0h1.3M420.7 498.8h1.3M418.7 564.5h1.3M422.1 437.4h1.3M421.9 562.5h1.3M423.0 522.8h1.3M422.7 660.9h1.3M417.8 430.6h1.3M423.3 525.2h1.3M422.9 545.7h1.3M417.9 585.4h1.3M420.2 520.1h1.3M418.8 470.3h1.3M417.7 439.5h1.3M420.4 529.8h1.3M418.3 434.8h1.3M438.4 609.0h1.3M419.6 591.6h1.3M424.3 522.6h1.3M431.4 521.5h1.3M419.0 558.1h1.3M418.0 528.8h1.3M422.1 430.1h1.3M419.0 450.6h1.3M418.1 483.5h1.3M418.8 521.8h1.3M423.7 585.7h1.3M417.7 532.6h1.3M429.3 601.6h1.3M418.4 461.6h1.3M422.9 642.2h1.3M419.1 460.4h1.3M418.3 504.2h1.3M419.4 604.6h1.3M420.8 589.4h1.3M420.0 503.5h1.3M419.4 499.7h1.3M419.5 592.8h1.3M422.3 441.3h1.3M419.4 454.5h1.3M420.1 597.0h1.3M430.4 538.7h1.3M417.6 549.4h1.3M418.7 438.3h1.3M423.8 443.8h1.3M418.8 522.7h1.3M426.9 604.6h1.3M420.9 492.9h1.3M420.4 556.3h1.3M418.6 599.6h1.3M432.1 618.1h1.3M419.5 571.2h1.3M419.0 479.7h1.3M422.9 507.8h1.3M417.6 469.8h1.3M429.2 597.9h1.3M418.4 438.5h1.3M418.1 483.2h1.3M421.5 534.2h1.3M422.0 489.8h1.3M424.8 619.1h1.3M419.4 456.3h1.3M420.3 459.2h1.3M433.0 632.3h1.3M418.3 458.8h1.3M419.4 452.6h1.3M420.6 620.9h1.3M422.4 648.1h1.3M417.7 507.5h1.3M418.6 487.6h1.3M430.2 629.1h1.3M420.4 471.6h1.3M417.6 484.0h1.3M421.4 612.5h1.3M421.3 601.9h1.3M419.5 554.6h1.3M417.6 462.4h1.3M418.7 444.6h1.3M427.4 643.8h1.3M418.6 425.6h1.3M419.0 520.7h1.3M417.5 438.5h1.3M419.3 472.0h1.3M418.0 478.9h1.3M429.1 581.3h1.3M424.1 542.5h1.3M418.3 491.6h1.3M434.2 492.7h1.3M423.9 541.4h1.3M422.3 469.8h1.3M418.4 477.1h1.3M424.4 551.3h1.3M422.5 545.0h1.3M429.2 582.1h1.3M423.3 495.3h1.3M422.2 528.5h1.3M420.8 543.5h1.3M424.0 521.2h1.3M418.4 478.7h1.3M418.0 529.6h1.3M421.1 587.5h1.3M418.0 424.3h1.3M421.0 501.6h1.3M418.6 453.5h1.3M421.4 535.9h1.3M418.5 477.1h1.3M421.3 436.8h1.3M420.6 537.9h1.3M422.8 584.1h1.3M420.8 587.7h1.3M451.4 637.8h1.3M419.5 440.5h1.3M423.5 527.6h1.3M447.2 668.0h1.3M427.4 606.4h1.3M429.3 593.8h1.3M418.6 443.0h1.3M423.1 532.9h1.3M418.4 519.5h1.3M419.5 599.0h1.3M417.9 484.7h1.3M419.8 428.8h1.3M420.8 450.2h1.3M419.2 431.0h1.3M421.0 618.5h1.3M417.7 456.3h1.3M420.6 601.9h1.3M417.8 606.5h1.3M419.0 585.0h1.3M419.4 572.1h1.3M421.6 552.9h1.3M418.4 477.0h1.3M418.7 507.9h1.3M429.7 540.1h1.3M417.6 479.3h1.3M422.9 482.7h1.3M449.5 610.8h1.3M427.5 527.9h1.3M422.0 609.1h1.3M418.1 537.0h1.3M423.7 610.4h1.3M418.4 467.4h1.3M419.8 450.1h1.3M418.1 436.8h1.3M423.0 424.6h1.3M417.7 438.1h1.3M417.8 450.4h1.3M432.4 650.5h1.3M420.1 507.4h1.3M435.7 665.3h1.3M426.3 574.3h1.3M425.3 569.2h1.3M419.1 458.2h1.3M423.8 616.1h1.3M427.1 594.5h1.3M418.2 484.6h1.3M428.7 630.7h1.3M418.3 429.1h1.3M419.8 565.6h1.3M438.9 607.6h1.3M417.6 425.8h1.3M418.0 451.9h1.3M432.6 581.4h1.3M418.2 457.0h1.3M418.6 473.6h1.3M424.3 604.0h1.3M419.7 581.3h1.3M423.4 596.1h1.3M420.0 578.1h1.3M424.3 612.1h1.3M435.8 642.0h1.3M420.0 442.3h1.3M418.9 435.9h1.3M430.3 619.3h1.3M419.3 591.4h1.3M417.6 507.6h1.3M420.0 606.1h1.3M424.3 582.1h1.3M419.4 456.5h1.3M420.7 463.7h1.3M423.1 507.3h1.3M417.5 550.0h1.3M421.4 598.2h1.3M431.9 597.9h1.3M420.5 431.8h1.3M421.4 525.2h1.3M422.1 583.2h1.3M419.0 583.8h1.3M418.8 436.7h1.3M419.7 585.9h1.3M419.2 446.4h1.3M418.1 497.2h1.3M417.8 533.9h1.3M420.5 508.0h1.3M423.5 606.5h1.3M447.6 620.0h1.3M436.1 643.0h1.3M422.1 614.1h1.3M418.2 507.8h1.3M422.1 616.4h1.3M433.0 617.1h1.3M417.6 506.7h1.3M418.2 462.6h1.3M419.7 477.8h1.3M421.4 519.8h1.3M421.1 475.5h1.3M418.1 535.2h1.3M421.6 562.3h1.3M418.3 559.5h1.3M427.5 581.1h1.3M423.7 550.4h1.3M429.8 543.5h1.3M421.9 623.7h1.3M426.4 608.9h1.3M419.0 499.3h1.3M427.3 591.5h1.3M419.9 466.9h1.3M421.7 553.2h1.3M469.8 594.6h1.3M419.2 490.8h1.3M421.7 650.2h1.3M417.8 456.0h1.3M418.7 527.2h1.3M417.8 592.9h1.3M417.7 594.2h1.3M420.3 482.1h1.3M417.6 462.0h1.3M417.6 436.7h1.3M419.1 526.1h1.3M421.2 455.2h1.3M420.8 538.6h1.3M418.8 508.5h1.3M418.4 518.3h1.3M419.2 467.3h1.3M421.4 513.4h1.3M418.7 445.9h1.3M422.5 518.3h1.3M421.5 584.5h1.3M418.0 535.0h1.3M427.6 548.7h1.3M422.7 565.5h1.3M426.2 620.4h1.3M417.5 430.3h1.3M420.1 545.7h1.3M420.6 534.6h1.3M419.5 449.3h1.3M420.7 600.8h1.3M420.3 468.4h1.3M424.1 506.5h1.3M419.5 546.5h1.3M432.5 538.3h1.3M438.8 444.5h1.3M418.5 434.1h1.3M419.1 502.2h1.3M417.9 428.4h1.3M424.9 543.3h1.3M419.5 531.2h1.3M420.9 463.4h1.3M423.8 488.8h1.3M425.0 575.1h1.3M417.5 542.9h1.3M418.1 481.8h1.3M418.6 468.8h1.3M420.7 487.4h1.3M418.5 441.8h1.3M425.0 531.5h1.3M420.0 573.2h1.3M418.0 474.2h1.3M418.4 426.0h1.3M420.1 484.0h1.3M435.3 620.6h1.3M422.0 452.2h1.3M422.0 477.5h1.3M431.2 595.5h1.3M417.7 439.1h1.3M419.3 449.7h1.3M419.0 642.0h1.3M421.4 604.3h1.3M439.7 613.6h1.3M419.9 524.8h1.3M418.0 479.0h1.3M419.9 556.6h1.3M431.7 609.8h1.3M420.9 552.4h1.3M424.8 586.4h1.3M420.2 434.5h1.3M424.4 635.5h1.3M418.7 559.0h1.3M421.8 508.6h1.3M419.2 429.4h1.3M419.7 516.4h1.3M419.5 559.6h1.3M420.6 533.1h1.3M419.4 426.0h1.3M429.6 643.1h1.3M418.5 530.1h1.3M437.5 662.2h1.3M431.8 560.2h1.3M419.2 506.7h1.3M420.0 510.8h1.3M425.4 615.6h1.3M424.4 565.7h1.3M420.7 611.1h1.3M422.3 481.7h1.3M421.9 624.2h1.3M418.1 501.2h1.3M423.6 572.6h1.3M427.6 639.1h1.3M418.9 550.1h1.3M420.9 559.5h1.3M429.5 511.1h1.3M420.5 578.4h1.3M417.9 600.6h1.3M425.8 574.2h1.3M427.1 588.1h1.3M420.5 603.8h1.3M431.7 569.4h1.3M419.0 543.1h1.3M419.4 470.0h1.3M421.9 563.1h1.3M425.7 478.3h1.3M420.9 529.3h1.3M418.0 437.7h1.3M421.3 484.4h1.3M425.1 596.7h1.3M417.5 458.1h1.3M422.4 603.8h1.3M425.4 606.6h1.3M418.3 603.1h1.3M420.9 487.6h1.3M426.7 637.9h1.3M417.5 427.5h1.3M432.7 635.5h1.3M420.7 472.3h1.3M434.4 603.2h1.3M419.5 459.0h1.3M426.2 576.9h1.3M431.8 571.6h1.3M418.1 451.1h1.3M417.7 578.9h1.3M422.0 590.6h1.3M434.2 599.9h1.3M418.6 518.6h1.3M418.7 441.1h1.3M418.6 438.8h1.3M426.2 607.3h1.3M418.0 566.8h1.3M427.9 597.6h1.3M422.4 598.7h1.3M423.4 611.2h1.3M422.0 621.7h1.3M422.2 620.0h1.3M421.5 486.9h1.3M419.5 589.9h1.3M418.6 511.0h1.3M424.1 666.9h1.3M420.9 604.4h1.3M418.2 463.2h1.3M419.0 487.6h1.3M417.9 515.2h1.3M417.9 438.3h1.3M418.0 655.5h1.3M418.2 444.0h1.3M422.2 553.5h1.3M421.5 528.4h1.3M424.3 594.2h1.3M427.0 620.0h1.3M427.9 487.6h1.3M418.2 542.8h1.3M437.8 621.8h1.3M418.3 480.7h1.3M422.0 497.0h1.3M419.5 472.0h1.3M422.6 601.9h1.3M422.2 496.5h1.3M421.4 535.2h1.3M421.6 427.5h1.3M417.8 551.9h1.3M424.3 576.6h1.3M417.6 451.0h1.3M419.4 553.6h1.3M418.9 456.5h1.3M422.8 597.5h1.3M420.2 596.3h1.3M417.8 511.8h1.3M440.6 637.4h1.3M418.8 443.3h1.3M418.6 498.0h1.3M419.8 440.5h1.3M423.6 530.1h1.3M419.4 565.3h1.3M422.1 609.8h1.3M419.4 555.1h1.3M418.9 571.3h1.3M426.1 632.2h1.3M423.0 620.9h1.3M420.5 424.5h1.3M427.2 536.1h1.3M419.6 465.8h1.3M420.0 492.2h1.3M428.4 609.6h1.3M417.8 494.9h1.3M419.9 598.1h1.3M419.0 474.8h1.3M421.8 664.4h1.3M418.2 475.1h1.3M420.5 519.9h1.3M420.2 509.1h1.3M418.3 548.4h1.3M418.1 458.9h1.3M418.4 543.8h1.3M428.4 613.5h1.3M418.3 520.1h1.3M418.4 527.3h1.3M426.3 494.6h1.3M419.9 467.6h1.3M422.8 613.5h1.3M429.3 601.2h1.3M418.4 510.2h1.3M418.8 543.5h1.3M432.4 565.9h1.3M426.3 595.7h1.3M421.3 474.0h1.3M433.5 627.2h1.3M424.4 501.3h1.3M419.5 545.4h1.3M418.6 437.9h1.3M425.8 605.5h1.3M419.3 566.5h1.3M418.5 529.4h1.3M418.0 461.0h1.3M417.7 516.0h1.3M428.8 580.7h1.3M419.8 523.4h1.3M424.3 454.3h1.3M422.5 509.3h1.3M422.7 431.8h1.3M475.8 656.5h1.3M418.2 447.6h1.3M421.7 599.2h1.3M423.9 612.4h1.3M418.9 535.9h1.3M419.2 508.1h1.3M420.3 539.1h1.3M422.8 454.5h1.3M418.4 471.2h1.3M418.2 558.7h1.3M419.8 440.0h1.3M427.0 594.9h1.3M449.1 592.0h1.3M426.5 430.9h1.3M423.9 437.5h1.3M421.0 552.4h1.3M419.5 590.9h1.3M418.9 430.1h1.3M432.9 599.0h1.3M422.2 544.9h1.3M417.8 456.7h1.3M420.6 615.7h1.3M424.5 595.9h1.3M418.4 461.0h1.3M421.4 658.7h1.3M417.6 454.1h1.3M420.6 572.3h1.3M418.3 489.8h1.3M419.5 469.4h1.3M417.6 549.7h1.3M419.5 575.1h1.3M417.7 450.1h1.3M421.1 594.8h1.3M420.4 437.2h1.3M422.6 594.8h1.3M425.6 576.4h1.3M424.4 431.9h1.3M419.7 461.8h1.3M425.8 518.6h1.3M419.7 509.4h1.3M417.8 471.1h1.3M428.1 667.5h1.3M421.6 497.4h1.3M417.8 425.9h1.3M427.2 525.2h1.3M421.8 579.8h1.3M429.0 605.2h1.3M417.8 454.5h1.3M429.8 597.6h1.3M417.7 501.3h1.3M422.7 544.2h1.3M418.4 426.6h1.3M419.1 527.9h1.3M441.5 613.0h1.3M418.9 594.4h1.3M422.3 614.0h1.3M419.4 455.5h1.3M422.7 643.9h1.3M418.6 459.6h1.3M426.1 601.1h1.3M420.6 509.1h1.3M420.1 536.0h1.3M418.5 453.8h1.3M418.3 543.9h1.3M434.1 619.5h1.3M419.0 473.8h1.3M427.3 524.4h1.3M430.8 549.6h1.3M426.5 602.1h1.3M418.7 463.7h1.3M419.3 579.3h1.3M437.1 600.9h1.3M418.7 480.6h1.3M420.5 437.8h1.3M428.3 656.2h1.3M432.4 603.5h1.3M417.8 479.9h1.3M423.0 618.4h1.3M420.7 488.5h1.3M419.8 594.4h1.3M418.7 538.0h1.3M420.2 464.3h1.3M419.1 562.9h1.3M450.2 602.6h1.3M425.7 579.7h1.3M448.6 655.8h1.3M418.4 513.0h1.3M422.9 496.8h1.3M425.0 600.0h1.3M421.7 449.4h1.3M424.7 435.2h1.3M422.9 579.0h1.3M420.3 537.4h1.3M421.2 538.4h1.3M417.8 481.5h1.3M423.0 525.5h1.3M418.2 475.1h1.3M418.0 453.0h1.3M417.6 512.1h1.3M418.0 514.0h1.3M419.9 525.0h1.3M439.3 637.6h1.3M422.9 590.1h1.3M417.6 457.6h1.3M438.6 590.3h1.3M417.9 452.4h1.3M425.0 625.7h1.3M419.0 478.0h1.3M423.1 495.3h1.3M417.7 480.5h1.3M421.3 563.4h1.3M417.5 502.4h1.3M420.3 564.5h1.3M419.0 582.8h1.3M418.1 446.7h1.3M439.9 615.7h1.3M418.0 440.2h1.3M418.3 549.6h1.3M417.9 493.2h1.3M421.4 453.9h1.3M417.5 581.4h1.3M417.9 426.6h1.3M422.7 533.9h1.3M417.8 476.3h1.3M418.3 606.1h1.3M421.1 460.6h1.3M419.7 437.6h1.3M424.7 612.7h1.3M426.2 552.7h1.3M419.5 601.7h1.3M419.0 518.8h1.3M420.9 590.4h1.3M418.1 557.4h1.3M424.2 612.0h1.3M417.9 424.5h1.3M419.2 493.1h1.3M419.5 530.6h1.3M419.0 542.8h1.3M417.9 466.7h1.3M432.0 575.0h1.3M432.7 552.1h1.3M424.8 574.2h1.3M418.2 602.2h1.3M420.2 564.5h1.3M422.8 597.9h1.3M422.5 498.3h1.3M418.2 492.8h1.3M420.2 568.1h1.3M417.6 502.8h1.3M422.4 501.4h1.3M421.4 535.8h1.3M419.9 438.4h1.3M421.1 599.8h1.3M420.8 454.6h1.3M418.0 429.6h1.3M419.4 510.1h1.3M447.0 664.4h1.3M425.1 590.9h1.3M417.9 563.0h1.3M421.6 424.8h1.3M420.4 493.5h1.3M425.3 456.9h1.3M446.0 641.0h1.3M417.6 492.3h1.3M427.6 590.9h1.3M417.7 516.4h1.3M418.0 458.4h1.3M419.5 550.7h1.3M417.9 556.9h1.3M421.0 523.8h1.3M420.9 442.6h1.3M425.8 545.1h1.3M420.9 538.5h1.3M417.8 522.9h1.3M418.4 605.7h1.3M419.7 489.6h1.3M418.6 540.4h1.3M419.4 610.7h1.3M418.7 573.7h1.3M432.4 503.9h1.3M419.5 459.0h1.3M417.5 496.2h1.3M425.0 595.0h1.3M418.2 535.2h1.3M421.1 646.2h1.3M424.5 583.5h1.3M441.1 618.5h1.3M422.4 590.2h1.3M424.0 619.7h1.3M419.5 597.1h1.3M420.0 464.6h1.3M419.8 509.1h1.3M417.5 515.1h1.3M417.9 431.9h1.3M421.1 503.7h1.3M424.1 555.8h1.3M419.3 467.2h1.3M417.9 444.4h1.3M417.8 552.4h1.3M418.6 582.0h1.3M420.5 467.2h1.3M419.1 524.4h1.3M425.8 613.2h1.3M420.1 482.5h1.3M421.1 498.3h1.3M418.4 465.7h1.3M423.5 530.0h1.3M427.7 619.7h1.3M418.6 507.8h1.3M418.5 470.2h1.3M433.5 532.4h1.3M418.7 560.8h1.3M419.5 465.7h1.3M421.8 576.6h1.3M417.6 555.2h1.3M449.0 628.2h1.3M433.8 585.7h1.3M417.6 507.3h1.3M417.9 537.4h1.3M418.4 528.0h1.3M422.1 433.0h1.3M418.8 560.8h1.3M418.0 436.7h1.3M417.5 452.9h1.3M419.4 426.8h1.3M424.3 560.9h1.3M421.8 603.8h1.3M418.4 588.3h1.3M430.5 542.0h1.3M417.5 444.7h1.3M417.9 591.1h1.3M420.0 483.6h1.3M420.7 477.2h1.3M422.9 613.6h1.3M424.6 598.9h1.3M419.1 449.9h1.3M418.0 438.1h1.3M422.4 436.0h1.3M425.0 530.5h1.3M437.8 517.8h1.3M418.3 547.4h1.3M425.1 622.0h1.3M444.0 630.1h1.3M418.1 424.8h1.3M422.2 457.3h1.3M418.0 545.0h1.3M418.3 450.7h1.3M427.5 647.2h1.3M418.5 435.0h1.3M421.5 471.0h1.3M427.9 568.0h1.3M418.8 503.9h1.3M427.0 607.1h1.3M419.7 470.6h1.3M420.9 558.2h1.3M422.9 569.6h1.3M419.2 439.5h1.3M419.4 586.0h1.3M419.9 593.9h1.3M433.1 594.1h1.3M446.2 612.7h1.3M423.9 587.4h1.3M440.8 594.1h1.3M446.0 485.7h1.3M422.2 452.0h1.3M418.5 448.4h1.3M418.5 535.1h1.3M420.8 461.7h1.3M419.7 503.9h1.3M423.2 586.4h1.3M420.7 497.4h1.3M417.1 463.1h1.3M421.2 468.8h1.3M417.4 613.6h1.3M418.2 453.3h1.3M422.7 526.4h1.3M420.8 601.7h1.3M424.3 631.2h1.3M419.0 454.3h1.3M417.7 469.2h1.3M421.0 466.1h1.3M417.2 483.2h1.3M421.8 578.6h1.3M419.3 460.4h1.3M419.5 492.7h1.3M418.7 515.7h1.3M423.7 600.0h1.3M418.9 522.1h1.3M419.4 579.2h1.3M418.0 530.0h1.3M419.3 544.8h1.3M419.5 558.9h1.3M424.4 634.5h1.3M422.4 577.5h1.3M418.6 435.6h1.3M421.7 567.4h1.3M419.3 436.1h1.3M417.6 501.6h1.3M420.3 575.4h1.3M419.1 500.2h1.3M421.4 481.4h1.3M420.9 589.6h1.3M419.6 622.1h1.3M421.9 516.7h1.3M423.2 601.8h1.3M421.6 498.5h1.3M421.3 629.8h1.3M423.2 612.5h1.3M418.3 494.7h1.3M420.6 425.7h1.3M418.5 558.2h1.3M418.7 473.4h1.3M418.3 454.1h1.3M418.7 455.9h1.3M418.9 514.3h1.3M417.3 507.4h1.3M419.5 564.3h1.3M421.7 513.8h1.3M423.0 535.4h1.3M422.8 610.2h1.3M418.4 556.7h1.3M419.6 570.5h1.3M420.1 536.7h1.3M420.9 469.5h1.3M422.2 556.1h1.3M417.2 512.6h1.3M421.2 461.5h1.3M419.9 503.0h1.3M421.3 443.6h1.3M417.3 515.9h1.3M418.3 530.4h1.3M420.9 541.3h1.3M417.5 595.7h1.3M421.3 535.1h1.3M422.1 528.5h1.3M420.9 423.8h1.3M420.2 570.2h1.3M418.3 516.8h1.3M420.3 436.8h1.3M418.6 431.4h1.3M420.3 533.5h1.3M419.1 621.8h1.3M422.2 499.4h1.3M419.8 630.5h1.3M419.6 531.8h1.3M418.3 586.1h1.3M417.4 575.8h1.3M417.5 582.3h1.3M419.9 450.1h1.3M419.0 534.8h1.3M418.9 494.5h1.3M421.0 459.3h1.3M420.9 592.7h1.3M423.8 564.1h1.3M417.3 592.4h1.3M424.1 595.1h1.3M421.2 507.5h1.3M421.5 536.3h1.3M420.5 549.7h1.3M421.5 500.6h1.3M419.7 436.5h1.3M417.8 462.1h1.3M424.0 599.4h1.3M420.8 630.1h1.3M421.1 590.7h1.3M423.5 577.5h1.3M423.7 621.8h1.3M418.7 433.3h1.3M420.0 466.4h1.3M420.9 594.6h1.3M419.5 616.4h1.3M418.5 628.1h1.3M419.3 448.8h1.3M419.1 453.3h1.3M420.5 576.4h1.3M423.8 564.6h1.3M418.7 636.5h1.3M420.9 595.9h1.3M417.8 558.6h1.3M422.1 509.6h1.3M419.1 523.8h1.3M418.6 534.1h1.3M419.6 634.9h1.3M422.3 559.9h1.3M422.9 554.0h1.3M419.5 618.3h1.3M423.2 605.4h1.3M421.4 607.7h1.3M421.6 532.8h1.3M418.8 528.3h1.3M419.1 434.9h1.3M421.3 608.2h1.3M417.6 530.9h1.3M421.2 635.4h1.3M418.9 486.1h1.3M418.5 502.2h1.3M421.2 483.9h1.3M422.7 526.5h1.3M419.5 554.2h1.3M420.2 642.3h1.3M420.9 475.6h1.3M419.9 549.4h1.3M417.3 510.3h1.3M422.3 529.1h1.3M417.6 616.5h1.3M420.9 534.8h1.3M419.9 560.9h1.3M421.3 437.8h1.3M417.7 427.7h1.3M418.9 573.8h1.3M419.7 443.9h1.3M417.5 521.5h1.3M421.8 468.7h1.3M419.2 593.9h1.3M424.2 641.9h1.3M418.3 592.3h1.3M420.1 452.0h1.3M418.6 546.4h1.3M418.4 433.2h1.3M420.3 481.4h1.3M423.6 558.7h1.3M418.7 552.5h1.3M417.3 594.3h1.3M423.1 544.8h1.3M418.8 483.3h1.3M422.8 577.6h1.3M418.5 462.8h1.3M419.0 589.1h1.3M419.3 465.0h1.3M420.7 495.4h1.3M419.7 467.8h1.3M422.6 638.9h1.3M423.4 591.0h1.3M421.1 515.4h1.3M421.6 492.7h1.3M421.4 464.0h1.3M418.2 462.1h1.3M418.8 479.7h1.3M419.9 478.1h1.3M417.6 517.6h1.3M418.0 604.1h1.3M424.1 622.7h1.3M418.5 443.4h1.3M420.7 543.9h1.3M417.5 490.8h1.3M417.1 429.6h1.3M422.8 619.3h1.3M421.5 571.7h1.3M419.9 520.9h1.3M422.1 530.0h1.3M422.2 554.9h1.3M422.2 514.3h1.3M419.4 621.0h1.3M417.2 639.2h1.3M419.8 524.4h1.3M418.2 604.0h1.3M423.9 600.2h1.3M419.5 520.5h1.3M419.6 518.8h1.3M417.5 535.7h1.3M419.4 427.1h1.3M421.7 484.4h1.3M417.5 622.3h1.3M418.3 595.0h1.3M420.0 601.3h1.3M419.8 461.0h1.3M419.6 485.1h1.3M420.8 440.0h1.3M422.4 615.8h1.3M420.5 434.2h1.3M419.4 522.6h1.3M419.2 624.7h1.3M417.6 624.4h1.3M419.5 472.6h1.3M421.9 563.4h1.3M423.5 574.0h1.3M418.5 593.4h1.3M424.2 595.7h1.3M417.9 449.1h1.3M417.1 439.2h1.3M419.5 490.2h1.3M421.5 594.3h1.3M421.0 594.9h1.3M419.2 479.8h1.3M421.0 445.2h1.3M418.6 604.1h1.3M420.0 642.0h1.3M419.5 627.9h1.3M420.9 617.7h1.3M423.9 587.5h1.3M418.8 468.4h1.3M417.5 525.9h1.3M423.8 630.9h1.3M420.0 625.1h1.3M418.6 592.1h1.3M418.7 596.5h1.3M418.0 438.2h1.3M418.3 500.8h1.3M420.9 438.7h1.3M422.9 531.8h1.3M421.7 484.2h1.3M417.5 528.9h1.3M423.9 627.7h1.3M418.7 432.2h1.3M421.1 448.3h1.3M422.4 574.9h1.3M420.4 472.4h1.3M417.4 593.3h1.3M418.9 571.0h1.3M419.2 529.0h1.3M419.1 555.9h1.3M419.2 614.1h1.3M418.6 497.2h1.3M420.9 447.0h1.3M418.9 542.9h1.3M422.0 500.0h1.3M418.0 464.0h1.3M417.4 597.3h1.3M418.2 436.2h1.3M422.2 557.6h1.3M422.3 580.1h1.3M420.5 640.7h1.3M424.0 638.4h1.3M422.9 581.3h1.3M417.6 477.5h1.3M422.7 578.2h1.3M419.3 493.3h1.3M418.3 615.2h1.3M420.4 567.4h1.3M421.9 500.1h1.3M420.0 491.7h1.3M420.8 527.7h1.3M417.4 633.0h1.3M419.6 524.3h1.3M418.1 453.1h1.3M418.8 567.6h1.3M421.5 500.0h1.3M420.1 622.3h1.3M421.0 494.1h1.3M417.8 474.4h1.3M419.4 485.2h1.3M417.9 448.5h1.3M421.3 459.1h1.3M418.0 510.1h1.3M419.6 567.8h1.3M417.8 449.6h1.3M419.5 552.9h1.3M421.5 527.0h1.3M419.0 637.7h1.3M421.1 626.3h1.3M421.4 501.4h1.3M417.9 484.1h1.3M417.1 425.2h1.3M421.9 601.5h1.3M419.2 501.9h1.3M419.5 494.0h1.3M419.2 575.2h1.3M417.7 549.7h1.3M417.9 486.7h1.3M422.5 516.4h1.3M421.0 464.8h1.3M423.3 603.4h1.3M418.9 641.6h1.3M422.0 583.7h1.3M417.9 427.5h1.3M418.8 534.2h1.3M417.1 484.4h1.3M418.3 444.2h1.3M423.4 605.1h1.3M421.1 483.4h1.3M419.1 450.3h1.3M422.3 549.5h1.3M418.5 535.2h1.3M419.5 508.8h1.3M421.4 476.0h1.3M417.3 469.3h1.3M419.7 522.4h1.3M419.4 634.2h1.3M423.1 642.9h1.3M418.4 597.3h1.3M418.2 453.2h1.3M420.6 492.8h1.3M417.4 504.4h1.3M423.3 596.6h1.3M419.1 558.4h1.3M417.2 534.9h1.3M421.1 487.4h1.3M418.3 430.9h1.3M422.1 492.0h1.3M419.1 454.4h1.3M419.3 433.3h1.3M420.5 519.7h1.3M420.0 603.2h1.3M422.0 533.1h1.3M419.1 520.5h1.3M417.3 429.9h1.3M419.7 605.3h1.3M418.9 428.0h1.3M422.6 555.9h1.3M423.0 593.3h1.3M421.9 627.7h1.3M419.6 436.8h1.3M418.6 590.6h1.3M418.3 466.5h1.3M418.9 439.0h1.3M422.9 622.3h1.3M420.5 481.3h1.3M420.2 642.2h1.3M422.8 536.1h1.3M420.5 623.5h1.3M421.4 566.9h1.3M419.1 544.5h1.3M420.5 537.5h1.3M419.7 635.4h1.3M419.1 588.6h1.3M418.9 565.5h1.3M421.7 563.4h1.3M424.2 592.8h1.3M419.4 627.2h1.3M420.4 484.0h1.3M419.0 576.9h1.3M419.0 486.5h1.3M421.4 466.5h1.3M422.3 611.0h1.3M421.3 592.9h1.3M419.8 446.6h1.3M418.6 450.9h1.3M421.0 581.5h1.3M420.6 564.9h1.3M418.6 588.5h1.3M417.7 510.0h1.3M417.7 593.6h1.3M417.9 492.1h1.3M423.3 583.9h1.3M419.9 529.2h1.3M420.7 571.9h1.3M418.8 472.8h1.3M418.5 614.0h1.3M419.6 489.6h1.3M418.0 438.9h1.3M419.1 486.7h1.3M422.2 582.1h1.3M418.6 573.7h1.3M419.8 545.3h1.3M425.1 625.8h1.3M419.5 556.3h1.3M418.2 616.3h1.3M417.6 603.9h1.3M420.9 523.3h1.3M418.2 456.6h1.3M420.7 466.7h1.3M418.6 631.6h1.3M423.7 599.9h1.3M417.3 479.5h1.3M418.2 590.9h1.3M419.5 505.8h1.3M420.6 435.9h1.3M419.0 581.3h1.3M419.6 533.6h1.3M418.0 468.9h1.3M419.7 452.9h1.3M423.6 557.5h1.3M422.4 567.4h1.3M420.7 431.6h1.3M418.8 427.2h1.3M421.2 473.3h1.3M420.3 578.6h1.3M420.4 441.1h1.3M422.6 577.0h1.3M420.2 618.8h1.3M418.8 517.8h1.3M421.9 642.1h1.3M420.8 508.7h1.3M417.6 607.7h1.3M421.6 634.5h1.3M418.7 636.2h1.3M419.4 534.2h1.3M417.7 493.1h1.3M419.6 530.4h1.3M424.0 601.2h1.3M421.2 438.4h1.3M417.2 588.9h1.3M421.9 490.4h1.3M419.1 567.4h1.3M419.7 466.4h1.3M421.2 513.7h1.3M422.1 529.3h1.3M421.5 521.5h1.3M421.1 642.0h1.3M419.2 444.7h1.3M419.9 491.6h1.3M417.3 438.5h1.3M418.2 582.1h1.3M421.5 452.1h1.3M419.2 602.1h1.3M421.5 590.0h1.3M418.4 487.7h1.3M419.2 461.7h1.3M419.3 534.6h1.3M417.2 543.7h1.3M425.2 635.7h1.3M419.6 580.6h1.3M418.3 428.2h1.3M424.1 624.0h1.3M421.4 556.2h1.3M417.9 578.5h1.3M422.8 596.0h1.3M421.1 525.2h1.3M420.0 483.2h1.3M418.1 494.2h1.3M420.4 603.8h1.3M418.1 458.6h1.3M421.2 472.4h1.3M417.6 482.0h1.3M423.5 616.0h1.3M417.2 596.0h1.3M421.1 515.5h1.3M420.4 462.5h1.3M419.1 512.6h1.3M418.2 439.7h1.3M417.7 544.4h1.3M421.1 517.2h1.3M419.3 530.4h1.3M422.3 634.5h1.3M423.4 635.0h1.3M422.0 507.9h1.3M421.2 498.5h1.3M423.9 582.3h1.3M420.2 514.9h1.3M422.8 559.6h1.3M420.2 504.8h1.3M421.5 509.0h1.3M417.8 425.9h1.3M418.2 432.1h1.3M421.9 548.4h1.3M418.7 464.9h1.3M420.8 576.4h1.3M419.6 538.4h1.3M417.1 578.1h1.3M418.5 438.5h1.3M419.8 442.4h1.3M418.4 620.1h1.3M418.4 561.7h1.3M423.2 621.3h1.3M418.0 535.7h1.3M421.2 530.5h1.3M419.1 459.7h1.3M417.3 597.6h1.3M420.1 514.1h1.3M418.0 424.7h1.3M421.4 632.6h1.3M418.3 490.9h1.3M418.4 583.6h1.3M419.7 457.8h1.3M419.6 583.8h1.3M417.2 588.1h1.3M420.7 460.8h1.3M419.5 574.8h1.3M418.1 438.8h1.3M421.9 489.3h1.3M422.7 577.2h1.3M424.0 574.4h1.3M418.4 612.5h1.3M418.9 490.6h1.3M422.6 543.6h1.3M418.8 609.2h1.3M418.4 508.2h1.3M418.4 544.5h1.3M420.7 504.1h1.3M423.6 633.7h1.3M418.3 437.3h1.3M418.5 470.6h1.3M421.3 445.7h1.3M419.2 488.4h1.3M418.3 568.1h1.3M421.2 449.6h1.3M421.9 488.0h1.3M417.6 570.5h1.3M423.4 538.5h1.3M421.9 513.0h1.3M419.3 500.9h1.3M418.5 536.7h1.3M423.5 558.2h1.3M419.7 440.9h1.3M418.7 488.3h1.3M422.1 502.1h1.3M425.1 627.6h1.3M417.4 606.2h1.3M420.4 639.4h1.3M418.3 481.1h1.3M420.3 436.1h1.3M423.2 613.7h1.3M422.4 597.5h1.3M423.7 633.4h1.3M421.8 567.3h1.3M421.1 629.0h1.3M418.0 559.1h1.3M423.5 551.1h1.3M425.1 636.5h1.3M422.7 569.0h1.3M419.8 464.6h1.3M422.6 508.1h1.3M422.3 546.2h1.3M419.1 537.8h1.3M417.6 424.3h1.3M420.1 434.0h1.3M423.9 605.6h1.3M423.1 635.7h1.3M420.2 431.9h1.3M420.1 441.5h1.3M421.8 483.2h1.3M418.6 439.3h1.3M420.0 606.0h1.3M424.4 621.4h1.3M423.5 549.6h1.3M420.7 620.3h1.3M419.2 511.1h1.3M418.4 487.6h1.3M424.5 637.8h1.3M419.0 525.7h1.3M417.5 470.8h1.3M420.6 577.4h1.3M419.7 455.0h1.3M421.1 542.6h1.3M418.6 438.5h1.3M421.2 603.2h1.3M419.0 614.7h1.3M419.5 498.9h1.3M417.0 605.2h1.3M420.5 429.6h1.3M420.2 503.9h1.3M423.2 538.8h1.3M420.8 425.6h1.3M420.7 501.3h1.3M418.0 439.8h1.3M420.6 535.3h1.3M421.2 572.7h1.3M422.5 515.6h1.3M419.6 542.3h1.3M417.0 523.0h1.3M417.2 638.0h1.3M421.0 450.3h1.3M418.3 477.2h1.3M417.9 508.6h1.3M420.2 525.4h1.3M417.7 494.8h1.3M419.6 439.6h1.3M417.4 423.8h1.3M421.3 483.9h1.3M418.0 425.0h1.3M423.3 572.3h1.3M417.6 489.9h1.3M418.7 510.5h1.3M417.5 467.8h1.3M419.1 484.8h1.3M419.0 609.4h1.3M421.7 467.9h1.3M417.2 431.1h1.3M419.8 449.4h1.3M417.3 558.3h1.3M419.8 486.0h1.3M421.1 596.7h1.3M424.8 626.7h1.3M420.5 457.4h1.3M417.7 425.1h1.3M423.1 537.5h1.3M419.8 444.9h1.3M421.0 619.9h1.3M420.3 522.3h1.3M418.6 581.0h1.3M418.8 577.7h1.3M417.7 431.8h1.3M424.5 598.8h1.3M417.3 616.0h1.3M420.8 557.7h1.3M421.8 499.1h1.3M417.1 442.0h1.3M418.1 467.4h1.3M421.8 509.7h1.3M421.4 617.6h1.3M418.8 438.7h1.3M421.3 503.1h1.3M417.8 563.9h1.3M417.1 491.2h1.3M419.1 439.5h1.3M417.9 522.1h1.3M419.7 526.0h1.3M417.5 500.2h1.3M420.9 581.0h1.3M420.3 473.7h1.3M425.0 638.5h1.3M421.3 557.1h1.3M420.4 426.9h1.3M418.8 565.0h1.3M420.1 532.2h1.3M421.9 614.8h1.3M417.8 458.3h1.3M420.1 508.1h1.3M423.5 597.5h1.3M423.2 614.1h1.3M424.4 628.2h1.3M422.1 584.3h1.3M420.7 497.7h1.3M418.4 474.0h1.3M420.9 547.1h1.3M419.2 487.1h1.3M421.4 566.1h1.3M421.4 624.0h1.3M421.6 555.9h1.3M417.4 572.0h1.3M418.7 490.5h1.3M417.4 628.8h1.3M419.1 434.6h1.3M417.5 613.6h1.3M419.6 521.1h1.3M421.6 634.2h1.3M420.6 532.2h1.3M417.0 620.4h1.3M417.0 506.6h1.3M419.4 531.9h1.3M419.4 453.1h1.3M418.2 611.9h1.3M418.1 463.2h1.3M419.1 512.9h1.3M419.6 577.0h1.3M419.1 507.6h1.3M419.5 570.3h1.3M421.6 456.8h1.3M420.9 476.2h1.3M422.0 560.3h1.3M422.4 495.9h1.3M417.0 591.2h1.3M421.4 531.3h1.3M424.0 574.3h1.3M421.9 600.7h1.3M421.6 456.2h1.3M422.0 559.1h1.3M421.0 612.8h1.3M423.2 614.5h1.3M417.4 526.3h1.3M419.0 429.0h1.3M421.3 455.8h1.3M419.6 514.6h1.3M419.7 494.3h1.3M417.0 604.3h1.3M421.7 475.6h1.3M419.8 486.5h1.3M418.6 459.1h1.3M422.8 582.5h1.3M419.5 449.0h1.3M420.8 527.7h1.3M419.9 558.5h1.3M421.9 629.1h1.3M418.7 466.7h1.3M420.9 489.3h1.3M417.9 492.6h1.3M421.0 546.0h1.3M417.1 449.5h1.3M418.6 621.7h1.3M417.8 469.4h1.3M418.9 526.1h1.3M419.3 491.2h1.3M420.9 584.1h1.3M420.9 447.4h1.3M421.4 526.3h1.3M420.1 440.4h1.3M421.4 508.0h1.3M421.6 619.4h1.3M420.7 586.6h1.3M419.4 625.5h1.3M422.1 530.2h1.3M421.0 428.0h1.3M421.7 507.0h1.3M417.8 558.2h1.3M421.9 576.4h1.3M417.7 520.1h1.3M422.2 596.5h1.3M418.9 436.6h1.3M422.6 529.9h1.3M420.5 480.9h1.3M422.0 524.6h1.3M417.4 572.5h1.3M420.3 465.4h1.3M424.7 622.4h1.3M420.0 542.1h1.3M418.2 627.0h1.3M420.5 466.1h1.3M420.2 518.5h1.3M422.5 565.7h1.3M417.4 428.3h1.3M422.7 585.8h1.3M421.3 492.1h1.3M420.3 614.3h1.3M417.1 540.4h1.3M418.0 519.1h1.3M421.8 534.1h1.3M424.7 624.2h1.3M418.9 479.3h1.3M422.6 623.5h1.3M423.6 549.2h1.3M421.0 540.6h1.3M418.0 569.6h1.3M418.5 553.9h1.3M418.6 532.7h1.3M421.5 484.3h1.3M418.6 494.8h1.3M423.3 632.6h1.3M423.6 556.0h1.3M422.0 617.8h1.3M418.4 455.0h1.3M418.8 557.5h1.3M425.2 640.9h1.3M422.6 555.9h1.3M424.7 643.4h1.3M422.3 536.4h1.3M418.7 577.0h1.3M419.7 542.6h1.3M418.3 571.1h1.3M417.2 638.0h1.3M418.6 612.2h1.3M420.2 460.2h1.3M417.4 520.5h1.3M423.8 574.9h1.3M421.0 446.8h1.3M421.5 564.9h1.3M421.8 589.1h1.3M420.6 526.6h1.3M418.9 632.6h1.3M420.8 582.0h1.3M419.7 575.8h1.3M420.6 534.8h1.3M419.4 565.3h1.3M420.7 517.9h1.3M420.3 480.9h1.3M419.9 617.7h1.3M421.0 503.2h1.3M420.2 444.1h1.3M420.6 512.2h1.3M421.2 585.0h1.3M419.3 563.6h1.3M424.3 595.5h1.3M418.3 430.7h1.3M417.4 530.8h1.3M418.3 461.4h1.3M418.1 456.3h1.3M421.3 531.0h1.3M422.3 512.8h1.3M419.5 482.2h1.3M419.7 558.1h1.3M422.4 544.0h1.3M419.6 637.9h1.3M417.6 490.1h1.3M418.7 467.8h1.3M418.1 449.2h1.3M421.3 473.8h1.3M421.0 572.4h1.3M421.7 473.1h1.3M422.3 517.7h1.3M421.4 447.7h1.3M420.5 599.1h1.3M420.5 508.6h1.3M421.7 621.8h1.3M419.4 441.2h1.3M419.4 604.5h1.3M418.9 443.6h1.3M419.3 626.0h1.3M418.0 518.0h1.3M420.1 535.9h1.3M418.5 497.7h1.3M420.6 602.8h1.3M421.4 604.3h1.3M422.8 557.5h1.3M421.1 603.6h1.3M418.0 582.9h1.3M421.5 614.5h1.3M420.8 529.7h1.3M417.4 494.2h1.3M420.9 430.1h1.3M418.3 587.0h1.3M417.4 468.9h1.3M418.8 502.8h1.3M417.6 431.3h1.3M417.8 536.0h1.3M422.8 616.0h1.3M417.8 470.5h1.3M417.6 425.0h1.3M418.8 579.1h1.3M421.4 588.3h1.3M423.9 641.8h1.3M421.6 464.2h1.3M417.7 501.2h1.3M418.0 580.7h1.3M419.6 438.4h1.3M421.1 486.4h1.3M422.0 478.6h1.3M419.8 603.9h1.3M420.9 539.9h1.3M418.6 533.9h1.3M421.8 574.8h1.3M423.8 627.6h1.3M420.5 625.1h1.3M417.8 451.4h1.3M418.3 529.9h1.3M422.0 619.5h1.3M418.8 445.7h1.3M418.4 441.9h1.3M421.8 494.5h1.3M422.7 605.2h1.3M419.9 582.2h1.3M424.1 612.7h1.3M419.9 580.6h1.3M418.9 457.5h1.3M420.5 517.0h1.3M419.2 470.2h1.3M418.0 449.0h1.3M417.0 425.0h1.3M419.5 464.6h1.3M417.7 450.9h1.3M423.3 624.5h1.3M418.9 553.0h1.3M419.8 457.5h1.3M421.4 598.3h1.3M417.3 512.0h1.3M420.7 528.9h1.3M424.0 603.1h1.3M420.9 561.5h1.3M420.1 574.5h1.3M418.6 428.0h1.3M418.7 541.3h1.3M418.9 554.6h1.3M420.9 432.1h1.3M423.1 612.5h1.3M420.0 446.9h1.3M418.2 436.7h1.3M420.4 442.6h1.3M419.5 494.0h1.3M422.0 484.4h1.3M417.2 605.2h1.3M417.4 503.7h1.3M420.8 445.9h1.3M417.5 424.3h1.3M417.4 549.6h1.3M417.6 489.2h1.3M418.7 620.0h1.3M423.9 608.8h1.3M420.1 441.1h1.3M419.3 489.8h1.3M418.5 599.5h1.3M417.7 626.3h1.3M421.0 582.1h1.3M421.7 628.8h1.3M418.9 534.2h1.3M420.3 627.0h1.3M420.5 456.4h1.3M418.6 487.6h1.3M423.0 606.6h1.3M420.8 625.5h1.3M418.3 565.0h1.3M419.5 633.2h1.3M420.0 518.0h1.3M420.1 464.5h1.3M417.9 431.7h1.3M419.5 577.3h1.3M419.2 612.7h1.3M419.4 533.9h1.3M422.7 580.0h1.3M421.8 483.4h1.3M420.6 524.3h1.3M422.4 512.6h1.3M423.1 571.7h1.3M421.8 532.4h1.3M418.5 471.2h1.3M419.7 513.3h1.3M420.0 608.1h1.3M418.4 433.7h1.3M422.5 615.5h1.3M420.9 540.0h1.3M421.2 616.3h1.3M420.7 545.4h1.3M420.6 539.6h1.3M417.5 425.9h1.3M419.9 632.7h1.3M417.3 618.1h1.3M421.3 479.0h1.3M418.6 643.1h1.3M419.9 597.7h1.3M417.3 425.5h1.3M420.6 558.5h1.3M419.6 599.9h1.3M420.7 488.8h1.3M420.5 468.6h1.3M418.0 570.5h1.3M422.7 640.8h1.3M420.5 468.5h1.3M419.4 511.1h1.3M420.8 634.0h1.3M419.4 619.7h1.3M420.0 475.3h1.3M420.9 447.1h1.3M421.9 485.0h1.3M422.9 610.7h1.3M420.1 504.6h1.3M421.0 617.7h1.3M420.2 444.5h1.3M420.4 438.9h1.3M420.3 629.8h1.3M420.4 457.7h1.3M419.9 536.1h1.3M419.5 557.6h1.3M420.3 566.1h1.3M417.9 513.9h1.3M421.9 607.0h1.3M419.9 517.6h1.3M419.2 529.5h1.3M418.2 424.0h1.3M418.8 526.9h1.3M418.8 511.5h1.3M417.3 550.9h1.3M420.2 569.3h1.3M421.5 508.3h1.3M419.7 633.2h1.3M420.5 590.8h1.3M421.1 444.1h1.3M421.9 484.5h1.3M420.9 533.8h1.3M422.8 614.6h1.3M421.1 585.8h1.3M420.9 593.2h1.3M423.0 557.0h1.3M421.8 528.9h1.3M420.7 587.6h1.3M418.9 527.8h1.3M417.1 553.0h1.3M419.6 611.2h1.3M420.2 494.1h1.3M417.5 486.9h1.3M424.1 596.3h1.3M418.4 614.2h1.3M419.8 521.6h1.3M420.9 451.6h1.3M419.7 515.5h1.3M423.5 546.3h1.3M420.9 619.9h1.3M420.4 475.7h1.3M423.6 623.3h1.3M420.2 439.4h1.3M424.0 606.3h1.3M417.1 612.6h1.3M420.7 489.5h1.3M419.7 472.1h1.3M417.3 628.9h1.3M421.3 501.6h1.3M422.4 567.9h1.3M420.1 560.8h1.3M420.8 492.7h1.3M417.8 501.3h1.3M421.2 492.1h1.3M420.2 478.4h1.3M418.4 513.4h1.3M420.9 424.4h1.3M421.9 587.2h1.3M419.4 478.2h1.3M419.6 580.5h1.3M423.3 610.0h1.3M423.2 529.8h1.3M424.5 597.4h1.3M420.1 501.0h1.3M417.5 620.8h1.3M417.8 534.6h1.3M418.3 504.5h1.3M419.8 440.9h1.3M424.2 633.6h1.3M418.2 493.8h1.3M421.7 561.7h1.3M418.8 447.1h1.3M421.6 465.8h1.3M419.6 434.0h1.3M417.4 463.1h1.3M421.5 486.9h1.3M423.0 567.7h1.3M422.8 567.1h1.3M420.9 571.4h1.3M417.7 506.9h1.3M419.9 625.9h1.3M421.2 549.1h1.3M420.9 432.1h1.3M422.7 616.4h1.3M417.5 618.6h1.3M424.3 622.3h1.3M419.8 487.8h1.3M420.7 516.8h1.3M420.9 621.3h1.3M417.1 443.7h1.3M417.4 487.5h1.3M418.1 526.3h1.3M417.5 627.9h1.3M423.5 550.1h1.3M420.5 612.3h1.3M419.6 576.8h1.3M420.0 596.0h1.3M417.6 427.9h1.3M420.8 460.9h1.3M421.5 542.9h1.3M423.0 522.6h1.3M423.3 632.8h1.3M420.2 463.1h1.3M417.2 429.9h1.3M421.3 509.1h1.3M421.4 628.4h1.3M420.3 463.8h1.3M422.6 560.2h1.3M418.0 442.3h1.3M423.1 589.3h1.3M419.2 477.6h1.3M420.9 425.5h1.3M419.2 513.0h1.3M417.1 624.9h1.3M419.9 557.7h1.3M418.8 625.6h1.3M420.4 453.2h1.3M417.7 565.1h1.3M420.9 438.5h1.3M420.5 475.8h1.3M418.5 493.3h1.3M417.0 521.2h1.3M418.3 573.4h1.3M422.9 620.0h1.3M419.1 546.6h1.3M420.2 471.7h1.3M422.0 495.5h1.3M420.5 603.4h1.3M423.1 628.8h1.3M417.2 478.7h1.3M417.5 568.8h1.3M419.9 464.0h1.3M422.2 589.9h1.3M420.8 438.4h1.3M417.2 559.0h1.3M418.8 563.0h1.3M418.8 488.4h1.3M418.3 457.3h1.3M421.2 447.0h1.3M417.2 524.7h1.3M421.3 470.2h1.3M422.8 614.8h1.3M419.6 624.0h1.3M418.1 580.6h1.3M422.6 502.5h1.3M422.9 533.2h1.3M417.9 585.8h1.3M423.0 582.1h1.3M419.5 572.3h1.3M419.8 452.0h1.3M422.9 556.9h1.3M418.6 613.0h1.3M419.8 508.0h1.3M421.4 493.2h1.3M418.0 493.2h1.3M418.2 484.6h1.3M419.4 623.3h1.3M420.5 559.5h1.3M422.1 618.5h1.3M423.8 560.4h1.3M422.3 538.4h1.3M420.0 466.0h1.3M417.5 497.8h1.3M421.3 443.6h1.3M417.4 441.1h1.3M419.4 597.0h1.3M419.0 605.8h1.3M421.8 622.9h1.3M418.5 451.7h1.3M421.1 459.9h1.3M422.2 517.6h1.3M421.6 588.5h1.3M417.0 502.1h1.3M418.1 426.4h1.3M421.9 530.0h1.3M417.8 538.7h1.3M420.5 425.8h1.3M419.1 535.5h1.3M419.7 643.2h1.3M420.1 428.0h1.3M422.2 611.9h1.3M421.0 625.5h1.3M417.1 433.9h1.3M423.1 533.7h1.3M420.7 622.7h1.3M421.1 467.4h1.3M420.6 526.2h1.3M421.1 524.9h1.3M419.7 428.2h1.3M418.8 594.8h1.3M421.2 536.1h1.3M418.4 469.0h1.3M417.7 602.3h1.3M417.2 476.4h1.3M420.8 642.1h1.3M421.8 466.2h1.3M419.6 585.5h1.3M418.1 620.4h1.3M423.1 601.1h1.3M420.7 487.6h1.3M418.0 473.3h1.3M419.2 430.4h1.3M423.0 585.8h1.3M417.1 589.6h1.3M417.7 476.5h1.3M420.4 425.5h1.3M423.8 570.4h1.3M420.2 513.8h1.3M423.6 581.7h1.3M418.7 509.0h1.3M419.1 575.6h1.3M423.7 571.9h1.3M420.7 516.8h1.3M417.3 480.1h1.3M421.6 511.1h1.3M424.7 626.4h1.3M417.1 535.8h1.3M418.7 429.3h1.3M421.7 461.9h1.3M419.3 637.0h1.3M418.9 536.0h1.3M418.9 487.2h1.3M419.6 538.8h1.3M419.7 472.6h1.3M423.0 559.2h1.3M423.5 547.3h1.3M417.7 615.6h1.3M421.8 490.5h1.3M419.9 633.2h1.3M420.8 483.4h1.3M421.2 521.9h1.3M419.7 451.9h1.3M418.4 560.8h1.3M422.8 570.7h1.3M418.7 454.9h1.3M424.4 592.5h1.3M420.3 632.4h1.3M421.7 554.4h1.3M422.7 635.6h1.3M418.7 636.0h1.3M422.0 546.7h1.3M422.1 601.9h1.3M418.3 639.1h1.3M417.6 576.7h1.3M419.8 466.1h1.3M419.2 461.4h1.3M417.2 521.3h1.3M418.4 438.1h1.3M421.8 502.5h1.3M419.3 554.5h1.3M421.1 475.8h1.3M418.8 443.3h1.3M420.6 569.6h1.3M421.0 513.0h1.3M420.0 461.3h1.3M422.8 588.7h1.3M421.2 473.1h1.3M420.3 622.5h1.3M418.8 456.0h1.3M417.3 609.0h1.3M417.2 488.7h1.3M420.2 568.1h1.3M420.6 606.8h1.3M417.4 481.9h1.3M421.8 572.7h1.3M420.2 507.5h1.3M419.6 581.7h1.3M419.1 438.2h1.3M420.4 580.7h1.3M421.6 618.9h1.3M419.8 436.5h1.3M424.3 643.5h1.3M417.3 600.8h1.3M420.9 583.0h1.3M425.5 643.8h1.3M417.1 554.5h1.3M422.3 493.6h1.3M418.4 639.3h1.3M419.9 618.7h1.3M417.2 560.2h1.3M420.2 431.8h1.3M421.6 581.8h1.3M422.1 538.6h1.3M424.2 591.3h1.3M420.3 482.8h1.3M420.9 519.3h1.3M424.6 639.4h1.3M418.3 536.7h1.3M422.0 565.1h1.3M418.1 471.1h1.3M423.8 559.4h1.3M420.3 630.4h1.3M420.0 433.7h1.3M419.8 529.7h1.3M423.2 629.0h1.3M417.5 569.4h1.3M417.4 430.5h1.3M421.5 540.9h1.3M419.4 524.6h1.3M418.3 481.1h1.3M419.3 489.5h1.3M420.5 431.1h1.3M423.8 595.3h1.3M419.2 546.3h1.3M418.4 611.7h1.3M418.9 636.3h1.3M421.7 558.8h1.3M420.1 444.5h1.3M420.9 431.6h1.3M418.3 452.7h1.3M422.0 634.8h1.3M423.8 563.3h1.3M425.0 638.9h1.3M422.0 582.0h1.3M419.5 483.6h1.3M421.2 473.7h1.3M423.6 617.1h1.3M420.4 426.8h1.3M420.5 513.7h1.3M421.6 622.8h1.3M418.7 578.9h1.3M418.1 438.8h1.3M423.6 600.7h1.3M422.4 526.2h1.3M424.1 606.0h1.3M422.9 551.9h1.3M419.0 509.5h1.3M417.8 565.8h1.3M417.4 522.3h1.3M418.1 444.5h1.3M419.8 573.8h1.3M422.9 538.9h1.3M419.9 627.2h1.3M420.2 524.8h1.3M419.5 451.3h1.3M420.7 496.9h1.3M420.1 562.1h1.3M417.9 598.0h1.3M419.8 432.3h1.3M423.8 618.5h1.3M419.8 553.9h1.3M418.5 470.0h1.3M421.3 493.5h1.3M417.9 496.7h1.3M423.1 617.7h1.3M419.1 510.0h1.3M419.4 437.4h1.3M417.7 426.1h1.3M421.7 461.2h1.3M418.6 607.0h1.3M419.1 539.9h1.3M417.6 514.5h1.3M417.8 636.5h1.3M419.8 620.0h1.3M419.9 470.2h1.3M421.7 608.2h1.3M420.9 426.9h1.3M422.6 614.3h1.3M424.1 625.6h1.3M421.5 572.7h1.3M419.0 442.5h1.3M417.4 574.1h1.3M420.7 496.6h1.3M417.5 494.1h1.3M418.9 569.7h1.3M417.9 609.9h1.3M423.5 594.0h1.3M419.8 452.9h1.3M419.3 573.3h1.3M417.6 445.2h1.3M424.7 619.0h1.3M424.0 584.1h1.3M417.7 579.4h1.3M423.1 573.6h1.3M419.8 454.8h1.3M419.7 527.5h1.3M423.6 568.2h1.3M417.7 557.5h1.3M419.2 515.0h1.3M423.8 574.5h1.3M419.6 497.4h1.3M417.8 440.4h1.3M424.6 604.8h1.3M423.0 619.7h1.3M417.8 581.1h1.3M420.1 435.3h1.3M418.5 573.2h1.3M421.0 486.1h1.3M417.3 579.2h1.3M420.8 566.5h1.3M422.5 577.1h1.3M418.4 540.3h1.3M417.8 524.3h1.3M422.2 487.8h1.3M418.3 593.3h1.3M418.4 516.5h1.3M421.1 619.7h1.3M422.3 603.3h1.3M418.4 532.8h1.3M419.4 443.8h1.3M420.9 469.8h1.3M418.7 587.8h1.3M420.7 580.5h1.3M417.6 481.5h1.3M417.1 586.4h1.3M421.6 467.6h1.3M420.4 513.6h1.3M419.2 549.4h1.3M417.0 561.6h1.3M420.6 592.9h1.3M421.4 569.6h1.3M420.0 611.0h1.3M417.9 439.0h1.3M417.0 426.3h1.3M421.0 430.3h1.3M421.4 442.4h1.3M419.1 428.6h1.3M417.9 464.7h1.3M417.8 463.6h1.3M420.6 454.7h1.3M421.2 493.3h1.3M422.8 572.2h1.3M419.8 440.7h1.3M418.3 493.4h1.3M421.8 555.7h1.3M420.2 514.5h1.3M417.1 614.7h1.3M422.3 538.2h1.3M417.6 425.2h1.3M418.1 428.0h1.3M418.7 429.0h1.3M419.8 467.4h1.3M417.4 502.4h1.3M424.2 614.8h1.3M422.1 631.9h1.3M419.7 434.5h1.3M421.2 517.3h1.3M418.5 470.2h1.3M419.5 619.2h1.3M418.2 505.4h1.3M420.3 566.4h1.3M421.6 568.8h1.3M419.3 437.1h1.3M418.1 467.5h1.3M420.9 447.2h1.3M417.1 619.8h1.3M418.7 552.0h1.3M418.4 642.7h1.3M419.4 463.0h1.3M419.8 503.6h1.3M425.0 620.7h1.3M418.9 437.1h1.3M419.8 431.1h1.3M417.8 551.8h1.3M417.2 426.2h1.3M419.2 552.0h1.3M419.0 483.1h1.3M420.3 632.2h1.3M422.0 638.3h1.3M419.9 438.1h1.3M419.4 432.5h1.3M420.5 521.6h1.3M419.7 639.3h1.3M420.5 541.2h1.3M420.2 445.6h1.3M424.0 569.8h1.3M417.4 509.8h1.3M418.8 529.4h1.3M421.1 556.1h1.3M420.4 458.8h1.3M419.4 435.0h1.3M421.7 619.8h1.3M418.5 450.9h1.3M417.3 429.4h1.3M418.3 509.2h1.3M418.4 514.7h1.3M418.2 527.5h1.3M421.0 440.1h1.3M418.1 531.1h1.3M418.2 523.1h1.3M420.7 440.1h1.3M418.2 617.3h1.3M418.4 502.6h1.3M418.4 617.5h1.3M424.3 635.9h1.3M417.6 614.1h1.3M417.2 582.5h1.3M420.8 471.2h1.3M423.1 526.6h1.3M419.5 440.5h1.3M422.9 609.4h1.3M425.2 643.0h1.3M420.4 470.4h1.3M423.5 617.0h1.3M421.7 470.9h1.3M419.5 549.2h1.3M418.9 451.0h1.3M421.2 495.8h1.3M421.3 598.9h1.3M421.8 466.1h1.3M419.5 589.3h1.3M418.1 542.7h1.3M422.7 643.9h1.3M419.2 480.6h1.3M420.2 614.2h1.3M422.0 617.4h1.3M419.3 629.8h1.3M421.2 632.5h1.3M420.0 441.3h1.3M418.1 617.4h1.3M417.5 496.6h1.3M417.2 513.5h1.3M424.2 622.3h1.3M419.2 556.0h1.3M423.1 633.3h1.3M421.3 522.0h1.3M420.1 623.0h1.3M417.1 573.9h1.3M420.5 548.6h1.3M421.6 534.1h1.3M420.1 545.0h1.3M420.2 604.8h1.3M420.3 593.4h1.3M419.7 500.0h1.3M422.7 594.2h1.3M423.7 614.5h1.3M417.9 449.2h1.3M421.4 604.7h1.3M421.3 636.1h1.3M422.0 536.1h1.3M422.8 602.8h1.3M421.3 627.3h1.3M419.5 551.4h1.3M419.1 537.8h1.3M420.6 488.6h1.3M420.7 643.7h1.3M421.8 578.3h1.3M420.7 460.8h1.3M421.1 445.6h1.3M417.1 523.3h1.3M421.7 487.6h1.3M418.9 443.1h1.3M421.0 617.5h1.3M419.3 610.3h1.3M423.6 604.5h1.3M420.4 431.1h1.3M422.2 514.4h1.3M418.9 442.6h1.3M419.0 561.1h1.3M423.3 602.1h1.3M419.9 573.4h1.3M419.8 454.3h1.3M422.2 635.7h1.3M421.1 623.1h1.3M422.8 590.2h1.3M419.7 519.0h1.3M421.6 477.0h1.3M421.7 552.3h1.3M424.5 610.8h1.3M422.4 627.1h1.3M417.7 558.9h1.3M420.2 615.9h1.3M421.2 611.5h1.3M420.1 424.9h1.3M669.4 680.3h1.3M574.6 676.0h1.3M539.7 673.6h1.3M549.6 669.4h1.3M556.6 666.9h1.3M545.9 661.0h1.3M512.2 665.4h1.3M521.0 658.6h1.3M524.7 664.4h1.3M514.7 646.0h1.3M529.0 643.0h1.3M494.0 658.0h1.3M494.0 661.0h1.3M481.0 651.0h1.3M483.5 648.0h1.3M474.8 637.4h1.3M481.0 636.2h1.3M502.7 622.0h1.3M471.8 611.0h1.3M470.5 617.0h1.3M464.3 657.4h1.3M464.8 660.0h1.3M449.3 660.0h1.3M449.3 663.5h1.3M508.5 599.0h1.3M479.8 583.4h1.3M462.8 524.3h1.3M462.3 536.0h1.3M458.6 537.7h1.3M451.8 549.7h1.3M449.3 555.2h1.3M444.9 505.3h1.3M442.4 520.3h1.3M436.1 438.7h1.3M436.9 442.4h1.3M436.9 451.2h1.3M437.9 484.3h1.3M437.9 491.8h1.3" stroke="#0a0a0a" stroke-width="1.3" fill="none"/><path d="M422.3 428.8h1.3M422.0 484.0h1.3M424.7 444.0h1.3M423.6 459.3h1.3M425.6 461.2h1.3M426.1 450.5h1.3M424.3 433.8h1.3M421.0 429.1h1.3M422.1 486.7h1.3M424.7 478.3h1.3M423.7 440.3h1.3M421.7 473.5h1.3M428.8 446.0h1.3M423.8 440.6h1.3M423.5 449.0h1.3M423.0 494.3h1.3M423.9 473.1h1.3M421.1 449.0h1.3M427.9 438.2h1.3M422.7 440.9h1.3M428.5 444.9h1.3M422.8 454.8h1.3M422.2 464.1h1.3M424.6 467.0h1.3M425.5 476.5h1.3M424.4 424.8h1.3M427.1 438.1h1.3M424.3 480.0h1.3M423.5 450.3h1.3M423.4 432.5h1.3M422.7 433.5h1.3M429.2 485.6h1.3M422.1 434.0h1.3M421.6 484.7h1.3M424.2 468.5h1.3M422.0 443.9h1.3M421.0 427.7h1.3M421.4 427.8h1.3M427.1 424.4h1.3M422.2 445.2h1.3M428.4 476.3h1.3M424.5 456.1h1.3M424.2 469.3h1.3M422.2 465.0h1.3M424.2 456.9h1.3M425.6 452.9h1.3M424.2 470.2h1.3M423.4 479.5h1.3M421.4 449.4h1.3M422.8 427.9h1.3M427.0 423.5h1.3M421.3 452.2h1.3M423.1 429.5h1.3M421.1 459.0h1.3M425.3 427.8h1.3M425.8 426.8h1.3M425.8 463.9h1.3M421.6 442.9h1.3M421.1 457.7h1.3M425.7 433.6h1.3M422.5 472.0h1.3M423.5 461.4h1.3M423.4 434.1h1.3M420.8 432.7h1.3M429.1 480.1h1.3M423.9 424.6h1.3M421.5 437.0h1.3M425.2 452.9h1.3M421.8 485.7h1.3M421.4 477.6h1.3M423.3 446.8h1.3M422.7 447.0h1.3M426.5 473.5h1.3M424.9 424.2h1.3M421.7 482.1h1.3M424.4 449.1h1.3M421.2 427.1h1.3M425.4 469.5h1.3M425.4 438.5h1.3M421.6 494.1h1.3M422.4 454.5h1.3M423.7 447.2h1.3M422.6 432.9h1.3M421.1 448.6h1.3M424.7 443.8h1.3M422.0 444.3h1.3M423.1 440.0h1.3M426.1 478.2h1.3M421.6 458.9h1.3M424.9 428.3h1.3M421.0 455.7h1.3M421.6 463.5h1.3M424.9 445.4h1.3M423.5 428.2h1.3M421.2 425.1h1.3M428.7 470.8h1.3M421.1 443.5h1.3M422.4 458.6h1.3M421.2 437.1h1.3M422.7 456.7h1.3M425.2 425.0h1.3M423.6 423.5h1.3M427.0 474.9h1.3M422.3 431.7h1.3M422.8 459.1h1.3M425.5 457.7h1.3M421.5 437.7h1.3M424.4 445.5h1.3M422.2 467.4h1.3M421.0 432.7h1.3M422.7 423.9h1.3M426.7 449.6h1.3M424.7 475.9h1.3M422.7 442.9h1.3M421.4 436.1h1.3M428.1 444.2h1.3M423.0 441.7h1.3M423.8 425.6h1.3M422.2 470.1h1.3M425.4 436.7h1.3M420.9 448.1h1.3M425.1 467.0h1.3M422.2 459.5h1.3M424.0 471.5h1.3M421.5 427.6h1.3M423.0 474.7h1.3M423.9 449.0h1.3M422.7 472.6h1.3M422.4 449.0h1.3M422.1 425.3h1.3M427.4 483.2h1.3M420.8 434.2h1.3M422.7 472.4h1.3M424.4 435.6h1.3M422.1 427.0h1.3M421.9 485.1h1.3M422.4 443.7h1.3M422.3 437.5h1.3M422.6 434.7h1.3M420.8 448.2h1.3M424.8 465.3h1.3M424.1 471.9h1.3M421.5 441.4h1.3M421.1 463.8h1.3M426.8 476.6h1.3M421.4 434.3h1.3M422.8 459.0h1.3M424.3 445.4h1.3M426.3 479.2h1.3M423.6 435.3h1.3M423.0 478.3h1.3M420.9 426.6h1.3M424.3 469.0h1.3M423.0 448.0h1.3M421.4 450.9h1.3M424.9 452.2h1.3M421.4 428.9h1.3M425.2 480.2h1.3M421.7 432.8h1.3M424.5 437.1h1.3M424.6 478.7h1.3M422.6 441.8h1.3M425.2 467.9h1.3M427.1 439.8h1.3M423.1 469.7h1.3M423.1 485.3h1.3M424.2 490.2h1.3M428.9 464.7h1.3M420.7 435.7h1.3M422.2 425.2h1.3M422.7 428.4h1.3M421.2 435.8h1.3M421.4 454.2h1.3M421.0 428.2h1.3M425.3 426.1h1.3M422.3 438.6h1.3M421.4 423.8h1.3M424.2 441.9h1.3M425.2 426.2h1.3M423.5 445.9h1.3M426.2 457.5h1.3M421.0 425.0h1.3M424.5 461.2h1.3M421.6 452.2h1.3M425.6 428.6h1.3M421.1 447.2h1.3M421.7 427.6h1.3M422.7 423.6h1.3M421.9 429.8h1.3M425.5 451.2h1.3M423.7 472.8h1.3M422.4 440.8h1.3M424.0 429.0h1.3M424.1 442.5h1.3M420.8 427.8h1.3M420.8 435.4h1.3M422.1 460.7h1.3M421.3 455.2h1.3M422.2 484.7h1.3M422.0 478.5h1.3M420.9 443.3h1.3M420.8 428.8h1.3M426.7 430.7h1.3M420.7 442.9h1.3M421.1 429.0h1.3M421.1 438.1h1.3M425.7 460.2h1.3M423.0 447.1h1.3M424.0 460.4h1.3M421.8 450.6h1.3M424.6 446.6h1.3M421.5 441.5h1.3M422.2 470.0h1.3M423.7 425.9h1.3M427.1 454.8h1.3M424.7 461.3h1.3M421.9 425.3h1.3M423.3 447.6h1.3M421.7 432.4h1.3M422.2 460.5h1.3M423.9 477.4h1.3M421.3 461.4h1.3M422.7 439.3h1.3M421.1 446.3h1.3M423.4 452.0h1.3M422.4 469.0h1.3M424.2 460.6h1.3M422.2 425.6h1.3M424.2 488.2h1.3M428.0 475.5h1.3M421.4 443.1h1.3M422.3 449.0h1.3M420.9 429.1h1.3M421.3 466.5h1.3M421.2 423.9h1.3M424.8 458.4h1.3M423.2 458.9h1.3M420.9 430.2h1.3M425.7 455.7h1.3M427.0 438.1h1.3M422.5 460.6h1.3M421.7 465.0h1.3M427.0 456.8h1.3M422.3 447.6h1.3M423.4 456.5h1.3M423.5 458.8h1.3M423.5 454.5h1.3M421.9 455.5h1.3M424.5 449.6h1.3M424.9 429.5h1.3M421.9 449.5h1.3M420.8 430.3h1.3M426.7 438.6h1.3M422.0 458.1h1.3M425.0 441.8h1.3M422.2 439.2h1.3M423.8 456.5h1.3M425.3 427.3h1.3M422.8 492.6h1.3M424.7 458.9h1.3M426.7 458.1h1.3M422.9 432.2h1.3M427.0 454.3h1.3M427.6 472.2h1.3M422.6 468.8h1.3M421.3 463.2h1.3M421.2 423.6h1.3M422.8 453.1h1.3M420.4 423.7h1.3M426.6 463.4h1.3" stroke="#ee1c24" stroke-width="1.3" fill="none"/></svg>
<div style="left:11px;top:747px;width:257px;height:54px;background:#f0f0f0;border:1px solid;border-color:#fff #6b6b6b #6b6b6b #fff;border-right-width:2px;border-bottom-width:2px;"></div>
<div style="left:16px;top:752px;width:99.5px;height:21.5px;background:#f0f0f0;border:1px solid #e3e3e3;"></div>
<div style="left:16px;top:774.5px;width:99.5px;height:22px;background:#f0f0f0;border:1px solid #e3e3e3;"></div>
<div style="left:116.5px;top:751.5px;width:147px;height:22.5px;background:#f8e88a;"></div>
<div style="left:116.5px;top:775px;width:147px;height:21.5px;background:#fff;"></div>
<span class="t" style="left:21.0px;top:756.0px;font-size:15.5px;line-height:19px;color:#1a1a1a;letter-spacing:-0.46px;">Count</span>
<span class="t" style="left:21.0px;top:778.5px;font-size:15.5px;line-height:19px;color:#1a1a1a;letter-spacing:-0.21px;">Particles / ml</span>
<span class="t" style="left:166.5px;top:756.0px;font-size:15.5px;line-height:19px;color:#1a1a1a;letter-spacing:-0.39px;">1472  of  5745</span>
<span class="t" style="left:221.5px;top:778.5px;font-size:15.5px;line-height:19px;color:#1a1a1a;letter-spacing:-1.02px;">80898</span>
<div style="left:276px;top:747px;width:148px;height:54px;background:#f0f0f0;border:1px solid;border-color:#fff #6b6b6b #6b6b6b #fff;border-right-width:2px;border-bottom-width:2px;"></div>
<div style="left:280px;top:752px;width:81.5px;height:21.5px;background:#f0f0f0;border:1px solid #e3e3e3;"></div>
<div style="left:280px;top:774.5px;width:81.5px;height:22px;background:#f0f0f0;border:1px solid #e3e3e3;"></div>
<div style="left:362.5px;top:752px;width:57.5px;height:21.5px;background:#f5f5f5;border:1px solid #e6e6e6;"></div>
<div style="left:362.5px;top:775px;width:57.5px;height:21.5px;background:#fff;"></div>
<span class="t" style="left:285.5px;top:756.0px;font-size:15.5px;line-height:19px;color:#1a1a1a;letter-spacing:-0.23px;">Efficiency</span>
<span class="t" style="left:285.5px;top:778.5px;font-size:15.5px;line-height:19px;color:#1a1a1a;letter-spacing:-1.39px;">PPUI</span>
<span class="t" style="left:374.0px;top:756.0px;font-size:15.5px;line-height:19px;color:#1a1a1a;letter-spacing:-0.49px;">21.5%</span>
<span class="t" style="left:389.0px;top:778.5px;font-size:15.5px;line-height:19px;color:#1a1a1a;letter-spacing:-1.05px;">8.80</span>
<div style="left:433.5px;top:748px;width:280px;height:53px;background:#f0f0f0;"></div>
<div style="left:477px;top:748px;width:236.5px;height:2px;background:#6b6b6b;"></div>
<div style="left:711.5px;top:748px;width:2px;height:51px;background:#6b6b6b;"></div>
<div style="left:433.5px;top:799px;width:125px;height:2px;background:#6b6b6b;"></div>
<div style="left:433.5px;top:750px;width:1.5px;height:50px;background:#fff;"></div>
<div style="left:437.5px;top:752px;width:112.5px;height:21.5px;background:#f0f0f0;border:1px solid #e3e3e3;"></div>
<div style="left:437.5px;top:774.5px;width:112.5px;height:22px;background:#f0f0f0;border:1px solid #e3e3e3;"></div>
<div style="left:551px;top:752px;width:160px;height:21.5px;background:#f7f7f7;border:1px solid #e8e8e8;"></div>
<div style="left:551px;top:775px;width:160px;height:21.5px;background:#fff;"></div>
<span class="t" style="left:442.0px;top:756.0px;font-size:15.5px;line-height:19px;color:#1a1a1a;letter-spacing:-0.24px;">Start Time</span>
<span class="t" style="left:442.0px;top:778.5px;font-size:15.5px;line-height:19px;color:#1a1a1a;letter-spacing:-0.29px;">Sampling Time</span>
<span class="t" style="left:566.0px;top:756.0px;font-size:15.5px;line-height:19px;color:#1a1a1a;letter-spacing:-0.33px;">2014-06-13  14:10:07</span>
<span class="t" style="left:665.0px;top:778.5px;font-size:15.5px;line-height:19px;color:#1a1a1a;letter-spacing:-0.53px;">33 sec</span>
<div style="left:8px;top:802px;width:724px;height:2.5px;background:#6b6b6b;"></div>
<div style="left:8px;top:804.5px;width:724px;height:1px;background:#fff;"></div>
<div style="left:12px;top:837.2px;width:716px;height:2px;background:#8e8e8e;"></div>
<div style="left:12px;top:839.2px;width:716px;height:1px;background:#fff;"></div>
<div style="left:13.5px;top:813px;width:108.5px;height:24.5px;background:linear-gradient(180deg,#f4f4f4,#ebebeb 50%,#dcdcdc 55%,#d2d2d2);border:1px solid #8e8e8e;border-bottom:none;border-radius:2px 2px 0 0;"></div>
<span class="t" style="left:20.2px;top:813.9px;font-size:17.5px;line-height:21px;color:#1a1a1a;transform:scaleX(0.778);transform-origin:0 50%;">Summary Stats</span>
<div style="left:183px;top:813px;width:119.5px;height:24.5px;background:linear-gradient(180deg,#f4f4f4,#ebebeb 50%,#dcdcdc 55%,#d2d2d2);border:1px solid #8e8e8e;border-bottom:none;border-radius:2px 2px 0 0;"></div>
<span class="t" style="left:188.8px;top:813.9px;font-size:17.5px;line-height:21px;color:#1a1a1a;transform:scaleX(0.801);transform-origin:0 50%;">Cumulative Stats</span>
<div style="left:304.5px;top:813px;width:122.5px;height:24.5px;background:linear-gradient(180deg,#f4f4f4,#ebebeb 50%,#dcdcdc 55%,#d2d2d2);border:1px solid #8e8e8e;border-bottom:none;border-radius:2px 2px 0 0;"></div>
<span class="t" style="left:309.8px;top:813.9px;font-size:17.5px;line-height:21px;color:#1a1a1a;transform:scaleX(0.786);transform-origin:0 50%;">Context Summary</span>
<div style="left:122px;top:809.5px;width:60.5px;height:29.7px;background:#fff;border:1px solid #8e8e8e;border-bottom:none;border-radius:2px 2px 0 0;"></div>
<span class="t" style="left:132.1px;top:811.0px;font-size:17.5px;line-height:21px;color:#1a1a1a;transform:scaleX(0.735);transform-origin:0 50%;">Filters</span>
<div style="left:15.5px;top:845.5px;width:712px;height:207px;background:#fff;"></div>
<div style="left:15.5px;top:845.5px;width:712px;height:23.5px;background:#f0f0f0;"></div>
<div style="left:15.5px;top:1007.5px;width:712px;height:22.5px;background:#7f7f7f;"></div>
<div style="left:15.5px;top:868.5px;width:712px;height:1px;background:#dedede;"></div>
<div style="left:15.5px;top:891.5px;width:712px;height:1px;background:#dedede;"></div>
<div style="left:15.5px;top:914.5px;width:712px;height:1px;background:#dedede;"></div>
<div style="left:15.5px;top:937.5px;width:712px;height:1px;background:#dedede;"></div>
<div style="left:15.5px;top:960.5px;width:712px;height:1px;background:#dedede;"></div>
<div style="left:15.5px;top:983.5px;width:712px;height:1px;background:#dedede;"></div>
<div style="left:15.5px;top:1006.5px;width:712px;height:1px;background:#dedede;"></div>
<div style="left:229.5px;top:846px;width:1px;height:184px;background:#dcdcdc;"></div>
<div style="left:332.5px;top:846px;width:1px;height:184px;background:#dcdcdc;"></div>
<div style="left:435px;top:846px;width:1px;height:184px;background:#dcdcdc;"></div>
<div style="left:537.5px;top:846px;width:1px;height:184px;background:#dcdcdc;"></div>
<div style="left:640.5px;top:846px;width:1px;height:184px;background:#dcdcdc;"></div>
<div style="left:15.5px;top:845.5px;width:1px;height:185px;background:#e4e4e4;"></div>
<div style="left:15.5px;top:845.5px;width:712px;height:1px;background:#e4e4e4;"></div>
<span class="t" style="left:21.0px;top:850.8px;font-size:15px;line-height:18px;color:#1a1a1a;letter-spacing:0.07px;">Filter</span>
<span class="t" style="left:288.5px;top:850.8px;font-size:15px;line-height:18px;color:#1a1a1a;letter-spacing:-0.01px;">Count</span>
<span class="t" style="left:373.6px;top:850.8px;font-size:15px;line-height:18px;color:#1a1a1a;letter-spacing:-0.02px;">Count %</span>
<span class="t" style="left:464.9px;top:850.8px;font-size:15px;line-height:18px;color:#1a1a1a;letter-spacing:0.15px;">Volume %</span>
<span class="t" style="left:604.1px;top:850.8px;font-size:15px;line-height:18px;color:#1a1a1a;letter-spacing:-0.87px;">P/ML</span>
<span class="t" style="left:21.0px;top:873.8px;font-size:15px;line-height:18px;color:#1a1a1a;letter-spacing:-0.63px;">2-5um</span>
<span class="t" style="left:305.4px;top:873.8px;font-size:15px;line-height:18px;color:#1a1a1a;letter-spacing:-0.94px;">142</span>
<span class="t" style="left:404.0px;top:873.8px;font-size:15px;line-height:18px;color:#1a1a1a;letter-spacing:-0.73px;">9.65</span>
<span class="t" style="left:498.8px;top:873.8px;font-size:15px;line-height:18px;color:#1a1a1a;letter-spacing:-0.71px;">19.46</span>
<span class="t" style="left:605.6px;top:873.8px;font-size:15px;line-height:18px;color:#1a1a1a;letter-spacing:-0.84px;">7804</span>
<span class="t" style="left:21.0px;top:896.8px;font-size:15px;line-height:18px;color:#1a1a1a;letter-spacing:-0.57px;">5-10um</span>
<span class="t" style="left:313.1px;top:896.8px;font-size:15px;line-height:18px;color:#1a1a1a;letter-spacing:-1.25px;">78</span>
<span class="t" style="left:404.0px;top:896.8px;font-size:15px;line-height:18px;color:#1a1a1a;letter-spacing:-0.73px;">5.30</span>
<span class="t" style="left:498.8px;top:896.8px;font-size:15px;line-height:18px;color:#1a1a1a;letter-spacing:-0.71px;">71.36</span>
<span class="t" style="left:605.6px;top:896.8px;font-size:15px;line-height:18px;color:#1a1a1a;letter-spacing:-0.84px;">4287</span>
<span class="t" style="left:21.0px;top:919.8px;font-size:15px;line-height:18px;color:#1a1a1a;letter-spacing:-0.45px;">10-25um</span>
<span class="t" style="left:320.2px;top:919.8px;font-size:15px;line-height:18px;color:#1a1a1a;">0</span>
<span class="t" style="left:404.0px;top:919.8px;font-size:15px;line-height:18px;color:#1a1a1a;letter-spacing:-0.73px;">0.00</span>
<span class="t" style="left:506.5px;top:919.8px;font-size:15px;line-height:18px;color:#1a1a1a;letter-spacing:-0.73px;">0.00</span>
<span class="t" style="left:609.5px;top:919.8px;font-size:15px;line-height:18px;color:#1a1a1a;letter-spacing:-0.73px;">0.00</span>
<span class="t" style="left:21.0px;top:942.8px;font-size:15px;line-height:18px;color:#1a1a1a;letter-spacing:-0.45px;">25-50um</span>
<span class="t" style="left:320.2px;top:942.8px;font-size:15px;line-height:18px;color:#1a1a1a;">0</span>
<span class="t" style="left:404.0px;top:942.8px;font-size:15px;line-height:18px;color:#1a1a1a;letter-spacing:-0.73px;">0.00</span>
<span class="t" style="left:506.5px;top:942.8px;font-size:15px;line-height:18px;color:#1a1a1a;letter-spacing:-0.73px;">0.00</span>
<span class="t" style="left:609.5px;top:942.8px;font-size:15px;line-height:18px;color:#1a1a1a;letter-spacing:-0.73px;">0.00</span>
<span class="t" style="left:21.0px;top:965.8px;font-size:15px;line-height:18px;color:#1a1a1a;letter-spacing:-0.51px;">50-100um</span>
<span class="t" style="left:320.2px;top:965.8px;font-size:15px;line-height:18px;color:#1a1a1a;">0</span>
<span class="t" style="left:404.0px;top:965.8px;font-size:15px;line-height:18px;color:#1a1a1a;letter-spacing:-0.73px;">0.00</span>
<span class="t" style="left:506.5px;top:965.8px;font-size:15px;line-height:18px;color:#1a1a1a;letter-spacing:-0.73px;">0.00</span>
<span class="t" style="left:609.5px;top:965.8px;font-size:15px;line-height:18px;color:#1a1a1a;letter-spacing:-0.73px;">0.00</span>
<span class="t" style="left:21.0px;top:988.8px;font-size:15px;line-height:18px;color:#1a1a1a;letter-spacing:-0.12px;">&gt;100um</span>
<span class="t" style="left:320.2px;top:988.8px;font-size:15px;line-height:18px;color:#1a1a1a;">0</span>
<span class="t" style="left:404.0px;top:988.8px;font-size:15px;line-height:18px;color:#1a1a1a;letter-spacing:-0.73px;">0.00</span>
<span class="t" style="left:506.5px;top:988.8px;font-size:15px;line-height:18px;color:#1a1a1a;letter-spacing:-0.73px;">0.00</span>
<span class="t" style="left:609.5px;top:988.8px;font-size:15px;line-height:18px;color:#1a1a1a;letter-spacing:-0.73px;">0.00</span>
<span class="t" style="left:21.0px;top:1011.8px;font-size:15px;line-height:18px;color:#f4f4f4;letter-spacing:0.07px;">Silicone</span>
<span class="t" style="left:297.6px;top:1011.8px;font-size:15px;line-height:18px;color:#f4f4f4;letter-spacing:-0.84px;">1472</span>
<span class="t" style="left:388.6px;top:1011.8px;font-size:15px;line-height:18px;color:#f4f4f4;letter-spacing:-0.69px;">100.00</span>
<span class="t" style="left:491.1px;top:1011.8px;font-size:15px;line-height:18px;color:#f4f4f4;letter-spacing:-0.69px;">100.00</span>
<span class="t" style="left:597.9px;top:1011.8px;font-size:15px;line-height:18px;color:#f4f4f4;letter-spacing:-0.78px;">80898</span>
<div style="left:690px;top:846px;width:35.5px;height:184px;overflow:hidden;background:transparent;"><span class="t" style="right:0;top:5px;font-size:15.5px;line-height:18px;color:#1a1a1a;margin-right:-22px">PPUI</span><span class="t" style="right:0;top:28px;font-size:15.5px;line-height:18px;color:#1a1a1a;margin-right:-15px">0.78</span><span class="t" style="right:0;top:51px;font-size:15.5px;line-height:18px;color:#1a1a1a;margin-right:-15px">0.65</span><span class="t" style="right:0;top:74px;font-size:15.5px;line-height:18px;color:#1a1a1a;margin-right:-15px">0.00</span><span class="t" style="right:0;top:97px;font-size:15.5px;line-height:18px;color:#1a1a1a;margin-right:-15px">0.00</span><span class="t" style="right:0;top:120px;font-size:15.5px;line-height:18px;color:#1a1a1a;margin-right:-15px">0.00</span><span class="t" style="right:0;top:143px;font-size:15.5px;line-height:18px;color:#1a1a1a;margin-right:-15px">0.00</span><span class="t" style="right:0;top:166px;font-size:15.5px;line-height:18px;color:#f4f4f4;margin-right:-15px">0.91</span></div>
<div style="left:642px;top:841.5px;width:86px;height:2.5px;background:#6b6b6b;"></div>
<div style="left:727px;top:880px;width:2.5px;height:172px;background:#6b6b6b;"></div>
<div style="left:15.5px;top:1030px;width:712px;height:21.5px;background:#f0f0f0;"></div>
<svg style="left:23px;top:1035px" width="8" height="11" viewBox="0 0 8 11"><path d="M6.5 1 L1.5 5.5 L6.5 10 Z" fill="#222"/></svg>
<svg style="left:711px;top:1035px" width="8" height="11" viewBox="0 0 8 11"><path d="M1.5 1 L6.5 5.5 L1.5 10 Z" fill="#555"/></svg>
<div style="left:39.5px;top:1031px;width:329.5px;height:19.5px;border:1px solid #979797;border-radius:3px;background:linear-gradient(180deg,#f6f6f6,#e9e9e9 48%,#d6d6d6 52%,#dcdcdc);"></div>
<div style="left:198.5px;top:1036.5px;width:1.3px;height:8px;background:#555;"></div>
<div style="left:201.8px;top:1036.5px;width:1.3px;height:8px;background:#555;"></div>
<div style="left:205.1px;top:1036.5px;width:1.3px;height:8px;background:#555;"></div>
<div style="left:11px;top:1053px;width:718px;height:2.2px;background:#6b6b6b;"></div>
<div style="left:11px;top:1055.2px;width:718px;height:1px;background:#fff;"></div>
<div style="left:8px;top:1085.8px;width:724px;height:2.4px;background:#6b6b6b;"></div>
<div style="left:8px;top:1088.2px;width:724px;height:2.5px;background:#fff;"></div>
<div style="left:8px;top:1090.6px;width:724px;height:27.6px;background:#f6ea16;"></div>
<div style="left:8px;top:1118px;width:724px;height:1.8px;background:#666;"></div>
<span class="t" style="left:14.5px;top:1093.3px;font-size:15.8px;line-height:19px;color:#1a1a1a;transform:scaleX(0.904);transform-origin:0 50%;">Objective 10X,  Flowcell FC80-7FV,  AutoImage</span>
<div style="left:762.5px;top:73.5px;width:28.5px;height:28.5px;border:1.5px solid #a9a9a9;border-radius:4px;background:#f0f0f0;box-shadow:inset 0 0 0 1px rgba(255,255,255,.7);"></div>
<div style="left:800px;top:73.5px;width:28.5px;height:28.5px;border:1.5px solid #a9a9a9;border-radius:4px;background:#f0f0f0;box-shadow:inset 0 0 0 1px rgba(255,255,255,.7);"></div>
<div style="left:939.5px;top:73.5px;width:29px;height:28.5px;border:1.5px solid #6f6f6f;border-radius:4px;background:linear-gradient(180deg,#f2f2f2,#e9e9e9 50%,#d9d9d9 52%,#d0d0d0);box-shadow:inset 0 0 0 1px rgba(255,255,255,.7);"></div>
<div style="left:977px;top:73.5px;width:29.5px;height:28.5px;border:1.5px solid #6f6f6f;border-radius:4px;background:linear-gradient(180deg,#f2f2f2,#e9e9e9 50%,#d9d9d9 52%,#d0d0d0);box-shadow:inset 0 0 0 1px rgba(255,255,255,.7);"></div>
<svg style="left:750px;top:63px" width="300" height="50" viewBox="750 63 300 50"><path d="M789 83.7 L780.5 83.7 L780.5 78.5 L771.5 88 L780.5 97.5 L780.5 92.3 L789 92.3Z" fill="#4cb673"/><rect x="769.05" y="79" width="2.5" height="18" fill="#4cb673"/><path d="M824.5 83.7 L816 83.7 L816 78.5 L807 88 L816 97.5 L816 92.3 L824.5 92.3Z" fill="#4cb673"/><path d="M945.5 83.7 L954 83.7 L954 78.5 L963 88 L954 97.5 L954 92.3 L945.5 92.3Z" fill="#0b8f3e"/><path d="M982 83.7 L990.5 83.7 L990.5 78.5 L999.5 88 L990.5 97.5 L990.5 92.3 L982 92.3Z" fill="#0b8f3e"/><rect x="1000.75" y="79" width="2.5" height="18" fill="#0b8f3e"/></svg>
<div style="left:837px;top:75px;width:95px;height:25px;background:#fff;border:1px solid #e6e6e6;"></div>
<span class="t" style="left:866.5px;top:78.8px;font-size:15px;line-height:18px;color:#111;letter-spacing:-0.61px;">1 of 3</span>
<div style="left:1019px;top:72.5px;width:31.5px;height:30.5px;background:#f0f0f0;border:1px solid;border-color:#fff #6b6b6b #6b6b6b #fff;border-right-width:2px;border-bottom-width:2px;"></div>
<span class="t" style="left:1025.2px;top:77.5px;font-size:16.5px;line-height:20px;color:#1a1a1a;transform:scaleX(0.913);transform-origin:0 50%;">Z+</span>
<div style="left:1057px;top:72.5px;width:31px;height:30.5px;background:#f0f0f0;border:1px solid;border-color:#fff #6b6b6b #6b6b6b #fff;border-right-width:2px;border-bottom-width:2px;"></div>
<span class="t" style="left:1064.5px;top:77.5px;font-size:16.5px;line-height:20px;color:#1a1a1a;transform:scaleX(0.963);transform-origin:0 50%;">Z-</span>
<div style="left:1094px;top:72.5px;width:32.5px;height:30.5px;background:#f0f0f0;border:1px solid;border-color:#fff #6b6b6b #6b6b6b #fff;border-right-width:2px;border-bottom-width:2px;"></div>
<span class="t" style="left:1101.2px;top:77.5px;font-size:16.5px;line-height:20px;color:#8a8a8a;transform:scaleX(0.883);transform-origin:0 50%;">Z1</span>
<div style="left:1139px;top:73px;width:29px;height:29px;border:1.5px solid #6f6f6f;border-radius:4px;background:linear-gradient(180deg,#f2f2f2,#e9e9e9 50%,#d9d9d9 52%,#d0d0d0);box-shadow:inset 0 0 0 1px rgba(255,255,255,.7);"></div>
<svg style="left:1139px;top:73px" width="29" height="29" viewBox="0 0 29 29"><path d="M10 5 L19 5 L19 13 L24.5 13 L14.5 24 L4.5 13 L10 13 Z" fill="#27277f"/></svg>
<div style="left:1180.5px;top:71.5px;width:135.5px;height:32px;background:#f0f0f0;border:1px solid;border-color:#fff #6b6b6b #6b6b6b #fff;border-right-width:2px;border-bottom-width:2px;"></div>
<span class="t" style="left:1199.8px;top:78.0px;font-size:16px;line-height:19px;color:#1a1a1a;transform:scaleX(0.899);transform-origin:0 50%;">Show Selected</span>
<div style="left:750px;top:110.8px;width:725px;height:2px;background:#c9c9c9;"></div>
<div style="left:750px;top:112.7px;width:725px;height:975.8px;background:#000;"></div>
<div class="p" style="left:763px;top:140px;width:20.2px;height:20px;background-image:radial-gradient(circle closest-side at 50% 47%,#727272 0,#727272 12%,#a3a3a3 52%)"></div>
<div class="h" style="left:763.1px;top:164.2px">#</div>
<div class="p" style="left:796.9px;top:140px;width:21.2px;height:21.2px;background-image:radial-gradient(circle closest-side at 47% 46%,#5e5e5e 0,#5e5e5e 8%,#a3a3a3 56%)"></div>
<div class="h" style="left:797.5px;top:165.4px">#</div>
<div class="p" style="left:831.8px;top:140px;width:21.2px;height:20px;background-image:radial-gradient(circle closest-side at 48% 42%,#545454 0,#545454 18%,#a3a3a3 66%)"></div>
<div class="h" style="left:832.4px;top:164.2px">#</div>
<div class="p" style="left:866.5px;top:140px;width:32.4px;height:31.9px;background-image:radial-gradient(circle closest-side at 55% 52%,#fff 0,#f4f4f4 14%,#5c5c5c 33%,#6e6e6e 46%,#b0b0b0 64%,#a3a3a3 88%)"></div>
<div class="h" style="left:872.7px;top:176.1px">#</div>
<div class="p" style="left:912.4px;top:140px;width:21.5px;height:21.2px;background-image:radial-gradient(circle closest-side at 51% 43%,#545454 0,#545454 18%,#a3a3a3 58%)"></div>
<div class="h" style="left:913.1px;top:165.4px">#</div>
<div class="p" style="left:947.1px;top:140px;width:20.5px;height:21.2px;background-image:radial-gradient(circle closest-side at 46% 43%,#5e5e5e 0,#5e5e5e 18%,#a3a3a3 58%)"></div>
<div class="h" style="left:947.4px;top:165.4px">#</div>
<div class="p" style="left:981px;top:140px;width:20.5px;height:20px;background-image:radial-gradient(circle closest-side at 53% 44%,#5e5e5e 0,#5e5e5e 18%,#a3a3a3 58%)"></div>
<div class="h" style="left:981.2px;top:164.2px">#</div>
<div class="p" style="left:1015px;top:140px;width:20.2px;height:21.2px;background-image:radial-gradient(circle closest-side at 51% 46%,#545454 0,#545454 12%,#a3a3a3 60%)"></div>
<div class="h" style="left:1015.1px;top:165.4px">#</div>
<div class="p" style="left:1048.6px;top:140px;width:20px;height:20px;background-image:radial-gradient(circle closest-side at 49% 47%,#545454 0,#545454 18%,#a3a3a3 66%)"></div>
<div class="h" style="left:1048.6px;top:164.2px">#</div>
<div class="p" style="left:1082.3px;top:140px;width:19.7px;height:20px;background-image:radial-gradient(circle closest-side at 48% 43%,#686868 0,#686868 8%,#a3a3a3 48%)"></div>
<div class="h" style="left:1082.1px;top:164.2px">#</div>
<div class="p" style="left:1116.2px;top:140px;width:20.2px;height:20px;background-image:radial-gradient(circle closest-side at 51% 42%,#545454 0,#545454 12%,#a3a3a3 60%)"></div>
<div class="h" style="left:1116.3px;top:164.2px">#</div>
<div class="p" style="left:1149.9px;top:140px;width:18.7px;height:20px;background-image:radial-gradient(circle closest-side at 46% 41%,#545454 0,#545454 8%,#a3a3a3 48%)"></div>
<div class="h" style="left:1149.2px;top:164.2px">#</div>
<div class="p" style="left:1181.9px;top:140px;width:20.2px;height:21.5px;background-image:radial-gradient(circle closest-side at 54% 42%,#727272 0,#727272 18%,#a3a3a3 66%)"></div>
<div class="h" style="left:1182.0px;top:165.7px">#</div>
<div class="p" style="left:1215.8px;top:140px;width:24px;height:22.7px;background-image:radial-gradient(circle closest-side at 49% 47%,#5e5e5e 0,#5e5e5e 18%,#a3a3a3 66%)"></div>
<div class="h" style="left:1217.8px;top:166.9px">#</div>
<div class="p" style="left:1253px;top:140px;width:21.7px;height:22.7px;background-image:radial-gradient(circle closest-side at 48% 44%,#545454 0,#545454 12%,#a3a3a3 52%)"></div>
<div class="h" style="left:1253.8px;top:166.9px">#</div>
<div class="p" style="left:1288.1px;top:140px;width:21.5px;height:21.5px;background-image:radial-gradient(circle closest-side at 46% 48%,#545454 0,#545454 8%,#a3a3a3 56%)"></div>
<div class="h" style="left:1288.8px;top:165.7px">#</div>
<div class="p" style="left:1323.1px;top:140px;width:19px;height:20px;background-image:radial-gradient(circle closest-side at 53% 43%,#5e5e5e 0,#5e5e5e 12%,#a3a3a3 52%)"></div>
<div class="h" style="left:1322.6px;top:164.2px">#</div>
<div class="p" style="left:1355.5px;top:140px;width:21.5px;height:20px;background-image:radial-gradient(circle closest-side at 55% 49%,#727272 0,#727272 18%,#a3a3a3 66%)"></div>
<div class="h" style="left:1356.2px;top:164.2px">#</div>
<div class="p" style="left:1390.2px;top:140px;width:21.7px;height:20px;background-image:radial-gradient(circle closest-side at 46% 45%,#5e5e5e 0,#5e5e5e 8%,#a3a3a3 56%)"></div>
<div class="h" style="left:1391.0px;top:164.2px">#</div>
<div class="p" style="left:1425.1px;top:140px;width:24.5px;height:24px;background-image:radial-gradient(circle closest-side at 54% 51%,#686868 0,#686868 8%,#a3a3a3 48%)"></div>
<div class="h" style="left:1427.3px;top:168.2px">#</div>
<div class="p" style="left:763px;top:199.1px;width:19px;height:20px;background-image:radial-gradient(circle closest-side at 47% 51%,#545454 0,#545454 8%,#a3a3a3 48%)"></div>
<div class="h" style="left:762.5px;top:223.3px">#</div>
<div class="p" style="left:795.4px;top:199.1px;width:22.7px;height:22.7px;background-image:radial-gradient(circle closest-side at 47% 44%,#686868 0,#686868 12%,#a3a3a3 60%)"></div>
<div class="h" style="left:796.8px;top:226.0px">#</div>
<div class="p" style="left:831.6px;top:199.1px;width:23.2px;height:22.7px;background-image:radial-gradient(circle closest-side at 46% 42%,#5e5e5e 0,#5e5e5e 8%,#a3a3a3 56%)"></div>
<div class="h" style="left:833.2px;top:226.0px">#</div>
<div class="p" style="left:867.8px;top:199.1px;width:24.5px;height:24.2px;background-image:radial-gradient(circle closest-side at 49% 46%,#727272 0,#727272 18%,#a3a3a3 58%)"></div>
<div class="h" style="left:870.0px;top:227.5px">#</div>
<div class="p" style="left:905.2px;top:199.1px;width:20.7px;height:20.2px;background-image:radial-gradient(circle closest-side at 54% 43%,#5e5e5e 0,#5e5e5e 12%,#a3a3a3 52%)"></div>
<div class="h" style="left:905.6px;top:223.5px">#</div>
<div class="p" style="left:939.1px;top:199.1px;width:18.7px;height:20px;background-image:radial-gradient(circle closest-side at 53% 43%,#5e5e5e 0,#5e5e5e 8%,#a3a3a3 48%)"></div>
<div class="h" style="left:938.5px;top:223.3px">#</div>
<div class="p" style="left:971.3px;top:199.1px;width:22.5px;height:22.7px;background-image:radial-gradient(circle closest-side at 52% 45%,#727272 0,#727272 18%,#a3a3a3 58%)"></div>
<div class="h" style="left:972.5px;top:226.0px">#</div>
<div class="p" style="left:1007px;top:199.1px;width:22px;height:21.5px;background-image:radial-gradient(circle closest-side at 49% 42%,#545454 0,#545454 18%,#a3a3a3 66%)"></div>
<div class="h" style="left:1008.0px;top:224.8px">#</div>
<div class="p" style="left:1041.9px;top:199.1px;width:20px;height:21.5px;background-image:radial-gradient(circle closest-side at 47% 48%,#686868 0,#686868 12%,#a3a3a3 60%)"></div>
<div class="h" style="left:1041.9px;top:224.8px">#</div>
<div class="p" style="left:1075.6px;top:199.1px;width:24.2px;height:22.7px;background-image:radial-gradient(circle closest-side at 48% 43%,#545454 0,#545454 8%,#a3a3a3 48%)"></div>
<div class="h" style="left:1077.7px;top:226.0px">#</div>
<div class="p" style="left:1113px;top:199.1px;width:19.5px;height:18.7px;background-image:radial-gradient(circle closest-side at 50% 48%,#545454 0,#545454 12%,#a3a3a3 52%)"></div>
<div class="h" style="left:1112.8px;top:222.0px">#</div>
<div class="p" style="left:1146.2px;top:199.1px;width:26.7px;height:26.7px;background-image:radial-gradient(circle closest-side at 54% 47%,#c8c8c8 0,#b4b4b4 12%,#777 30%,#808080 42%,#ababab 62%,#a3a3a3 85%)"></div>
<div class="h" style="left:1149.5px;top:230.0px">#</div>
<div class="p" style="left:1186.1px;top:199.1px;width:31.2px;height:32.2px;background-image:radial-gradient(circle closest-side at 45% 48%,#fff 0,#f4f4f4 14%,#5c5c5c 33%,#6e6e6e 46%,#b0b0b0 64%,#a3a3a3 88%)"></div>
<div class="h" style="left:1191.7px;top:235.5px">#</div>
<div class="p" style="left:1230.5px;top:199.1px;width:20.2px;height:20px;background-image:radial-gradient(circle closest-side at 49% 42%,#5e5e5e 0,#5e5e5e 12%,#a3a3a3 60%)"></div>
<div class="h" style="left:1230.6px;top:223.3px">#</div>
<div class="p" style="left:1263.9px;top:199.1px;width:22px;height:20px;background-image:radial-gradient(circle closest-side at 50% 51%,#545454 0,#545454 12%,#a3a3a3 52%)"></div>
<div class="h" style="left:1264.9px;top:223.3px">#</div>
<div class="p" style="left:1298.9px;top:199.1px;width:23.2px;height:22.7px;background-image:radial-gradient(circle closest-side at 54% 51%,#5e5e5e 0,#5e5e5e 18%,#a3a3a3 58%)"></div>
<div class="h" style="left:1300.5px;top:226.0px">#</div>
<div class="p" style="left:1335px;top:199.1px;width:20.5px;height:20px;background-image:radial-gradient(circle closest-side at 54% 46%,#686868 0,#686868 18%,#a3a3a3 66%)"></div>
<div class="h" style="left:1335.2px;top:223.3px">#</div>
<div class="p" style="left:1369px;top:199.1px;width:23px;height:22.7px;background-image:radial-gradient(circle closest-side at 55% 41%,#545454 0,#545454 12%,#a3a3a3 52%)"></div>
<div class="h" style="left:1370.5px;top:226.0px">#</div>
<div class="p" style="left:1405.2px;top:199.1px;width:20px;height:21.5px;background-image:radial-gradient(circle closest-side at 52% 44%,#545454 0,#545454 8%,#a3a3a3 56%)"></div>
<div class="h" style="left:1405.2px;top:224.8px">#</div>
<div class="p" style="left:1438.8px;top:199.1px;width:20px;height:18.7px;background-image:radial-gradient(circle closest-side at 50% 48%,#5e5e5e 0,#5e5e5e 12%,#a3a3a3 60%)"></div>
<div class="h" style="left:1438.8px;top:222.0px">#</div>
<div class="p" style="left:763px;top:259.2px;width:21.5px;height:20.7px;background-image:radial-gradient(circle closest-side at 46% 46%,#545454 0,#545454 12%,#a3a3a3 52%)"></div>
<div class="h" style="left:763.8px;top:284.1px">#</div>
<div class="p" style="left:797.9px;top:259.2px;width:20.2px;height:20.7px;background-image:radial-gradient(circle closest-side at 54% 47%,#727272 0,#727272 12%,#a3a3a3 52%)"></div>
<div class="h" style="left:798.0px;top:284.1px">#</div>
<div class="p" style="left:831.6px;top:259.2px;width:19.2px;height:18.2px;background-image:radial-gradient(circle closest-side at 51% 45%,#e2e2e2 0,#e2e2e2 14%,#a3a3a3 58%)"></div>
<div class="h" style="left:831.2px;top:281.6px">#</div>
<div class="p" style="left:864px;top:259.2px;width:20.2px;height:19.7px;background-image:radial-gradient(circle closest-side at 54% 48%,#727272 0,#727272 18%,#a3a3a3 66%)"></div>
<div class="h" style="left:864.1px;top:283.1px">#</div>
<div class="p" style="left:897.7px;top:259.2px;width:16.2px;height:19.7px;background-image:radial-gradient(circle closest-side at 49% 49%,#545454 0,#545454 18%,#a3a3a3 58%)"></div>
<div class="h" style="left:895.8px;top:283.1px">#</div>
<div class="p" style="left:927.1px;top:259.2px;width:22.5px;height:20.7px;background-image:radial-gradient(circle closest-side at 48% 42%,#545454 0,#545454 8%,#a3a3a3 48%)"></div>
<div class="h" style="left:928.4px;top:284.1px">#</div>
<div class="p" style="left:963.3px;top:259.2px;width:20.5px;height:20.7px;background-image:radial-gradient(circle closest-side at 50% 47%,#727272 0,#727272 12%,#a3a3a3 52%)"></div>
<div class="h" style="left:963.5px;top:284.1px">#</div>
<div class="p" style="left:997.5px;top:259.2px;width:20px;height:20.7px;background-image:radial-gradient(circle closest-side at 49% 42%,#5e5e5e 0,#5e5e5e 18%,#a3a3a3 58%)"></div>
<div class="h" style="left:997.5px;top:284.1px">#</div>
<div class="p" style="left:1031.2px;top:259.2px;width:23.7px;height:22.5px;background-image:radial-gradient(circle closest-side at 53% 44%,#727272 0,#727272 12%,#a3a3a3 52%)"></div>
<div class="h" style="left:1033.0px;top:285.9px">#</div>
<div class="p" style="left:1068.6px;top:259.2px;width:23px;height:22.5px;background-image:radial-gradient(circle closest-side at 48% 48%,#5e5e5e 0,#5e5e5e 18%,#a3a3a3 66%)"></div>
<div class="h" style="left:1070.1px;top:285.9px">#</div>
<div class="p" style="left:1104.8px;top:259.2px;width:20px;height:19.5px;background-image:radial-gradient(circle closest-side at 53% 49%,#5e5e5e 0,#5e5e5e 8%,#a3a3a3 56%)"></div>
<div class="h" style="left:1104.8px;top:282.9px">#</div>
<div class="p" style="left:1139.2px;top:259.2px;width:20px;height:19.5px;background-image:radial-gradient(circle closest-side at 47% 50%,#5e5e5e 0,#5e5e5e 8%,#a3a3a3 48%)"></div>
<div class="h" style="left:1139.2px;top:282.9px">#</div>
<div class="p" style="left:1172.6px;top:259.2px;width:20.2px;height:19.5px;background-image:radial-gradient(circle closest-side at 50% 49%,#545454 0,#545454 18%,#a3a3a3 58%)"></div>
<div class="h" style="left:1172.7px;top:282.9px">#</div>
<div class="p" style="left:1206.1px;top:259.2px;width:20.2px;height:19.5px;background-image:radial-gradient(circle closest-side at 55% 44%,#5e5e5e 0,#5e5e5e 8%,#a3a3a3 56%)"></div>
<div class="h" style="left:1206.2px;top:282.9px">#</div>
<div class="p" style="left:1240px;top:259.2px;width:19px;height:18.2px;background-image:radial-gradient(circle closest-side at 50% 50%,#727272 0,#727272 12%,#a3a3a3 60%)"></div>
<div class="h" style="left:1239.5px;top:281.6px">#</div>
<div class="p" style="left:1272.2px;top:259.2px;width:20px;height:18.2px;background-image:radial-gradient(circle closest-side at 52% 48%,#727272 0,#727272 12%,#a3a3a3 52%)"></div>
<div class="h" style="left:1272.2px;top:281.6px">#</div>
<div class="p" style="left:1305.9px;top:259.2px;width:24px;height:24.5px;background-image:radial-gradient(circle closest-side at 53% 44%,#545454 0,#545454 18%,#a3a3a3 66%)"></div>
<div class="h" style="left:1307.9px;top:287.9px">#</div>
<div class="p" style="left:1343.3px;top:259.2px;width:22.7px;height:22px;background-image:radial-gradient(circle closest-side at 51% 44%,#545454 0,#545454 18%,#a3a3a3 58%)"></div>
<div class="h" style="left:1344.6px;top:285.4px">#</div>
<div class="p" style="left:1379.5px;top:259.2px;width:19px;height:19.5px;background-image:radial-gradient(circle closest-side at 49% 43%,#686868 0,#686868 8%,#a3a3a3 48%)"></div>
<div class="h" style="left:1379.0px;top:282.9px">#</div>
<div class="p" style="left:1411.9px;top:259.2px;width:21.7px;height:19.5px;background-image:radial-gradient(circle closest-side at 53% 51%,#545454 0,#545454 12%,#a3a3a3 52%)"></div>
<div class="h" style="left:1412.8px;top:282.9px">#</div>
<div class="p" style="left:763px;top:311.6px;width:20.2px;height:18.2px;background-image:radial-gradient(circle closest-side at 51% 48%,#686868 0,#686868 8%,#a3a3a3 48%)"></div>
<div class="h" style="left:763.1px;top:334.0px">#</div>
<div class="p" style="left:796.9px;top:311.6px;width:18.7px;height:19.5px;background-image:radial-gradient(circle closest-side at 47% 46%,#5e5e5e 0,#5e5e5e 18%,#a3a3a3 58%)"></div>
<div class="h" style="left:796.2px;top:335.3px">#</div>
<div class="p" style="left:829.1px;top:311.6px;width:22.7px;height:22px;background-image:radial-gradient(circle closest-side at 53% 46%,#545454 0,#545454 8%,#a3a3a3 48%)"></div>
<div class="h" style="left:830.5px;top:337.8px">#</div>
<div class="p" style="left:865.3px;top:311.6px;width:20.2px;height:20.2px;background-image:radial-gradient(circle closest-side at 48% 44%,#5e5e5e 0,#5e5e5e 12%,#a3a3a3 52%)"></div>
<div class="h" style="left:865.4px;top:336.0px">#</div>
<div class="p" style="left:898.9px;top:311.6px;width:20px;height:19.5px;background-image:radial-gradient(circle closest-side at 46% 50%,#727272 0,#727272 8%,#a3a3a3 56%)"></div>
<div class="h" style="left:898.9px;top:335.3px">#</div>
<div class="p" style="left:932.6px;top:311.6px;width:18.5px;height:18.2px;background-image:radial-gradient(circle closest-side at 50% 47%,#545454 0,#545454 12%,#a3a3a3 60%)"></div>
<div class="h" style="left:931.9px;top:334.0px">#</div>
<div class="p" style="left:964.6px;top:311.6px;width:21.2px;height:19.5px;background-image:radial-gradient(circle closest-side at 50% 48%,#5e5e5e 0,#5e5e5e 8%,#a3a3a3 48%)"></div>
<div class="h" style="left:965.2px;top:335.3px">#</div>
<div class="p" style="left:999px;top:311.6px;width:20px;height:19.5px;background-image:radial-gradient(circle closest-side at 47% 53%,#d8d8d8 0,#d8d8d8 20%,#a3a3a3 64%)"></div>
<div class="h" style="left:999.0px;top:335.3px">#</div>
<div class="p" style="left:1032.7px;top:311.6px;width:18.7px;height:19.5px;background-image:radial-gradient(circle closest-side at 48% 48%,#545454 0,#545454 12%,#a3a3a3 52%)"></div>
<div class="h" style="left:1032.0px;top:335.3px">#</div>
<div class="p" style="left:1064.6px;top:311.6px;width:21.5px;height:22px;background-image:radial-gradient(circle closest-side at 45% 44%,#727272 0,#727272 12%,#a3a3a3 60%)"></div>
<div class="h" style="left:1065.3px;top:337.8px">#</div>
<div class="p" style="left:1099.5px;top:311.6px;width:18.7px;height:18.2px;background-image:radial-gradient(circle closest-side at 54% 43%,#545454 0,#545454 12%,#a3a3a3 52%)"></div>
<div class="h" style="left:1098.8px;top:334.0px">#</div>
<div class="p" style="left:1132.5px;top:311.6px;width:21.5px;height:20.7px;background-image:radial-gradient(circle closest-side at 47% 44%,#5e5e5e 0,#5e5e5e 12%,#a3a3a3 52%)"></div>
<div class="h" style="left:1133.2px;top:336.5px">#</div>
<div class="p" style="left:1167.4px;top:311.6px;width:18.7px;height:19.5px;background-image:radial-gradient(circle closest-side at 55% 50%,#727272 0,#727272 12%,#a3a3a3 52%)"></div>
<div class="h" style="left:1166.8px;top:335.3px">#</div>
<div class="p" style="left:1199.8px;top:311.6px;width:18.5px;height:18.2px;background-image:radial-gradient(circle closest-side at 53% 45%,#686868 0,#686868 18%,#a3a3a3 58%)"></div>
<div class="h" style="left:1199.0px;top:334.0px">#</div>
<div class="p" style="left:1231.8px;top:311.6px;width:27.2px;height:26.2px;background-image:radial-gradient(circle closest-side at 50% 53%,#c8c8c8 0,#b4b4b4 12%,#777 30%,#808080 42%,#ababab 62%,#a3a3a3 85%)"></div>
<div class="h" style="left:1235.4px;top:342.0px">#</div>
<div class="p" style="left:1272.2px;top:311.6px;width:20px;height:20.2px;background-image:radial-gradient(circle closest-side at 51% 44%,#727272 0,#727272 18%,#a3a3a3 58%)"></div>
<div class="h" style="left:1272.2px;top:336.0px">#</div>
<div class="p" style="left:1305.9px;top:311.6px;width:20px;height:19.5px;background-image:radial-gradient(circle closest-side at 48% 42%,#686868 0,#686868 18%,#a3a3a3 66%)"></div>
<div class="h" style="left:1305.9px;top:335.3px">#</div>
<div class="p" style="left:1339.3px;top:311.6px;width:20.2px;height:19.5px;background-image:radial-gradient(circle closest-side at 47% 46%,#545454 0,#545454 18%,#a3a3a3 66%)"></div>
<div class="h" style="left:1339.4px;top:335.3px">#</div>
<div class="p" style="left:1373px;top:311.6px;width:20px;height:18.2px;background-image:radial-gradient(circle closest-side at 45% 51%,#727272 0,#727272 18%,#a3a3a3 58%)"></div>
<div class="h" style="left:1373.0px;top:334.0px">#</div>
<div class="p" style="left:1406.4px;top:311.6px;width:18.7px;height:18.2px;background-image:radial-gradient(circle closest-side at 50% 48%,#545454 0,#545454 18%,#a3a3a3 66%)"></div>
<div class="h" style="left:1405.8px;top:334.0px">#</div>
<div class="p" style="left:1438.8px;top:311.6px;width:18.7px;height:18.2px;background-image:radial-gradient(circle closest-side at 49% 51%,#727272 0,#727272 12%,#a3a3a3 52%)"></div>
<div class="h" style="left:1438.1px;top:334.0px">#</div>
<div class="p" style="left:763px;top:365.5px;width:25.7px;height:26.4px;background-image:radial-gradient(circle closest-side at 50% 42%,#8a8a8a 0,#8a8a8a 12%,#a3a3a3 60%)"></div>
<div class="h" style="left:765.9px;top:396.1px">#</div>
<div class="p" style="left:802.1px;top:365.5px;width:21.7px;height:21.2px;background-image:radial-gradient(circle closest-side at 46% 45%,#727272 0,#727272 12%,#a3a3a3 52%)"></div>
<div class="h" style="left:803.0px;top:390.9px">#</div>
<div class="p" style="left:837.3px;top:365.5px;width:18.5px;height:18.7px;background-image:radial-gradient(circle closest-side at 52% 51%,#727272 0,#727272 8%,#a3a3a3 48%)"></div>
<div class="h" style="left:836.5px;top:388.4px">#</div>
<div class="p" style="left:869.3px;top:365.5px;width:23px;height:22.5px;background-image:radial-gradient(circle closest-side at 47% 48%,#828282 0,#828282 18%,#a3a3a3 66%)"></div>
<div class="h" style="left:870.8px;top:392.2px">#</div>
<div class="p" style="left:905.4px;top:365.5px;width:20.5px;height:21.2px;background-image:radial-gradient(circle closest-side at 47% 46%,#8a8a8a 0,#8a8a8a 18%,#a3a3a3 58%)"></div>
<div class="h" style="left:905.6px;top:390.9px">#</div>
<div class="p" style="left:939.1px;top:365.5px;width:23px;height:21.2px;background-image:radial-gradient(circle closest-side at 54% 47%,#7a7a7a 0,#7a7a7a 18%,#a3a3a3 66%)"></div>
<div class="h" style="left:940.6px;top:390.9px">#</div>
<div class="p" style="left:975.5px;top:365.5px;width:19.2px;height:20px;background-image:radial-gradient(circle closest-side at 45% 47%,#7a7a7a 0,#7a7a7a 18%,#a3a3a3 58%)"></div>
<div class="h" style="left:975.1px;top:389.7px">#</div>
<div class="p" style="left:1008.2px;top:365.5px;width:20.5px;height:21.2px;background-image:radial-gradient(circle closest-side at 54% 46%,#7a7a7a 0,#7a7a7a 18%,#a3a3a3 58%)"></div>
<div class="h" style="left:1008.5px;top:390.9px">#</div>
<div class="p" style="left:1041.9px;top:365.5px;width:17.5px;height:18.7px;background-image:radial-gradient(circle closest-side at 54% 47%,#7a7a7a 0,#7a7a7a 8%,#a3a3a3 56%)"></div>
<div class="h" style="left:1040.7px;top:388.4px">#</div>
<div class="p" style="left:1072.8px;top:365.5px;width:24px;height:24px;background-image:radial-gradient(circle closest-side at 54% 44%,#828282 0,#828282 8%,#a3a3a3 48%)"></div>
<div class="h" style="left:1074.8px;top:393.7px">#</div>
<div class="p" style="left:1110.3px;top:365.5px;width:19px;height:20px;background-image:radial-gradient(circle closest-side at 53% 43%,#727272 0,#727272 8%,#a3a3a3 48%)"></div>
<div class="h" style="left:1109.8px;top:389.7px">#</div>
<div class="p" style="left:1143.2px;top:365.5px;width:20px;height:18.7px;background-image:radial-gradient(circle closest-side at 46% 42%,#8a8a8a 0,#8a8a8a 8%,#a3a3a3 56%)"></div>
<div class="h" style="left:1143.2px;top:388.4px">#</div>
<div class="p" style="left:1176.6px;top:365.5px;width:19px;height:20px;background-image:radial-gradient(circle closest-side at 53% 45%,#7a7a7a 0,#7a7a7a 8%,#a3a3a3 56%)"></div>
<div class="h" style="left:1176.1px;top:389.7px">#</div>
<div class="p" style="left:1209px;top:365.5px;width:18.7px;height:18.7px;background-image:radial-gradient(circle closest-side at 51% 49%,#727272 0,#727272 8%,#a3a3a3 56%)"></div>
<div class="h" style="left:1208.3px;top:388.4px">#</div>
<div class="p" style="left:1241.2px;top:365.5px;width:20.2px;height:21.2px;background-image:radial-gradient(circle closest-side at 54% 54%,#d8d8d8 0,#d8d8d8 26%,#a3a3a3 70%)"></div>
<div class="h" style="left:1241.3px;top:390.9px">#</div>
<div class="p" style="left:1274.9px;top:365.5px;width:21.2px;height:21.2px;background-image:radial-gradient(circle closest-side at 50% 48%,#7a7a7a 0,#7a7a7a 8%,#a3a3a3 56%)"></div>
<div class="h" style="left:1275.5px;top:390.9px">#</div>
<div class="p" style="left:1309.6px;top:365.5px;width:20.2px;height:20px;background-image:radial-gradient(circle closest-side at 46% 41%,#8a8a8a 0,#8a8a8a 8%,#a3a3a3 48%)"></div>
<div class="h" style="left:1309.7px;top:389.7px">#</div>
<div class="p" style="left:1343.3px;top:365.5px;width:32.2px;height:30.7px;background-image:radial-gradient(circle closest-side at 47% 47%,#fff 0,#f4f4f4 14%,#5c5c5c 33%,#6e6e6e 46%,#b0b0b0 64%,#a3a3a3 88%)"></div>
<div class="h" style="left:1349.4px;top:400.4px">#</div>
<div class="p" style="left:1388.9px;top:365.5px;width:18.7px;height:18.7px;background-image:radial-gradient(circle closest-side at 53% 51%,#727272 0,#727272 18%,#a3a3a3 58%)"></div>
<div class="h" style="left:1388.2px;top:388.4px">#</div>
<div class="p" style="left:1421.1px;top:365.5px;width:17.5px;height:18.7px;background-image:radial-gradient(circle closest-side at 46% 51%,#d8d8d8 0,#d8d8d8 14%,#a3a3a3 58%)"></div>
<div class="h" style="left:1419.8px;top:388.4px">#</div>
<div class="p" style="left:763px;top:423.6px;width:21.5px;height:20.7px;background-image:radial-gradient(circle closest-side at 49% 48%,#cccccc 0,#cccccc 20%,#a3a3a3 56%)"></div>
<div class="h" style="left:763.8px;top:448.5px">#</div>
<div class="p" style="left:797.9px;top:423.6px;width:19px;height:19.2px;background-image:radial-gradient(circle closest-side at 51% 44%,#e2e2e2 0,#e2e2e2 14%,#a3a3a3 50%)"></div>
<div class="h" style="left:797.4px;top:447.0px">#</div>
<div class="p" style="left:830.3px;top:423.6px;width:19px;height:18px;background-image:radial-gradient(circle closest-side at 47% 46%,#828282 0,#828282 12%,#a3a3a3 52%)"></div>
<div class="h" style="left:829.8px;top:445.8px">#</div>
<div class="p" style="left:862.8px;top:423.6px;width:20.2px;height:20px;background-image:radial-gradient(circle closest-side at 51% 42%,#727272 0,#727272 12%,#a3a3a3 52%)"></div>
<div class="h" style="left:862.9px;top:447.8px">#</div>
<div class="p" style="left:896.5px;top:423.6px;width:19.7px;height:20.7px;background-image:radial-gradient(circle closest-side at 53% 48%,#8a8a8a 0,#8a8a8a 18%,#a3a3a3 58%)"></div>
<div class="h" style="left:896.4px;top:448.5px">#</div>
<div class="p" style="left:929.6px;top:423.6px;width:19.2px;height:20px;background-image:radial-gradient(circle closest-side at 50% 51%,#828282 0,#828282 12%,#a3a3a3 52%)"></div>
<div class="h" style="left:929.2px;top:447.8px">#</div>
<div class="p" style="left:962.1px;top:423.6px;width:20.5px;height:18px;background-image:radial-gradient(circle closest-side at 52% 49%,#8a8a8a 0,#8a8a8a 8%,#a3a3a3 56%)"></div>
<div class="h" style="left:962.4px;top:445.8px">#</div>
<div class="p" style="left:996.3px;top:423.6px;width:20px;height:20.7px;background-image:radial-gradient(circle closest-side at 54% 48%,#8a8a8a 0,#8a8a8a 8%,#a3a3a3 56%)"></div>
<div class="h" style="left:996.3px;top:448.5px">#</div>
<div class="p" style="left:1029.9px;top:423.6px;width:21.5px;height:20.7px;background-image:radial-gradient(circle closest-side at 47% 46%,#cccccc 0,#cccccc 20%,#a3a3a3 64%)"></div>
<div class="h" style="left:1030.7px;top:448.5px">#</div>
<div class="p" style="left:1064.6px;top:423.6px;width:19px;height:18.2px;background-image:radial-gradient(circle closest-side at 46% 50%,#727272 0,#727272 8%,#a3a3a3 56%)"></div>
<div class="h" style="left:1064.1px;top:446.0px">#</div>
<div class="p" style="left:1097px;top:423.6px;width:18.7px;height:18px;background-image:radial-gradient(circle closest-side at 54% 48%,#828282 0,#828282 8%,#a3a3a3 56%)"></div>
<div class="h" style="left:1096.3px;top:445.8px">#</div>
<div class="p" style="left:1129.7px;top:423.6px;width:17.5px;height:18px;background-image:radial-gradient(circle closest-side at 51% 46%,#8a8a8a 0,#8a8a8a 18%,#a3a3a3 66%)"></div>
<div class="h" style="left:1128.5px;top:445.8px">#</div>
<div class="p" style="left:1160.6px;top:423.6px;width:18.7px;height:18px;background-image:radial-gradient(circle closest-side at 51% 48%,#8a8a8a 0,#8a8a8a 18%,#a3a3a3 58%)"></div>
<div class="h" style="left:1159.9px;top:445.8px">#</div>
<div class="p" style="left:1192.8px;top:423.6px;width:21.5px;height:20.7px;background-image:radial-gradient(circle closest-side at 46% 42%,#7a7a7a 0,#7a7a7a 12%,#a3a3a3 60%)"></div>
<div class="h" style="left:1193.5px;top:448.5px">#</div>
<div class="p" style="left:1227.8px;top:423.6px;width:18.7px;height:18px;background-image:radial-gradient(circle closest-side at 49% 42%,#7a7a7a 0,#7a7a7a 18%,#a3a3a3 66%)"></div>
<div class="h" style="left:1227.1px;top:445.8px">#</div>
<div class="p" style="left:1259.9px;top:423.6px;width:22.7px;height:22px;background-image:radial-gradient(circle closest-side at 45% 44%,#828282 0,#828282 12%,#a3a3a3 60%)"></div>
<div class="h" style="left:1261.2px;top:449.8px">#</div>
<div class="p" style="left:1296.1px;top:423.6px;width:19px;height:19.5px;background-image:radial-gradient(circle closest-side at 55% 47%,#727272 0,#727272 18%,#a3a3a3 66%)"></div>
<div class="h" style="left:1295.6px;top:447.3px">#</div>
<div class="p" style="left:1328.6px;top:423.6px;width:20.2px;height:19.5px;background-image:radial-gradient(circle closest-side at 53% 42%,#727272 0,#727272 12%,#a3a3a3 52%)"></div>
<div class="h" style="left:1328.7px;top:447.3px">#</div>
<div class="p" style="left:1362.2px;top:423.6px;width:21.5px;height:20.7px;background-image:radial-gradient(circle closest-side at 49% 54%,#cccccc 0,#cccccc 26%,#a3a3a3 62%)"></div>
<div class="h" style="left:1363.0px;top:448.5px">#</div>
<div class="p" style="left:1397.2px;top:423.6px;width:17.5px;height:18px;background-image:radial-gradient(circle closest-side at 49% 46%,#828282 0,#828282 18%,#a3a3a3 66%)"></div>
<div class="h" style="left:1396.0px;top:445.8px">#</div>
<div class="p" style="left:1428.1px;top:423.6px;width:18.7px;height:19.2px;background-image:radial-gradient(circle closest-side at 51% 45%,#828282 0,#828282 12%,#a3a3a3 60%)"></div>
<div class="h" style="left:1427.4px;top:447.0px">#</div>
<div class="p" style="left:763px;top:473px;width:19px;height:18.7px;background-image:radial-gradient(circle closest-side at 51% 44%,#828282 0,#828282 8%,#a3a3a3 48%)"></div>
<div class="h" style="left:762.5px;top:495.9px">#</div>
<div class="p" style="left:795.4px;top:473px;width:20.2px;height:20px;background-image:radial-gradient(circle closest-side at 53% 47%,#7a7a7a 0,#7a7a7a 12%,#a3a3a3 60%)"></div>
<div class="h" style="left:795.5px;top:497.2px">#</div>
<div class="p" style="left:829.1px;top:473px;width:20.2px;height:20px;background-image:radial-gradient(circle closest-side at 46% 47%,#cccccc 0,#cccccc 14%,#a3a3a3 58%)"></div>
<div class="h" style="left:829.2px;top:497.2px">#</div>
<div class="p" style="left:862.8px;top:473px;width:18.7px;height:20px;background-image:radial-gradient(circle closest-side at 46% 50%,#8a8a8a 0,#8a8a8a 18%,#a3a3a3 66%)"></div>
<div class="h" style="left:862.1px;top:497.2px">#</div>
<div class="p" style="left:895px;top:473px;width:21.5px;height:22.7px;background-image:radial-gradient(circle closest-side at 48% 52%,#d8d8d8 0,#d8d8d8 26%,#a3a3a3 62%)"></div>
<div class="h" style="left:895.8px;top:499.9px">#</div>
<div class="p" style="left:929.9px;top:473px;width:33.7px;height:34.9px;background-image:radial-gradient(circle closest-side at 54% 52%,#fff 0,#f4f4f4 14%,#5c5c5c 33%,#6e6e6e 46%,#b0b0b0 64%,#a3a3a3 88%)"></div>
<div class="h" style="left:936.8px;top:512.1px">#</div>
<div class="p" style="left:977px;top:473px;width:20.5px;height:20px;background-image:radial-gradient(circle closest-side at 50% 51%,#7a7a7a 0,#7a7a7a 18%,#a3a3a3 58%)"></div>
<div class="h" style="left:977.2px;top:497.2px">#</div>
<div class="p" style="left:1011px;top:473px;width:19px;height:18.7px;background-image:radial-gradient(circle closest-side at 46% 45%,#727272 0,#727272 8%,#a3a3a3 48%)"></div>
<div class="h" style="left:1010.5px;top:495.9px">#</div>
<div class="p" style="left:1043.4px;top:473px;width:18.5px;height:18.7px;background-image:radial-gradient(circle closest-side at 49% 43%,#828282 0,#828282 12%,#a3a3a3 52%)"></div>
<div class="h" style="left:1042.7px;top:495.9px">#</div>
<div class="p" style="left:1075.3px;top:473px;width:19px;height:18.7px;background-image:radial-gradient(circle closest-side at 52% 46%,#828282 0,#828282 18%,#a3a3a3 66%)"></div>
<div class="h" style="left:1074.8px;top:495.9px">#</div>
<div class="p" style="left:1107.5px;top:473px;width:28.9px;height:29.4px;background-image:radial-gradient(circle closest-side at 49% 52%,#fff 0,#f4f4f4 14%,#5c5c5c 33%,#6e6e6e 46%,#b0b0b0 64%,#a3a3a3 88%)"></div>
<div class="h" style="left:1112.0px;top:506.6px">#</div>
<div class="p" style="left:1149.9px;top:473px;width:21.5px;height:20px;background-image:radial-gradient(circle closest-side at 53% 42%,#828282 0,#828282 18%,#a3a3a3 58%)"></div>
<div class="h" style="left:1150.7px;top:497.2px">#</div>
<div class="p" style="left:1184.8px;top:473px;width:18.7px;height:20px;background-image:radial-gradient(circle closest-side at 47% 45%,#cccccc 0,#cccccc 26%,#a3a3a3 70%)"></div>
<div class="h" style="left:1184.1px;top:497.2px">#</div>
<div class="p" style="left:1217px;top:473px;width:19px;height:18.7px;background-image:radial-gradient(circle closest-side at 48% 47%,#7a7a7a 0,#7a7a7a 18%,#a3a3a3 66%)"></div>
<div class="h" style="left:1216.5px;top:495.9px">#</div>
<div class="p" style="left:1249.2px;top:473px;width:21.7px;height:20px;background-image:radial-gradient(circle closest-side at 53% 43%,#7a7a7a 0,#7a7a7a 18%,#a3a3a3 58%)"></div>
<div class="h" style="left:1250.0px;top:497.2px">#</div>
<div class="p" style="left:1284.1px;top:473px;width:18.7px;height:18.7px;background-image:radial-gradient(circle closest-side at 54% 41%,#727272 0,#727272 8%,#a3a3a3 56%)"></div>
<div class="h" style="left:1283.4px;top:495.9px">#</div>
<div class="p" style="left:1316.3px;top:473px;width:18.7px;height:18.7px;background-image:radial-gradient(circle closest-side at 48% 41%,#727272 0,#727272 8%,#a3a3a3 48%)"></div>
<div class="h" style="left:1315.6px;top:495.9px">#</div>
<div class="p" style="left:1348.5px;top:473px;width:17.7px;height:18.7px;background-image:radial-gradient(circle closest-side at 50% 42%,#727272 0,#727272 18%,#a3a3a3 58%)"></div>
<div class="h" style="left:1347.3px;top:495.9px">#</div>
<div class="p" style="left:1379.5px;top:473px;width:20.2px;height:20px;background-image:radial-gradient(circle closest-side at 51% 47%,#828282 0,#828282 12%,#a3a3a3 60%)"></div>
<div class="h" style="left:1379.6px;top:497.2px">#</div>
<div class="p" style="left:1413.1px;top:473px;width:21.5px;height:20px;background-image:radial-gradient(circle closest-side at 49% 44%,#8a8a8a 0,#8a8a8a 18%,#a3a3a3 58%)"></div>
<div class="h" style="left:1413.8px;top:497.2px">#</div>
<div class="p" style="left:763px;top:534.9px;width:20.2px;height:20px;background-image:radial-gradient(circle closest-side at 53% 42%,#727272 0,#727272 12%,#a3a3a3 52%)"></div>
<div class="h" style="left:763.1px;top:559.1px">#</div>
<div class="p" style="left:796.9px;top:534.9px;width:18.7px;height:20px;background-image:radial-gradient(circle closest-side at 49% 48%,#8a8a8a 0,#8a8a8a 8%,#a3a3a3 56%)"></div>
<div class="h" style="left:796.2px;top:559.1px">#</div>
<div class="p" style="left:829.1px;top:534.9px;width:28.2px;height:27.9px;background-image:radial-gradient(circle closest-side at 47% 53%,#fff 0,#f4f4f4 14%,#5c5c5c 33%,#6e6e6e 46%,#b0b0b0 64%,#a3a3a3 88%)"></div>
<div class="h" style="left:833.2px;top:567.0px">#</div>
<div class="p" style="left:870.8px;top:534.9px;width:17.5px;height:18.7px;background-image:radial-gradient(circle closest-side at 51% 44%,#7a7a7a 0,#7a7a7a 12%,#a3a3a3 60%)"></div>
<div class="h" style="left:869.5px;top:557.8px">#</div>
<div class="p" style="left:901.4px;top:534.9px;width:17.5px;height:18.7px;background-image:radial-gradient(circle closest-side at 51% 46%,#828282 0,#828282 8%,#a3a3a3 48%)"></div>
<div class="h" style="left:900.1px;top:557.8px">#</div>
<div class="p" style="left:932.4px;top:534.9px;width:24.2px;height:24px;background-image:radial-gradient(circle closest-side at 49% 47%,#8a8a8a 0,#8a8a8a 12%,#a3a3a3 52%)"></div>
<div class="h" style="left:934.5px;top:563.1px">#</div>
<div class="p" style="left:970.1px;top:534.9px;width:20px;height:18.7px;background-image:radial-gradient(circle closest-side at 46% 43%,#727272 0,#727272 18%,#a3a3a3 66%)"></div>
<div class="h" style="left:970.1px;top:557.8px">#</div>
<div class="p" style="left:1003px;top:534.9px;width:18.7px;height:18.7px;background-image:radial-gradient(circle closest-side at 50% 49%,#828282 0,#828282 12%,#a3a3a3 52%)"></div>
<div class="h" style="left:1002.4px;top:557.8px">#</div>
<div class="p" style="left:1035.2px;top:534.9px;width:18.7px;height:18.7px;background-image:radial-gradient(circle closest-side at 47% 48%,#828282 0,#828282 12%,#a3a3a3 52%)"></div>
<div class="h" style="left:1034.5px;top:557.8px">#</div>
<div class="p" style="left:1067.4px;top:534.9px;width:19px;height:18.7px;background-image:radial-gradient(circle closest-side at 48% 48%,#e2e2e2 0,#e2e2e2 26%,#a3a3a3 70%)"></div>
<div class="h" style="left:1066.9px;top:557.8px">#</div>
<div class="p" style="left:1099.5px;top:534.9px;width:17.7px;height:18.7px;background-image:radial-gradient(circle closest-side at 49% 49%,#828282 0,#828282 12%,#a3a3a3 60%)"></div>
<div class="h" style="left:1098.3px;top:557.8px">#</div>
<div class="p" style="left:1131px;top:534.9px;width:20.2px;height:21.2px;background-image:radial-gradient(circle closest-side at 47% 51%,#7a7a7a 0,#7a7a7a 8%,#a3a3a3 56%)"></div>
<div class="h" style="left:1131.1px;top:560.3px">#</div>
<div class="p" style="left:1164.6px;top:534.9px;width:20.2px;height:20px;background-image:radial-gradient(circle closest-side at 53% 41%,#8a8a8a 0,#8a8a8a 18%,#a3a3a3 66%)"></div>
<div class="h" style="left:1164.7px;top:559.1px">#</div>
<div class="p" style="left:1198.3px;top:534.9px;width:18.7px;height:20px;background-image:radial-gradient(circle closest-side at 53% 48%,#828282 0,#828282 12%,#a3a3a3 52%)"></div>
<div class="h" style="left:1197.6px;top:559.1px">#</div>
<div class="p" style="left:1230.5px;top:534.9px;width:20.2px;height:18.7px;background-image:radial-gradient(circle closest-side at 53% 47%,#7a7a7a 0,#7a7a7a 8%,#a3a3a3 56%)"></div>
<div class="h" style="left:1230.6px;top:557.8px">#</div>
<div class="p" style="left:1263.9px;top:534.9px;width:20.2px;height:20px;background-image:radial-gradient(circle closest-side at 54% 44%,#727272 0,#727272 8%,#a3a3a3 48%)"></div>
<div class="h" style="left:1264.0px;top:559.1px">#</div>
<div class="p" style="left:1297.6px;top:534.9px;width:23px;height:21.5px;background-image:radial-gradient(circle closest-side at 50% 50%,#d8d8d8 0,#d8d8d8 26%,#a3a3a3 70%)"></div>
<div class="h" style="left:1299.1px;top:560.6px">#</div>
<div class="p" style="left:1333.8px;top:534.9px;width:19px;height:20px;background-image:radial-gradient(circle closest-side at 46% 49%,#e2e2e2 0,#e2e2e2 14%,#a3a3a3 58%)"></div>
<div class="h" style="left:1333.3px;top:559.1px">#</div>
<div class="p" style="left:1366.2px;top:534.9px;width:26.7px;height:27.9px;background-image:radial-gradient(circle closest-side at 46% 52%,#fff 0,#f4f4f4 14%,#5c5c5c 33%,#6e6e6e 46%,#b0b0b0 64%,#a3a3a3 88%)"></div>
<div class="h" style="left:1369.5px;top:567.0px">#</div>
<div class="p" style="left:1406.4px;top:534.9px;width:18.7px;height:18.7px;background-image:radial-gradient(circle closest-side at 54% 42%,#7a7a7a 0,#7a7a7a 8%,#a3a3a3 56%)"></div>
<div class="h" style="left:1405.8px;top:557.8px">#</div>
<div class="p" style="left:1438.6px;top:534.9px;width:19px;height:18.7px;background-image:radial-gradient(circle closest-side at 47% 43%,#828282 0,#828282 12%,#a3a3a3 60%)"></div>
<div class="h" style="left:1438.1px;top:557.8px">#</div>
<div class="p" style="left:763px;top:590px;width:17.5px;height:18.7px;background-image:radial-gradient(circle closest-side at 49% 49%,#949494 0,#949494 18%,#a3a3a3 58%)"></div>
<div class="h" style="left:761.8px;top:612.9px">#</div>
<div class="p" style="left:794.2px;top:590px;width:18.7px;height:18.7px;background-image:radial-gradient(circle closest-side at 50% 49%,#b6b6b6 0,#b6b6b6 14%,#a3a3a3 50%)"></div>
<div class="h" style="left:793.6px;top:612.9px">#</div>
<div class="p" style="left:826.3px;top:590px;width:20.2px;height:20px;background-image:radial-gradient(circle closest-side at 49% 49%,#949494 0,#949494 8%,#a3a3a3 56%)"></div>
<div class="h" style="left:826.4px;top:614.2px">#</div>
<div class="p" style="left:860px;top:590px;width:19px;height:18.7px;background-image:radial-gradient(circle closest-side at 53% 50%,#888 0,#888 18%,#a3a3a3 66%)"></div>
<div class="h" style="left:859.5px;top:612.9px">#</div>
<div class="p" style="left:892.2px;top:590px;width:18.7px;height:20px;background-image:radial-gradient(circle closest-side at 52% 49%,#8b8b8b 0,#8b8b8b 12%,#a3a3a3 52%)"></div>
<div class="h" style="left:891.6px;top:614.2px">#</div>
<div class="p" style="left:924.4px;top:590px;width:21.5px;height:20px;background-image:radial-gradient(circle closest-side at 47% 46%,#b6b6b6 0,#b6b6b6 20%,#a3a3a3 56%)"></div>
<div class="h" style="left:925.1px;top:614.2px">#</div>
<div class="p" style="left:959.3px;top:590px;width:17.5px;height:18.7px;background-image:radial-gradient(circle closest-side at 48% 45%,#949494 0,#949494 12%,#a3a3a3 52%)"></div>
<div class="h" style="left:958.0px;top:612.9px">#</div>
<div class="p" style="left:991px;top:590px;width:18.5px;height:17px;background-image:radial-gradient(circle closest-side at 50% 48%,#949494 0,#949494 18%,#a3a3a3 58%)"></div>
<div class="h" style="left:990.2px;top:611.2px">#</div>
<div class="p" style="left:1022.9px;top:590px;width:28.2px;height:27.9px;background-image:radial-gradient(circle closest-side at 53% 47%,#c8c8c8 0,#b4b4b4 12%,#777 30%,#808080 42%,#ababab 62%,#a3a3a3 85%)"></div>
<div class="h" style="left:1027.0px;top:622.1px">#</div>
<div class="p" style="left:1064.6px;top:590px;width:20.2px;height:21.2px;background-image:radial-gradient(circle closest-side at 46% 49%,#b6b6b6 0,#b6b6b6 20%,#a3a3a3 56%)"></div>
<div class="h" style="left:1064.7px;top:615.4px">#</div>
<div class="p" style="left:1098.3px;top:590px;width:17.5px;height:18.7px;background-image:radial-gradient(circle closest-side at 48% 43%,#949494 0,#949494 8%,#a3a3a3 48%)"></div>
<div class="h" style="left:1097.0px;top:612.9px">#</div>
<div class="p" style="left:1129.7px;top:590px;width:19px;height:18.7px;background-image:radial-gradient(circle closest-side at 51% 46%,#8e8e8e 0,#8e8e8e 12%,#a3a3a3 52%)"></div>
<div class="h" style="left:1129.2px;top:612.9px">#</div>
<div class="p" style="left:1161.9px;top:590px;width:20.5px;height:21.2px;background-image:radial-gradient(circle closest-side at 54% 45%,#949494 0,#949494 18%,#a3a3a3 66%)"></div>
<div class="h" style="left:1162.2px;top:615.4px">#</div>
<div class="p" style="left:1195.6px;top:590px;width:21.7px;height:20px;background-image:radial-gradient(circle closest-side at 54% 46%,#8b8b8b 0,#8b8b8b 12%,#a3a3a3 52%)"></div>
<div class="h" style="left:1196.4px;top:614.2px">#</div>
<div class="p" style="left:1230.5px;top:590px;width:18.7px;height:18.7px;background-image:radial-gradient(circle closest-side at 50% 43%,#888 0,#888 8%,#a3a3a3 48%)"></div>
<div class="h" style="left:1229.8px;top:612.9px">#</div>
<div class="p" style="left:1262.7px;top:590px;width:23px;height:22.5px;background-image:radial-gradient(circle closest-side at 53% 45%,#949494 0,#949494 8%,#a3a3a3 48%)"></div>
<div class="h" style="left:1264.2px;top:616.7px">#</div>
<div class="p" style="left:1299.1px;top:590px;width:20px;height:20px;background-image:radial-gradient(circle closest-side at 54% 53%,#c4c4c4 0,#c4c4c4 20%,#a3a3a3 56%)"></div>
<div class="h" style="left:1299.1px;top:614.2px">#</div>
<div class="p" style="left:1332.5px;top:590px;width:20.2px;height:21.2px;background-image:radial-gradient(circle closest-side at 52% 47%,#8e8e8e 0,#8e8e8e 12%,#a3a3a3 52%)"></div>
<div class="h" style="left:1332.6px;top:615.4px">#</div>
<div class="p" style="left:1366.2px;top:590px;width:21.5px;height:21.2px;background-image:radial-gradient(circle closest-side at 53% 42%,#8e8e8e 0,#8e8e8e 18%,#a3a3a3 66%)"></div>
<div class="h" style="left:1367.0px;top:615.4px">#</div>
<div class="p" style="left:1401.2px;top:590px;width:21.5px;height:20px;background-image:radial-gradient(circle closest-side at 50% 45%,#b6b6b6 0,#b6b6b6 14%,#a3a3a3 50%)"></div>
<div class="h" style="left:1402.0px;top:614.2px">#</div>
<div class="p" style="left:1436.1px;top:590px;width:18.7px;height:18.7px;background-image:radial-gradient(circle closest-side at 47% 50%,#8e8e8e 0,#8e8e8e 8%,#a3a3a3 48%)"></div>
<div class="h" style="left:1435.4px;top:612.9px">#</div>
<div class="p" style="left:763px;top:644.9px;width:17.5px;height:18.7px;background-image:radial-gradient(circle closest-side at 49% 47%,#888 0,#888 12%,#a3a3a3 60%)"></div>
<div class="h" style="left:761.8px;top:667.8px">#</div>
<div class="p" style="left:794.2px;top:644.9px;width:18.7px;height:20px;background-image:radial-gradient(circle closest-side at 46% 51%,#b6b6b6 0,#b6b6b6 26%,#a3a3a3 70%)"></div>
<div class="h" style="left:793.6px;top:669.1px">#</div>
<div class="p" style="left:826.3px;top:644.9px;width:20.2px;height:20px;background-image:radial-gradient(circle closest-side at 45% 43%,#8e8e8e 0,#8e8e8e 18%,#a3a3a3 58%)"></div>
<div class="h" style="left:826.4px;top:669.1px">#</div>
<div class="p" style="left:860px;top:644.9px;width:19px;height:18.7px;background-image:radial-gradient(circle closest-side at 53% 48%,#bcbcbc 0,#bcbcbc 26%,#a3a3a3 70%)"></div>
<div class="h" style="left:859.5px;top:667.8px">#</div>
<div class="p" style="left:892.2px;top:644.9px;width:20px;height:20px;background-image:radial-gradient(circle closest-side at 50% 46%,#c4c4c4 0,#c4c4c4 20%,#a3a3a3 64%)"></div>
<div class="h" style="left:892.2px;top:669.1px">#</div>
<div class="p" style="left:925.6px;top:644.9px;width:17.5px;height:18.7px;background-image:radial-gradient(circle closest-side at 49% 47%,#8b8b8b 0,#8b8b8b 18%,#a3a3a3 58%)"></div>
<div class="h" style="left:924.4px;top:667.8px">#</div>
<div class="p" style="left:956.6px;top:644.9px;width:20.2px;height:20px;background-image:radial-gradient(circle closest-side at 49% 51%,#bcbcbc 0,#bcbcbc 26%,#a3a3a3 70%)"></div>
<div class="h" style="left:956.7px;top:669.1px">#</div>
<div class="p" style="left:991px;top:644.9px;width:20px;height:20px;background-image:radial-gradient(circle closest-side at 52% 48%,#888 0,#888 18%,#a3a3a3 66%)"></div>
<div class="h" style="left:991.0px;top:669.1px">#</div>
<div class="p" style="left:1024.2px;top:644.9px;width:19px;height:18.7px;background-image:radial-gradient(circle closest-side at 45% 45%,#8b8b8b 0,#8b8b8b 8%,#a3a3a3 56%)"></div>
<div class="h" style="left:1023.7px;top:667.8px">#</div>
<div class="p" style="left:1056.4px;top:644.9px;width:33.7px;height:32.4px;background-image:radial-gradient(circle closest-side at 51% 50%,#fff 0,#f4f4f4 14%,#5c5c5c 33%,#6e6e6e 46%,#b0b0b0 64%,#a3a3a3 88%)"></div>
<div class="h" style="left:1063.2px;top:681.5px">#</div>
<div class="p" style="left:1103.5px;top:644.9px;width:18.7px;height:18.7px;background-image:radial-gradient(circle closest-side at 45% 51%,#8e8e8e 0,#8e8e8e 18%,#a3a3a3 58%)"></div>
<div class="h" style="left:1102.8px;top:667.8px">#</div>
<div class="p" style="left:1136.4px;top:644.9px;width:20.2px;height:21.2px;background-image:radial-gradient(circle closest-side at 48% 45%,#949494 0,#949494 12%,#a3a3a3 60%)"></div>
<div class="h" style="left:1136.5px;top:670.3px">#</div>
<div class="p" style="left:1170.1px;top:644.9px;width:19px;height:18.7px;background-image:radial-gradient(circle closest-side at 51% 42%,#8e8e8e 0,#8e8e8e 8%,#a3a3a3 56%)"></div>
<div class="h" style="left:1169.6px;top:667.8px">#</div>
<div class="p" style="left:1202.3px;top:644.9px;width:19px;height:20px;background-image:radial-gradient(circle closest-side at 52% 44%,#949494 0,#949494 18%,#a3a3a3 66%)"></div>
<div class="h" style="left:1201.8px;top:669.1px">#</div>
<div class="p" style="left:1234.7px;top:644.9px;width:18.7px;height:18.7px;background-image:radial-gradient(circle closest-side at 52% 44%,#8b8b8b 0,#8b8b8b 8%,#a3a3a3 48%)"></div>
<div class="h" style="left:1234.0px;top:667.8px">#</div>
<div class="p" style="left:1266.9px;top:644.9px;width:20.2px;height:21.2px;background-image:radial-gradient(circle closest-side at 46% 45%,#b6b6b6 0,#b6b6b6 26%,#a3a3a3 62%)"></div>
<div class="h" style="left:1267.0px;top:670.3px">#</div>
<div class="p" style="left:1300.4px;top:644.9px;width:20.2px;height:20px;background-image:radial-gradient(circle closest-side at 47% 45%,#8b8b8b 0,#8b8b8b 18%,#a3a3a3 58%)"></div>
<div class="h" style="left:1300.5px;top:669.1px">#</div>
<div class="p" style="left:1333.8px;top:644.9px;width:20.2px;height:21.2px;background-image:radial-gradient(circle closest-side at 46% 44%,#bcbcbc 0,#bcbcbc 20%,#a3a3a3 64%)"></div>
<div class="h" style="left:1333.9px;top:670.3px">#</div>
<div class="p" style="left:1367.5px;top:644.9px;width:19px;height:18.7px;background-image:radial-gradient(circle closest-side at 53% 44%,#8b8b8b 0,#8b8b8b 18%,#a3a3a3 58%)"></div>
<div class="h" style="left:1367.0px;top:667.8px">#</div>
<div class="p" style="left:1399.9px;top:644.9px;width:20px;height:20px;background-image:radial-gradient(circle closest-side at 51% 49%,#8b8b8b 0,#8b8b8b 12%,#a3a3a3 60%)"></div>
<div class="h" style="left:1399.9px;top:669.1px">#</div>
<div class="p" style="left:1433.3px;top:644.9px;width:20.2px;height:20px;background-image:radial-gradient(circle closest-side at 54% 47%,#8b8b8b 0,#8b8b8b 18%,#a3a3a3 66%)"></div>
<div class="h" style="left:1433.4px;top:669.1px">#</div>
<div class="p" style="left:763px;top:704.2px;width:17.5px;height:18.2px;background-image:radial-gradient(circle closest-side at 55% 49%,#888 0,#888 12%,#a3a3a3 60%)"></div>
<div class="h" style="left:761.8px;top:726.6px">#</div>
<div class="p" style="left:794.2px;top:704.2px;width:18.7px;height:18.7px;background-image:radial-gradient(circle closest-side at 47% 44%,#8b8b8b 0,#8b8b8b 8%,#a3a3a3 56%)"></div>
<div class="h" style="left:793.6px;top:727.1px">#</div>
<div class="p" style="left:826.3px;top:704.2px;width:20.2px;height:20.2px;background-image:radial-gradient(circle closest-side at 47% 47%,#c4c4c4 0,#c4c4c4 14%,#a3a3a3 50%)"></div>
<div class="h" style="left:826.4px;top:728.6px">#</div>
<div class="p" style="left:860px;top:704.2px;width:21.5px;height:20.2px;background-image:radial-gradient(circle closest-side at 48% 49%,#c4c4c4 0,#c4c4c4 26%,#a3a3a3 62%)"></div>
<div class="h" style="left:860.8px;top:728.6px">#</div>
<div class="p" style="left:895px;top:704.2px;width:18.7px;height:17px;background-image:radial-gradient(circle closest-side at 49% 46%,#8e8e8e 0,#8e8e8e 18%,#a3a3a3 58%)"></div>
<div class="h" style="left:894.4px;top:725.4px">#</div>
<div class="p" style="left:927.1px;top:704.2px;width:17.5px;height:18.7px;background-image:radial-gradient(circle closest-side at 55% 46%,#8e8e8e 0,#8e8e8e 18%,#a3a3a3 58%)"></div>
<div class="h" style="left:925.9px;top:727.1px">#</div>
<div class="p" style="left:958.1px;top:704.2px;width:20px;height:18.7px;background-image:radial-gradient(circle closest-side at 51% 43%,#888 0,#888 8%,#a3a3a3 48%)"></div>
<div class="h" style="left:958.1px;top:727.1px">#</div>
<div class="p" style="left:992px;top:704.2px;width:20.2px;height:21.5px;background-image:radial-gradient(circle closest-side at 50% 48%,#c4c4c4 0,#c4c4c4 20%,#a3a3a3 56%)"></div>
<div class="h" style="left:992.1px;top:729.9px">#</div>
<div class="p" style="left:1025.7px;top:704.2px;width:17.5px;height:18.7px;background-image:radial-gradient(circle closest-side at 54% 45%,#8b8b8b 0,#8b8b8b 8%,#a3a3a3 56%)"></div>
<div class="h" style="left:1024.5px;top:727.1px">#</div>
<div class="p" style="left:1056.6px;top:704.2px;width:20.2px;height:20.2px;background-image:radial-gradient(circle closest-side at 55% 42%,#888 0,#888 18%,#a3a3a3 66%)"></div>
<div class="h" style="left:1056.7px;top:728.6px">#</div>
<div class="p" style="left:1090.3px;top:704.2px;width:20px;height:20.2px;background-image:radial-gradient(circle closest-side at 47% 51%,#c4c4c4 0,#c4c4c4 26%,#a3a3a3 62%)"></div>
<div class="h" style="left:1090.3px;top:728.6px">#</div>
<div class="p" style="left:1124.2px;top:704.2px;width:20.2px;height:20.2px;background-image:radial-gradient(circle closest-side at 46% 49%,#949494 0,#949494 18%,#a3a3a3 66%)"></div>
<div class="h" style="left:1124.3px;top:728.6px">#</div>
<div class="p" style="left:1157.9px;top:704.2px;width:19px;height:20.2px;background-image:radial-gradient(circle closest-side at 47% 47%,#8e8e8e 0,#8e8e8e 8%,#a3a3a3 48%)"></div>
<div class="h" style="left:1157.4px;top:728.6px">#</div>
<div class="p" style="left:1190.3px;top:704.2px;width:20px;height:20.2px;background-image:radial-gradient(circle closest-side at 50% 45%,#8e8e8e 0,#8e8e8e 12%,#a3a3a3 60%)"></div>
<div class="h" style="left:1190.3px;top:728.6px">#</div>
<div class="p" style="left:1223.8px;top:704.2px;width:17.7px;height:18.7px;background-image:radial-gradient(circle closest-side at 51% 47%,#888 0,#888 8%,#a3a3a3 48%)"></div>
<div class="h" style="left:1222.6px;top:727.1px">#</div>
<div class="p" style="left:1254.7px;top:704.2px;width:19px;height:18.7px;background-image:radial-gradient(circle closest-side at 49% 44%,#b6b6b6 0,#b6b6b6 20%,#a3a3a3 56%)"></div>
<div class="h" style="left:1254.2px;top:727.1px">#</div>
<div class="p" style="left:1287.1px;top:704.2px;width:18.7px;height:18.7px;background-image:radial-gradient(circle closest-side at 51% 43%,#8e8e8e 0,#8e8e8e 12%,#a3a3a3 52%)"></div>
<div class="h" style="left:1286.4px;top:727.1px">#</div>
<div class="p" style="left:1319.1px;top:704.2px;width:21.5px;height:21.5px;background-image:radial-gradient(circle closest-side at 51% 44%,#888 0,#888 18%,#a3a3a3 58%)"></div>
<div class="h" style="left:1319.8px;top:729.9px">#</div>
<div class="p" style="left:1354px;top:704.2px;width:18.7px;height:20.2px;background-image:radial-gradient(circle closest-side at 49% 46%,#888 0,#888 12%,#a3a3a3 60%)"></div>
<div class="h" style="left:1353.3px;top:728.6px">#</div>
<div class="p" style="left:1386.2px;top:704.2px;width:21.7px;height:21.5px;background-image:radial-gradient(circle closest-side at 49% 50%,#b6b6b6 0,#b6b6b6 26%,#a3a3a3 70%)"></div>
<div class="h" style="left:1387.0px;top:729.9px">#</div>
<div class="p" style="left:1421.4px;top:704.2px;width:18.7px;height:20.2px;background-image:radial-gradient(circle closest-side at 53% 46%,#8b8b8b 0,#8b8b8b 18%,#a3a3a3 66%)"></div>
<div class="h" style="left:1420.8px;top:728.6px">#</div>
<div class="p" style="left:763px;top:752.4px;width:18.7px;height:20px;background-image:radial-gradient(circle closest-side at 53% 42%,#888 0,#888 18%,#a3a3a3 66%)"></div>
<div class="h" style="left:762.4px;top:776.6px">#</div>
<div class="p" style="left:795.4px;top:752.4px;width:17.5px;height:18.7px;background-image:radial-gradient(circle closest-side at 50% 48%,#bcbcbc 0,#bcbcbc 20%,#a3a3a3 56%)"></div>
<div class="h" style="left:794.1px;top:775.3px">#</div>
<div class="p" style="left:826.3px;top:752.4px;width:18.7px;height:20px;background-image:radial-gradient(circle closest-side at 48% 50%,#c4c4c4 0,#c4c4c4 26%,#a3a3a3 70%)"></div>
<div class="h" style="left:825.6px;top:776.6px">#</div>
<div class="p" style="left:858.5px;top:752.4px;width:21.7px;height:20px;background-image:radial-gradient(circle closest-side at 51% 52%,#c4c4c4 0,#c4c4c4 26%,#a3a3a3 62%)"></div>
<div class="h" style="left:859.4px;top:776.6px">#</div>
<div class="p" style="left:893.7px;top:752.4px;width:20px;height:20px;background-image:radial-gradient(circle closest-side at 47% 49%,#8e8e8e 0,#8e8e8e 18%,#a3a3a3 66%)"></div>
<div class="h" style="left:893.7px;top:776.6px">#</div>
<div class="p" style="left:927.1px;top:752.4px;width:20px;height:18.7px;background-image:radial-gradient(circle closest-side at 55% 46%,#888 0,#888 18%,#a3a3a3 58%)"></div>
<div class="h" style="left:927.1px;top:775.3px">#</div>
<div class="p" style="left:960.6px;top:752.4px;width:19px;height:17.5px;background-image:radial-gradient(circle closest-side at 50% 48%,#8e8e8e 0,#8e8e8e 8%,#a3a3a3 56%)"></div>
<div class="h" style="left:960.1px;top:774.1px">#</div>
<div class="p" style="left:993.5px;top:752.4px;width:18.7px;height:18.7px;background-image:radial-gradient(circle closest-side at 54% 45%,#8e8e8e 0,#8e8e8e 8%,#a3a3a3 56%)"></div>
<div class="h" style="left:992.9px;top:775.3px">#</div>
<div class="p" style="left:1025.7px;top:752.4px;width:19px;height:17.5px;background-image:radial-gradient(circle closest-side at 51% 50%,#888 0,#888 18%,#a3a3a3 58%)"></div>
<div class="h" style="left:1025.2px;top:774.1px">#</div>
<div class="p" style="left:1057.9px;top:752.4px;width:20.2px;height:20px;background-image:radial-gradient(circle closest-side at 46% 46%,#8b8b8b 0,#8b8b8b 8%,#a3a3a3 56%)"></div>
<div class="h" style="left:1058.0px;top:776.6px">#</div>
<div class="p" style="left:1091.6px;top:752.4px;width:18.7px;height:18.7px;background-image:radial-gradient(circle closest-side at 47% 44%,#949494 0,#949494 8%,#a3a3a3 48%)"></div>
<div class="h" style="left:1090.9px;top:775.3px">#</div>
<div class="p" style="left:1124.2px;top:752.4px;width:17.5px;height:18.7px;background-image:radial-gradient(circle closest-side at 49% 46%,#8b8b8b 0,#8b8b8b 8%,#a3a3a3 56%)"></div>
<div class="h" style="left:1123.0px;top:775.3px">#</div>
<div class="p" style="left:1155.2px;top:752.4px;width:17.7px;height:18.7px;background-image:radial-gradient(circle closest-side at 52% 43%,#949494 0,#949494 8%,#a3a3a3 56%)"></div>
<div class="h" style="left:1154.0px;top:775.3px">#</div>
<div class="p" style="left:1186.3px;top:752.4px;width:20px;height:18.7px;background-image:radial-gradient(circle closest-side at 54% 47%,#c4c4c4 0,#c4c4c4 14%,#a3a3a3 58%)"></div>
<div class="h" style="left:1186.3px;top:775.3px">#</div>
<div class="p" style="left:1219.8px;top:752.4px;width:20.2px;height:18.7px;background-image:radial-gradient(circle closest-side at 54% 43%,#888 0,#888 8%,#a3a3a3 56%)"></div>
<div class="h" style="left:1219.9px;top:775.3px">#</div>
<div class="p" style="left:1253.5px;top:752.4px;width:18.7px;height:20px;background-image:radial-gradient(circle closest-side at 53% 45%,#8b8b8b 0,#8b8b8b 8%,#a3a3a3 48%)"></div>
<div class="h" style="left:1252.8px;top:776.6px">#</div>
<div class="p" style="left:1285.6px;top:752.4px;width:18.7px;height:17.5px;background-image:radial-gradient(circle closest-side at 51% 48%,#8e8e8e 0,#8e8e8e 18%,#a3a3a3 58%)"></div>
<div class="h" style="left:1284.9px;top:774.1px">#</div>
<div class="p" style="left:1317.8px;top:752.4px;width:18.7px;height:18.7px;background-image:radial-gradient(circle closest-side at 47% 50%,#888 0,#888 18%,#a3a3a3 58%)"></div>
<div class="h" style="left:1317.1px;top:775.3px">#</div>
<div class="p" style="left:1350px;top:752.4px;width:20.2px;height:20px;background-image:radial-gradient(circle closest-side at 48% 49%,#949494 0,#949494 12%,#a3a3a3 52%)"></div>
<div class="h" style="left:1350.1px;top:776.6px">#</div>
<div class="p" style="left:1383.7px;top:752.4px;width:20.2px;height:20px;background-image:radial-gradient(circle closest-side at 48% 54%,#c4c4c4 0,#c4c4c4 20%,#a3a3a3 56%)"></div>
<div class="h" style="left:1383.8px;top:776.6px">#</div>
<div class="p" style="left:1417.4px;top:752.4px;width:18.7px;height:20px;background-image:radial-gradient(circle closest-side at 47% 50%,#888 0,#888 18%,#a3a3a3 58%)"></div>
<div class="h" style="left:1416.8px;top:776.6px">#</div>
<div class="p" style="left:763px;top:799.5px;width:17.5px;height:18.5px;background-image:radial-gradient(circle closest-side at 48% 51%,#b6b6b6 0,#b6b6b6 26%,#a3a3a3 70%)"></div>
<div class="h" style="left:761.8px;top:822.2px">#</div>
<div class="p" style="left:794.2px;top:799.5px;width:18.7px;height:18.5px;background-image:radial-gradient(circle closest-side at 53% 45%,#888 0,#888 18%,#a3a3a3 58%)"></div>
<div class="h" style="left:793.6px;top:822.2px">#</div>
<div class="p" style="left:826.3px;top:799.5px;width:18.7px;height:18.5px;background-image:radial-gradient(circle closest-side at 55% 53%,#bcbcbc 0,#bcbcbc 26%,#a3a3a3 62%)"></div>
<div class="h" style="left:825.6px;top:822.2px">#</div>
<div class="p" style="left:858.5px;top:799.5px;width:20.2px;height:20px;background-image:radial-gradient(circle closest-side at 48% 47%,#888 0,#888 12%,#a3a3a3 52%)"></div>
<div class="h" style="left:858.6px;top:823.7px">#</div>
<div class="p" style="left:892.2px;top:799.5px;width:17.5px;height:18.5px;background-image:radial-gradient(circle closest-side at 49% 46%,#888 0,#888 8%,#a3a3a3 56%)"></div>
<div class="h" style="left:891.0px;top:822.2px">#</div>
<div class="p" style="left:923.1px;top:799.5px;width:18.7px;height:18.5px;background-image:radial-gradient(circle closest-side at 50% 45%,#888 0,#888 8%,#a3a3a3 56%)"></div>
<div class="h" style="left:922.5px;top:822.2px">#</div>
<div class="p" style="left:955.3px;top:799.5px;width:17.5px;height:18.5px;background-image:radial-gradient(circle closest-side at 55% 43%,#8e8e8e 0,#8e8e8e 12%,#a3a3a3 52%)"></div>
<div class="h" style="left:954.0px;top:822.2px">#</div>
<div class="p" style="left:987px;top:799.5px;width:18.7px;height:18.5px;background-image:radial-gradient(circle closest-side at 47% 50%,#888 0,#888 18%,#a3a3a3 66%)"></div>
<div class="h" style="left:986.4px;top:822.2px">#</div>
<div class="p" style="left:1019.2px;top:799.5px;width:19px;height:18.5px;background-image:radial-gradient(circle closest-side at 54% 47%,#888 0,#888 12%,#a3a3a3 52%)"></div>
<div class="h" style="left:1018.7px;top:822.2px">#</div>
<div class="p" style="left:1051.4px;top:799.5px;width:17.5px;height:18.5px;background-image:radial-gradient(circle closest-side at 47% 50%,#b6b6b6 0,#b6b6b6 20%,#a3a3a3 64%)"></div>
<div class="h" style="left:1050.2px;top:822.2px">#</div>
<div class="p" style="left:1082.3px;top:799.5px;width:20px;height:20px;background-image:radial-gradient(circle closest-side at 52% 52%,#b6b6b6 0,#b6b6b6 20%,#a3a3a3 56%)"></div>
<div class="h" style="left:1082.3px;top:823.7px">#</div>
<div class="p" style="left:1116.2px;top:799.5px;width:18.7px;height:18.5px;background-image:radial-gradient(circle closest-side at 51% 49%,#888 0,#888 18%,#a3a3a3 66%)"></div>
<div class="h" style="left:1115.5px;top:822.2px">#</div>
<div class="p" style="left:1148.7px;top:799.5px;width:17.5px;height:18.5px;background-image:radial-gradient(circle closest-side at 47% 48%,#c4c4c4 0,#c4c4c4 26%,#a3a3a3 62%)"></div>
<div class="h" style="left:1147.5px;top:822.2px">#</div>
<div class="p" style="left:1179.4px;top:799.5px;width:17.5px;height:18.5px;background-image:radial-gradient(circle closest-side at 48% 46%,#8b8b8b 0,#8b8b8b 12%,#a3a3a3 52%)"></div>
<div class="h" style="left:1178.2px;top:822.2px">#</div>
<div class="p" style="left:1210.3px;top:799.5px;width:18.7px;height:18.5px;background-image:radial-gradient(circle closest-side at 47% 51%,#888 0,#888 18%,#a3a3a3 66%)"></div>
<div class="h" style="left:1209.6px;top:822.2px">#</div>
<div class="p" style="left:1242.7px;top:799.5px;width:20px;height:20px;background-image:radial-gradient(circle closest-side at 54% 46%,#bcbcbc 0,#bcbcbc 26%,#a3a3a3 62%)"></div>
<div class="h" style="left:1242.7px;top:823.7px">#</div>
<div class="p" style="left:1276.2px;top:799.5px;width:20px;height:20px;background-image:radial-gradient(circle closest-side at 51% 49%,#8b8b8b 0,#8b8b8b 18%,#a3a3a3 66%)"></div>
<div class="h" style="left:1276.2px;top:823.7px">#</div>
<div class="p" style="left:1309.6px;top:799.5px;width:20.2px;height:21.2px;background-image:radial-gradient(circle closest-side at 54% 44%,#bcbcbc 0,#bcbcbc 14%,#a3a3a3 50%)"></div>
<div class="h" style="left:1309.7px;top:824.9px">#</div>
<div class="p" style="left:1343.3px;top:799.5px;width:17.5px;height:18.5px;background-image:radial-gradient(circle closest-side at 51% 45%,#c4c4c4 0,#c4c4c4 14%,#a3a3a3 58%)"></div>
<div class="h" style="left:1342.0px;top:822.2px">#</div>
<div class="p" style="left:1374.2px;top:799.5px;width:18.7px;height:18.5px;background-image:radial-gradient(circle closest-side at 53% 51%,#c4c4c4 0,#c4c4c4 26%,#a3a3a3 70%)"></div>
<div class="h" style="left:1373.5px;top:822.2px">#</div>
<div class="p" style="left:1406.4px;top:799.5px;width:20.2px;height:18.5px;background-image:radial-gradient(circle closest-side at 46% 49%,#8e8e8e 0,#8e8e8e 12%,#a3a3a3 60%)"></div>
<div class="h" style="left:1406.5px;top:822.2px">#</div>
<div class="p" style="left:1440.1px;top:799.5px;width:18.7px;height:18.5px;background-image:radial-gradient(circle closest-side at 47% 46%,#8b8b8b 0,#8b8b8b 8%,#a3a3a3 56%)"></div>
<div class="h" style="left:1439.4px;top:822.2px">#</div>
<div class="p" style="left:763px;top:847.9px;width:18.7px;height:20.2px;background-image:radial-gradient(circle closest-side at 49% 45%,#8e8e8e 0,#8e8e8e 18%,#a3a3a3 58%)"></div>
<div class="h" style="left:762.4px;top:872.3px">#</div>
<div class="p" style="left:795.4px;top:847.9px;width:18.7px;height:19.5px;background-image:radial-gradient(circle closest-side at 46% 49%,#8e8e8e 0,#8e8e8e 8%,#a3a3a3 56%)"></div>
<div class="h" style="left:794.8px;top:871.6px">#</div>
<div class="p" style="left:827.6px;top:847.9px;width:20.2px;height:22px;background-image:radial-gradient(circle closest-side at 50% 51%,#888 0,#888 8%,#a3a3a3 56%)"></div>
<div class="h" style="left:827.7px;top:874.1px">#</div>
<div class="p" style="left:861.3px;top:847.9px;width:20.2px;height:22px;background-image:radial-gradient(circle closest-side at 54% 42%,#8b8b8b 0,#8b8b8b 18%,#a3a3a3 66%)"></div>
<div class="h" style="left:861.4px;top:874.1px">#</div>
<div class="p" style="left:895px;top:847.9px;width:17.2px;height:19.5px;background-image:radial-gradient(circle closest-side at 50% 50%,#888 0,#888 18%,#a3a3a3 58%)"></div>
<div class="h" style="left:893.6px;top:871.6px">#</div>
<div class="p" style="left:925.6px;top:847.9px;width:17.5px;height:19.5px;background-image:radial-gradient(circle closest-side at 48% 42%,#8e8e8e 0,#8e8e8e 12%,#a3a3a3 60%)"></div>
<div class="h" style="left:924.4px;top:871.6px">#</div>
<div class="p" style="left:956.6px;top:847.9px;width:19px;height:20.2px;background-image:radial-gradient(circle closest-side at 46% 43%,#949494 0,#949494 12%,#a3a3a3 52%)"></div>
<div class="h" style="left:956.1px;top:872.3px">#</div>
<div class="p" style="left:989.5px;top:847.9px;width:18.7px;height:19.5px;background-image:radial-gradient(circle closest-side at 45% 45%,#888 0,#888 18%,#a3a3a3 66%)"></div>
<div class="h" style="left:988.9px;top:871.6px">#</div>
<div class="p" style="left:1021.7px;top:847.9px;width:20.2px;height:20.7px;background-image:radial-gradient(circle closest-side at 51% 53%,#b6b6b6 0,#b6b6b6 14%,#a3a3a3 58%)"></div>
<div class="h" style="left:1021.8px;top:872.8px">#</div>
<div class="p" style="left:1055.4px;top:847.9px;width:17.5px;height:19.5px;background-image:radial-gradient(circle closest-side at 54% 50%,#8e8e8e 0,#8e8e8e 12%,#a3a3a3 60%)"></div>
<div class="h" style="left:1054.2px;top:871.6px">#</div>
<div class="p" style="left:1086.3px;top:847.9px;width:18.7px;height:19.5px;background-image:radial-gradient(circle closest-side at 53% 43%,#949494 0,#949494 8%,#a3a3a3 48%)"></div>
<div class="h" style="left:1085.6px;top:871.6px">#</div>
<div class="p" style="left:1118.7px;top:847.9px;width:17.7px;height:19.5px;background-image:radial-gradient(circle closest-side at 53% 49%,#8b8b8b 0,#8b8b8b 8%,#a3a3a3 56%)"></div>
<div class="h" style="left:1117.5px;top:871.6px">#</div>
<div class="p" style="left:1149.9px;top:847.9px;width:17.5px;height:19.5px;background-image:radial-gradient(circle closest-side at 47% 46%,#949494 0,#949494 12%,#a3a3a3 60%)"></div>
<div class="h" style="left:1148.7px;top:871.6px">#</div>
<div class="p" style="left:1180.9px;top:847.9px;width:20px;height:20.7px;background-image:radial-gradient(circle closest-side at 50% 47%,#8e8e8e 0,#8e8e8e 12%,#a3a3a3 52%)"></div>
<div class="h" style="left:1180.9px;top:872.8px">#</div>
<div class="p" style="left:1214.3px;top:847.9px;width:17.5px;height:19.5px;background-image:radial-gradient(circle closest-side at 50% 45%,#888 0,#888 18%,#a3a3a3 66%)"></div>
<div class="h" style="left:1213.0px;top:871.6px">#</div>
<div class="p" style="left:1245.2px;top:847.9px;width:18.7px;height:19.5px;background-image:radial-gradient(circle closest-side at 49% 44%,#888 0,#888 18%,#a3a3a3 58%)"></div>
<div class="h" style="left:1244.5px;top:871.6px">#</div>
<div class="p" style="left:1277.4px;top:847.9px;width:21.5px;height:22px;background-image:radial-gradient(circle closest-side at 52% 46%,#8e8e8e 0,#8e8e8e 12%,#a3a3a3 52%)"></div>
<div class="h" style="left:1278.2px;top:874.1px">#</div>
<div class="p" style="left:1312.3px;top:847.9px;width:18.7px;height:20.7px;background-image:radial-gradient(circle closest-side at 49% 43%,#949494 0,#949494 8%,#a3a3a3 48%)"></div>
<div class="h" style="left:1311.6px;top:872.8px">#</div>
<div class="p" style="left:1344.5px;top:847.9px;width:19px;height:19.5px;background-image:radial-gradient(circle closest-side at 52% 53%,#bcbcbc 0,#bcbcbc 20%,#a3a3a3 64%)"></div>
<div class="h" style="left:1344.0px;top:871.6px">#</div>
<div class="p" style="left:1377px;top:847.9px;width:18.7px;height:20.7px;background-image:radial-gradient(circle closest-side at 49% 50%,#8b8b8b 0,#8b8b8b 12%,#a3a3a3 60%)"></div>
<div class="h" style="left:1376.3px;top:872.8px">#</div>
<div class="p" style="left:1409.1px;top:847.9px;width:29.4px;height:31.2px;background-image:radial-gradient(circle closest-side at 53% 50%,#fff 0,#f4f4f4 14%,#5c5c5c 33%,#6e6e6e 46%,#b0b0b0 64%,#a3a3a3 88%)"></div>
<div class="h" style="left:1413.8px;top:883.3px">#</div>
<div class="p" style="left:763px;top:906.2px;width:20.2px;height:20px;background-image:radial-gradient(circle closest-side at 46% 48%,#bcbcbc 0,#bcbcbc 20%,#a3a3a3 56%)"></div>
<div class="h" style="left:763.1px;top:930.4px">#</div>
<div class="p" style="left:796.9px;top:906.2px;width:18.7px;height:17.5px;background-image:radial-gradient(circle closest-side at 47% 46%,#8e8e8e 0,#8e8e8e 8%,#a3a3a3 48%)"></div>
<div class="h" style="left:796.2px;top:927.9px">#</div>
<div class="p" style="left:829.1px;top:906.2px;width:36.2px;height:37.4px;background-image:radial-gradient(circle closest-side at 48% 49%,#c8c8c8 0,#b4b4b4 12%,#777 30%,#808080 42%,#ababab 62%,#a3a3a3 85%)"></div>
<div class="h" style="left:837.2px;top:947.8px">#</div>
<div class="p" style="left:878.7px;top:906.2px;width:19px;height:18.7px;background-image:radial-gradient(circle closest-side at 50% 42%,#949494 0,#949494 12%,#a3a3a3 60%)"></div>
<div class="h" style="left:878.2px;top:929.1px">#</div>
<div class="p" style="left:910.9px;top:906.2px;width:20.2px;height:20px;background-image:radial-gradient(circle closest-side at 52% 45%,#bcbcbc 0,#bcbcbc 20%,#a3a3a3 64%)"></div>
<div class="h" style="left:911.0px;top:930.4px">#</div>
<div class="p" style="left:944.6px;top:906.2px;width:20px;height:21.2px;background-image:radial-gradient(circle closest-side at 49% 48%,#c4c4c4 0,#c4c4c4 14%,#a3a3a3 50%)"></div>
<div class="h" style="left:944.6px;top:931.6px">#</div>
<div class="p" style="left:978px;top:906.2px;width:22px;height:21.2px;background-image:radial-gradient(circle closest-side at 48% 47%,#bcbcbc 0,#bcbcbc 14%,#a3a3a3 50%)"></div>
<div class="h" style="left:979.0px;top:931.6px">#</div>
<div class="p" style="left:1013.7px;top:906.2px;width:18.7px;height:17.5px;background-image:radial-gradient(circle closest-side at 53% 48%,#8b8b8b 0,#8b8b8b 18%,#a3a3a3 58%)"></div>
<div class="h" style="left:1013.1px;top:927.9px">#</div>
<div class="p" style="left:1045.9px;top:906.2px;width:18.7px;height:18.7px;background-image:radial-gradient(circle closest-side at 53% 51%,#949494 0,#949494 18%,#a3a3a3 58%)"></div>
<div class="h" style="left:1045.2px;top:929.1px">#</div>
<div class="p" style="left:1078.1px;top:906.2px;width:18.7px;height:20px;background-image:radial-gradient(circle closest-side at 54% 43%,#949494 0,#949494 18%,#a3a3a3 58%)"></div>
<div class="h" style="left:1077.4px;top:930.4px">#</div>
<div class="p" style="left:1110.3px;top:906.2px;width:19px;height:18.7px;background-image:radial-gradient(circle closest-side at 55% 50%,#8e8e8e 0,#8e8e8e 18%,#a3a3a3 66%)"></div>
<div class="h" style="left:1109.8px;top:929.1px">#</div>
<div class="p" style="left:1143.2px;top:906.2px;width:18.7px;height:20px;background-image:radial-gradient(circle closest-side at 46% 45%,#8b8b8b 0,#8b8b8b 12%,#a3a3a3 52%)"></div>
<div class="h" style="left:1142.5px;top:930.4px">#</div>
<div class="p" style="left:1175.4px;top:906.2px;width:20.2px;height:20px;background-image:radial-gradient(circle closest-side at 50% 53%,#c4c4c4 0,#c4c4c4 20%,#a3a3a3 64%)"></div>
<div class="h" style="left:1175.5px;top:930.4px">#</div>
<div class="p" style="left:1209px;top:906.2px;width:18.7px;height:18.7px;background-image:radial-gradient(circle closest-side at 47% 50%,#8e8e8e 0,#8e8e8e 12%,#a3a3a3 52%)"></div>
<div class="h" style="left:1208.3px;top:929.1px">#</div>
<div class="p" style="left:1241.2px;top:906.2px;width:17.7px;height:18.7px;background-image:radial-gradient(circle closest-side at 49% 48%,#888 0,#888 18%,#a3a3a3 66%)"></div>
<div class="h" style="left:1240.0px;top:929.1px">#</div>
<div class="p" style="left:1272.2px;top:906.2px;width:17.5px;height:18.7px;background-image:radial-gradient(circle closest-side at 54% 49%,#8b8b8b 0,#8b8b8b 18%,#a3a3a3 66%)"></div>
<div class="h" style="left:1271.0px;top:929.1px">#</div>
<div class="p" style="left:1303.1px;top:906.2px;width:20.2px;height:18.7px;background-image:radial-gradient(circle closest-side at 52% 47%,#888 0,#888 12%,#a3a3a3 52%)"></div>
<div class="h" style="left:1303.2px;top:929.1px">#</div>
<div class="p" style="left:1336.5px;top:906.2px;width:19px;height:18.7px;background-image:radial-gradient(circle closest-side at 49% 45%,#c4c4c4 0,#c4c4c4 20%,#a3a3a3 56%)"></div>
<div class="h" style="left:1336.0px;top:929.1px">#</div>
<div class="p" style="left:1369px;top:906.2px;width:21.2px;height:21.2px;background-image:radial-gradient(circle closest-side at 49% 49%,#949494 0,#949494 12%,#a3a3a3 60%)"></div>
<div class="h" style="left:1369.6px;top:931.6px">#</div>
<div class="p" style="left:1403.7px;top:906.2px;width:20.2px;height:20px;background-image:radial-gradient(circle closest-side at 54% 42%,#888 0,#888 12%,#a3a3a3 60%)"></div>
<div class="h" style="left:1403.8px;top:930.4px">#</div>
<div class="p" style="left:1437.3px;top:906.2px;width:18.7px;height:18.7px;background-image:radial-gradient(circle closest-side at 54% 47%,#949494 0,#949494 18%,#a3a3a3 58%)"></div>
<div class="h" style="left:1436.6px;top:929.1px">#</div>
<div class="p" style="left:763px;top:971.1px;width:17.5px;height:18.7px;background-image:radial-gradient(circle closest-side at 51% 48%,#c4c4c4 0,#c4c4c4 20%,#a3a3a3 56%)"></div>
<div class="h" style="left:761.8px;top:994.0px">#</div>
<div class="p" style="left:794.2px;top:971.1px;width:20px;height:20px;background-image:radial-gradient(circle closest-side at 51% 53%,#bcbcbc 0,#bcbcbc 26%,#a3a3a3 62%)"></div>
<div class="h" style="left:794.2px;top:995.3px">#</div>
<div class="p" style="left:827.6px;top:971.1px;width:19px;height:18.7px;background-image:radial-gradient(circle closest-side at 51% 45%,#8b8b8b 0,#8b8b8b 8%,#a3a3a3 56%)"></div>
<div class="h" style="left:827.1px;top:994.0px">#</div>
<div class="p" style="left:860px;top:971.1px;width:17.5px;height:18.7px;background-image:radial-gradient(circle closest-side at 46% 46%,#8b8b8b 0,#8b8b8b 12%,#a3a3a3 60%)"></div>
<div class="h" style="left:858.8px;top:994.0px">#</div>
<div class="p" style="left:1166.1px;top:971.1px;width:18.7px;height:18.7px;background-image:radial-gradient(circle closest-side at 45% 42%,#949494 0,#949494 12%,#a3a3a3 60%)"></div>
<div class="h" style="left:1165.4px;top:994.0px">#</div>
<div class="p" style="left:1198.3px;top:971.1px;width:18.7px;height:18.7px;background-image:radial-gradient(circle closest-side at 49% 51%,#8e8e8e 0,#8e8e8e 18%,#a3a3a3 58%)"></div>
<div class="h" style="left:1197.6px;top:994.0px">#</div>
<div class="p" style="left:1230.5px;top:971.1px;width:18.7px;height:18.7px;background-image:radial-gradient(circle closest-side at 48% 44%,#8e8e8e 0,#8e8e8e 8%,#a3a3a3 48%)"></div>
<div class="h" style="left:1229.8px;top:994.0px">#</div>
<div class="p" style="left:1262.7px;top:971.1px;width:19px;height:20px;background-image:radial-gradient(circle closest-side at 54% 51%,#888 0,#888 8%,#a3a3a3 56%)"></div>
<div class="h" style="left:1262.2px;top:995.3px">#</div>
<div class="p" style="left:1295.1px;top:971.1px;width:20px;height:20px;background-image:radial-gradient(circle closest-side at 53% 52%,#bcbcbc 0,#bcbcbc 26%,#a3a3a3 70%)"></div>
<div class="h" style="left:1295.1px;top:995.3px">#</div>
<div class="p" style="left:1328.6px;top:971.1px;width:17.5px;height:18.7px;background-image:radial-gradient(circle closest-side at 48% 42%,#888 0,#888 12%,#a3a3a3 52%)"></div>
<div class="h" style="left:1327.3px;top:994.0px">#</div>
<div class="p" style="left:1359.5px;top:971.1px;width:18.7px;height:18.7px;background-image:radial-gradient(circle closest-side at 52% 48%,#8e8e8e 0,#8e8e8e 8%,#a3a3a3 48%)"></div>
<div class="h" style="left:1358.8px;top:994.0px">#</div>
<div class="p" style="left:1391.7px;top:971.1px;width:17.5px;height:18.7px;background-image:radial-gradient(circle closest-side at 48% 48%,#949494 0,#949494 12%,#a3a3a3 60%)"></div>
<div class="h" style="left:1390.5px;top:994.0px">#</div>
<div class="p" style="left:1422.6px;top:971.1px;width:18.7px;height:20px;background-image:radial-gradient(circle closest-side at 48% 48%,#8b8b8b 0,#8b8b8b 8%,#a3a3a3 48%)"></div>
<div class="h" style="left:1421.9px;top:995.3px">#</div>
<div class="p" style="left:763px;top:1026.2px;width:18.7px;height:18.7px;background-image:radial-gradient(circle closest-side at 49% 48%,#8e8e8e 0,#8e8e8e 8%,#a3a3a3 48%)"></div>
<div class="h" style="left:762.4px;top:1049.1px">#</div>
<div class="p" style="left:795.4px;top:1026.2px;width:18.7px;height:18.7px;background-image:radial-gradient(circle closest-side at 53% 50%,#949494 0,#949494 8%,#a3a3a3 56%)"></div>
<div class="h" style="left:794.8px;top:1049.1px">#</div>
<div class="p" style="left:827.6px;top:1026.2px;width:17.5px;height:18.7px;background-image:radial-gradient(circle closest-side at 50% 48%,#888 0,#888 8%,#a3a3a3 56%)"></div>
<div class="h" style="left:826.4px;top:1049.1px">#</div>
<div class="p" style="left:858.5px;top:1026.2px;width:19px;height:18.7px;background-image:radial-gradient(circle closest-side at 54% 45%,#c4c4c4 0,#c4c4c4 20%,#a3a3a3 64%)"></div>
<div class="h" style="left:858.0px;top:1049.1px">#</div>
<div class="p" style="left:1191.6px;top:1026.2px;width:19px;height:18.7px;background-image:radial-gradient(circle closest-side at 48% 47%,#949494 0,#949494 18%,#a3a3a3 66%)"></div>
<div class="h" style="left:1191.1px;top:1049.1px">#</div>
<div class="p" style="left:1223.8px;top:1026.2px;width:18.7px;height:18.7px;background-image:radial-gradient(circle closest-side at 47% 50%,#8e8e8e 0,#8e8e8e 18%,#a3a3a3 58%)"></div>
<div class="h" style="left:1223.1px;top:1049.1px">#</div>
<div class="p" style="left:1256px;top:1026.2px;width:17.5px;height:18.7px;background-image:radial-gradient(circle closest-side at 51% 45%,#8e8e8e 0,#8e8e8e 18%,#a3a3a3 66%)"></div>
<div class="h" style="left:1254.8px;top:1049.1px">#</div>
<div class="p" style="left:1286.9px;top:1026.2px;width:19px;height:18.7px;background-image:radial-gradient(circle closest-side at 53% 42%,#8b8b8b 0,#8b8b8b 18%,#a3a3a3 66%)"></div>
<div class="h" style="left:1286.4px;top:1049.1px">#</div>
<div class="p" style="left:1319.1px;top:1026.2px;width:19px;height:18.7px;background-image:radial-gradient(circle closest-side at 47% 43%,#888 0,#888 12%,#a3a3a3 52%)"></div>
<div class="h" style="left:1318.6px;top:1049.1px">#</div>
<div class="p" style="left:1351.5px;top:1026.2px;width:20.2px;height:18.7px;background-image:radial-gradient(circle closest-side at 48% 47%,#c4c4c4 0,#c4c4c4 26%,#a3a3a3 70%)"></div>
<div class="h" style="left:1351.6px;top:1049.1px">#</div>
<div class="p" style="left:1384.9px;top:1026.2px;width:18.7px;height:18.7px;background-image:radial-gradient(circle closest-side at 49% 48%,#8e8e8e 0,#8e8e8e 8%,#a3a3a3 48%)"></div>
<div class="h" style="left:1384.2px;top:1049.1px">#</div>
<div class="p" style="left:1417.1px;top:1026.2px;width:19px;height:18.7px;background-image:radial-gradient(circle closest-side at 52% 42%,#888 0,#888 8%,#a3a3a3 56%)"></div>
<div class="h" style="left:1416.6px;top:1049.1px">#</div>
<div style="left:1293.5px;top:1040.3px;width:130.5px;height:3.4px;background:#12a04a;"></div>
<div style="left:1292.5px;top:1033.5px;width:3px;height:16.5px;background:#12a04a;"></div>
<div style="left:1422px;top:1033.5px;width:3px;height:16.5px;background:#12a04a;"></div>
<span class="t" style="left:1336.0px;top:1049.4px;font-size:17.5px;line-height:21px;color:#12a04a;letter-spacing:-0.66px;text-shadow:.3px 0 0 #12a04a;">50 um</span>
<svg style="left:1067.2px;top:656.8px" width="22" height="32" viewBox="0 0 22 32"><path d="M2 2 L2 24 L7.2 19.2 L11.2 28.2 L15 26.5 L11 17.8 L18 17.5 Z" fill="#fff" stroke="#111" stroke-width="1.6" stroke-linejoin="round"/></svg>
<div style="left:750px;top:1088.5px;width:725px;height:30.5px;background:#f0f0f0;"></div>
<div style="left:750px;top:1088.5px;width:725px;height:2px;background:#fdfdfd;"></div>
<div style="left:752.5px;top:1092px;width:78.5px;height:24.5px;background:#f0f0f0;border:1px solid;border-color:#a5a5a5 #fff #fff #a5a5a5;"></div>
<div style="left:836px;top:1092px;width:446.5px;height:24.5px;background:#f0f0f0;border:1px solid;border-color:#a5a5a5 #fff #fff #a5a5a5;"></div>
<div style="left:1288.5px;top:1092px;width:148px;height:24.5px;background:#f0f0f0;border:1px solid;border-color:#a5a5a5 #fff #fff #a5a5a5;"></div>
<span class="t" style="left:759.0px;top:1095.8px;font-size:16px;line-height:19px;color:#1a1a1a;transform:scaleX(0.882);transform-origin:0 50%;">Saved</span>
<span class="t" style="left:842.5px;top:1095.8px;font-size:16px;line-height:19px;color:#1a1a1a;transform:scaleX(0.902);transform-origin:0 50%;">Total:</span>
<span class="t" style="left:1162.5px;top:1095.8px;font-size:16px;line-height:19px;color:#1a1a1a;transform:scaleX(0.913);transform-origin:0 50%;">Gradient</span>
<span class="t" style="left:1293.5px;top:1095.8px;font-size:16px;line-height:19px;color:#1a1a1a;transform:scaleX(0.868);transform-origin:0 50%;">Classified:  0</span>
<div style="left:1180px;top:971.5px;width:4px;height:18px;background:#8f8f8f;"></div>
<div style="left:885.5px;top:941px;width:293.5px;height:180px;background:linear-gradient(180deg,#9ec6e6 0,#b4d3ec 14px,#cfe2f3 34px,#d6e6f5 100%);border:1.5px solid #1d6a8a;border-radius:6px 6px 2px 2px;box-shadow:inset 0 0 0 1px rgba(255,255,255,.65);"></div>
<svg style="left:891px;top:944.5px" width="26" height="24" viewBox="8 9 26 24"><rect x="20" y="14" width="11.6" height="17" fill="#fcfcfd"/><rect x="22.5" y="13.6" width="7.6" height="1.9" fill="#2b5fc4"/><path d="M15 11 L12 17 L11.5 22 L14 25.2 L18.2 24 L20.2 20 L20 16 L17.5 12.5 Z" fill="#1f9fe2"/><path d="M12 19 L9.3 21 L10.4 24 L14 26.2 L15.2 24.6 L12.6 22.6 Z" fill="#0b1116"/><path d="M12 20.6 L20.6 20.6" stroke="#0f3a44" stroke-width="1.1"/><path d="M15.3 11.3 L18 13.6 L16.4 14.2 Z" fill="#0c2b45"/><path d="M23.4 17.8 L25 17.8 L25.6 22 L29.6 28.6 L19.4 28.6 L21 25.5 L22.6 22 Z" fill="#e8232c"/></svg>
<span class="t" style="left:919.3px;top:947.6px;font-size:17px;line-height:20px;color:#1b2741;letter-spacing:-0.63px;">Particle Properties</span>
<div style="left:1131.5px;top:948px;width:41px;height:21.5px;border:1px solid #8a2a24;border-radius:4px;background:linear-gradient(180deg,#eba096 0,#dd6e62 45%,#c8392c 52%,#d2574a 100%);box-shadow:inset 0 0 0 1px rgba(255,255,255,.45);"></div>
<svg style="left:1143.5px;top:951.5px" width="17" height="15" viewBox="0 0 17 15"><path d="M3 2.5 L14 12.5 M14 2.5 L3 12.5" stroke="#6b2a26" stroke-width="5" stroke-linecap="round"/><path d="M3 2.5 L14 12.5 M14 2.5 L3 12.5" stroke="#fff" stroke-width="2.8" stroke-linecap="round"/></svg>
<div style="left:889.5px;top:974.5px;width:286.5px;height:145px;background:#fff;"></div>
<span class="t" style="left:895.7px;top:978.9px;font-size:15px;line-height:18px;color:#1a1a1a;letter-spacing:-0.12px;">Particle ID</span>
<span class="t" style="left:1141.3px;top:978.9px;font-size:15px;line-height:18px;color:#1a1a1a;letter-spacing:-0.89px;">2881</span>
<div style="left:889.5px;top:998.17px;width:286.5px;height:1px;background:#dcdcdc;"></div>
<span class="t" style="left:895.7px;top:1003.1px;font-size:15px;line-height:18px;color:#1a1a1a;letter-spacing:0.06px;">Aspect Ratio</span>
<span class="t" style="left:1145.0px;top:1003.1px;font-size:15px;line-height:18px;color:#1a1a1a;letter-spacing:-0.73px;">0.87</span>
<div style="left:889.5px;top:1022.34px;width:286.5px;height:1px;background:#dcdcdc;"></div>
<span class="t" style="left:895.7px;top:1027.2px;font-size:15px;line-height:18px;color:#1a1a1a;letter-spacing:0.03px;">Circularity</span>
<span class="t" style="left:1145.0px;top:1027.2px;font-size:15px;line-height:18px;color:#1a1a1a;letter-spacing:-0.73px;">0.98</span>
<div style="left:889.5px;top:1046.51px;width:286.5px;height:1px;background:#dcdcdc;"></div>
<span class="t" style="left:895.7px;top:1051.4px;font-size:15px;line-height:18px;color:#1a1a1a;letter-spacing:0.16px;">Circularity (Hu)</span>
<span class="t" style="left:1145.0px;top:1051.4px;font-size:15px;line-height:18px;color:#1a1a1a;letter-spacing:-0.73px;">0.99</span>
<div style="left:889.5px;top:1070.68px;width:286.5px;height:1px;background:#dcdcdc;"></div>
<span class="t" style="left:895.7px;top:1075.6px;font-size:15px;line-height:18px;color:#1a1a1a;letter-spacing:-0.18px;">Diameter (ESD)</span>
<span class="t" style="left:1145.0px;top:1075.6px;font-size:15px;line-height:18px;color:#1a1a1a;letter-spacing:-0.73px;">5.59</span>
<div style="left:889.5px;top:1094.85px;width:286.5px;height:1px;background:#dcdcdc;"></div>
<span class="t" style="left:895.7px;top:1099.8px;font-size:15px;line-height:18px;color:#1a1a1a;letter-spacing:0.11px;">Geodesic Aspect Ratio</span>
<span class="t" style="left:1145.0px;top:1099.8px;font-size:15px;line-height:18px;color:#1a1a1a;letter-spacing:-0.73px;">1.00</span>
<div style="left:1051.5px;top:974.5px;width:1px;height:145px;background:#dcdcdc;"></div>
</body></html>
